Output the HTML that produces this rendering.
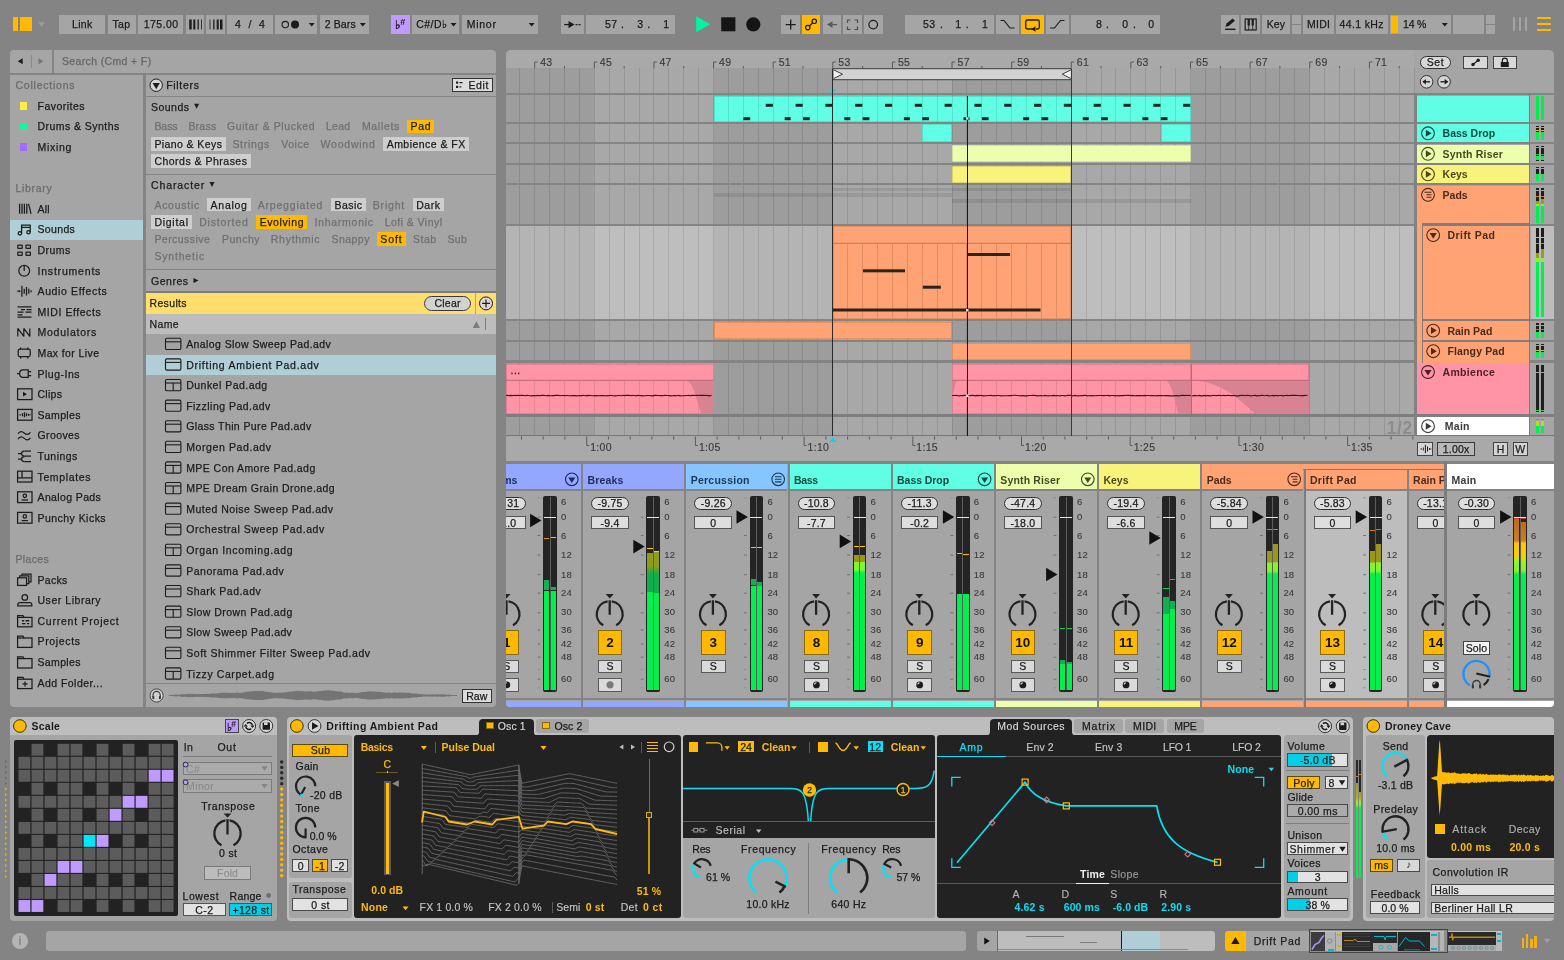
<!DOCTYPE html>
<html><head><meta charset="utf-8"><title>Live Set</title>
<style>
html,body{margin:0;padding:0;background:#848484;}
body{width:1564px;height:960px;position:relative;overflow:hidden;font-family:"Liberation Sans",sans-serif;}
#r{position:absolute;left:0;top:0;width:1564px;height:960px;overflow:hidden;will-change:transform;}
#r div,#r svg{position:absolute;}
#r svg{left:0;top:0;pointer-events:none;}
</style></head><body><div id="r">
<div style="left:13px;top:17.2px;width:5.3px;height:14px;background:#ffb901;"></div>
<div style="left:20.2px;top:17.2px;width:11.5px;height:14px;background:#ffb901;"></div>
<svg width="1564" height="960" viewBox="0 0 1564 960">
<polygon points="38,22.25 45,22.25 41.5,26.75" fill="#9c9c9c"/>
</svg>
<div style="left:58.7px;top:15px;width:46.3px;height:19px;background:#a5a5a5;"></div>
<div style="top:16.1px;height:16px;line-height:16px;font-size:10.5px;color:#1c1c1c;letter-spacing:0.31px;white-space:nowrap;-webkit-text-stroke:0.25px #1c1c1c;left:72px;">Link</div>
<div style="left:107.5px;top:15px;width:28.5px;height:19px;background:#a5a5a5;"></div>
<div style="top:16.1px;height:16px;line-height:16px;font-size:10.5px;color:#1c1c1c;letter-spacing:0.29px;white-space:nowrap;-webkit-text-stroke:0.25px #1c1c1c;left:112.5px;">Tap</div>
<div style="left:138px;top:15px;width:45px;height:19px;background:#a5a5a5;"></div>
<div style="top:16.1px;height:16px;line-height:16px;font-size:10.5px;color:#1c1c1c;letter-spacing:0.48px;white-space:nowrap;-webkit-text-stroke:0.25px #1c1c1c;left:143.7px;">175.00</div>
<div style="left:186px;top:15px;width:18px;height:19px;background:#a5a5a5;"></div>
<div style="left:206.3px;top:15px;width:18.7px;height:19px;background:#a5a5a5;"></div>
<svg width="1564" height="960" viewBox="0 0 1564 960">
<rect x="189.2" y="19.5" width="2.5" height="10" fill="#1c1c1c"/>
<rect x="193.3" y="19.5" width="2.0" height="10" fill="#1c1c1c"/>
<rect x="197.5" y="19.5" width="1.3" height="10" fill="#1c1c1c"/>
<rect x="201.2" y="19.5" width="0.8" height="10" fill="#1c1c1c"/>
<rect x="209.6" y="19.5" width="0.8" height="10" fill="#1c1c1c"/>
<rect x="213.2" y="19.5" width="1.3" height="10" fill="#1c1c1c"/>
<rect x="216.7" y="19.5" width="2.0" height="10" fill="#1c1c1c"/>
<rect x="220" y="19.5" width="2.5" height="10" fill="#1c1c1c"/>
</svg>
<div style="left:227px;top:15px;width:45.8px;height:19px;background:#a5a5a5;"></div>
<div style="top:16.1px;height:16px;line-height:16px;font-size:10.5px;color:#1c1c1c;letter-spacing:0px;white-space:nowrap;-webkit-text-stroke:0.25px #1c1c1c;left:88px;width:300px;text-align:center;">4</div>
<div style="top:16.1px;height:16px;line-height:16px;font-size:10.5px;color:#1c1c1c;letter-spacing:0px;white-space:nowrap;-webkit-text-stroke:0.25px #1c1c1c;left:100px;width:300px;text-align:center;">/</div>
<div style="top:16.1px;height:16px;line-height:16px;font-size:10.5px;color:#1c1c1c;letter-spacing:0px;white-space:nowrap;-webkit-text-stroke:0.25px #1c1c1c;left:112px;width:300px;text-align:center;">4</div>
<div style="left:275px;top:15px;width:42px;height:19px;background:#a5a5a5;"></div>
<svg width="1564" height="960" viewBox="0 0 1564 960">
<circle cx="285.3" cy="24.6" r="3.2" fill="none" stroke="#1c1c1c" stroke-width="1.1"/><circle cx="295" cy="24.6" r="4" fill="#1c1c1c"/>
<polygon points="308.7,23.05 314.7,23.05 311.7,26.55" fill="#1c1c1c"/>
</svg>
<div style="left:319.7px;top:15px;width:49px;height:19px;background:#a5a5a5;"></div>
<div style="top:16.1px;height:16px;line-height:16px;font-size:10.5px;color:#1c1c1c;letter-spacing:0.12px;white-space:nowrap;-webkit-text-stroke:0.25px #1c1c1c;left:324.7px;">2 Bars</div>
<svg width="1564" height="960" viewBox="0 0 1564 960">
<polygon points="359.8,23.05 365.8,23.05 362.8,26.55" fill="#1c1c1c"/>
</svg>
<div style="left:391px;top:15px;width:19px;height:19px;background:#bf9aff;"></div>
<div style="top:17px;height:16px;line-height:16px;font-size:11.5px;color:#1c1c1c;letter-spacing:0px;white-space:nowrap;-webkit-text-stroke:0.4px #1c1c1c;left:394.7px;">♭</div>
<div style="top:14.3px;height:16px;line-height:16px;font-size:9px;color:#1c1c1c;letter-spacing:0px;white-space:nowrap;font-weight:bold;left:400.2px;">#</div>
<div style="left:412px;top:15px;width:47.3px;height:19px;background:#a5a5a5;"></div>
<div style="top:16.1px;height:16px;line-height:16px;font-size:10.5px;color:#1c1c1c;letter-spacing:0.47px;white-space:nowrap;-webkit-text-stroke:0.25px #1c1c1c;left:416.2px;">C#/D♭</div>
<svg width="1564" height="960" viewBox="0 0 1564 960">
<polygon points="450.5,23.05 456.5,23.05 453.5,26.55" fill="#1c1c1c"/>
</svg>
<div style="left:462px;top:15px;width:76px;height:19px;background:#a5a5a5;"></div>
<div style="top:16.1px;height:16px;line-height:16px;font-size:10.5px;color:#1c1c1c;letter-spacing:0.75px;white-space:nowrap;-webkit-text-stroke:0.25px #1c1c1c;left:466.7px;">Minor</div>
<svg width="1564" height="960" viewBox="0 0 1564 960">
<polygon points="528.7,23.05 534.7,23.05 531.7,26.55" fill="#1c1c1c"/>
</svg>
<div style="left:560.5px;top:15px;width:23.2px;height:19px;background:#a5a5a5;"></div>
<svg width="1564" height="960" viewBox="0 0 1564 960">
<path d="M564.2 24.6H573" stroke="#1c1c1c" stroke-width="1.3" fill="none"/><polygon points="568.5,21 574.5,24.6 568.5,28.2" fill="#1c1c1c"/><path d="M575.5 24.6h2M578.6 24.6h2" stroke="#1c1c1c" stroke-width="1.1"/>
</svg>
<div style="left:585.8px;top:15px;width:88.9px;height:19px;background:#a5a5a5;"></div>
<div style="top:16.1px;height:16px;line-height:16px;font-size:10.5px;color:#1c1c1c;letter-spacing:0.4px;white-space:nowrap;-webkit-text-stroke:0.25px #1c1c1c;left:317.4px;width:300px;text-align:right;">57</div>
<div style="top:16.1px;height:16px;line-height:16px;font-size:10.5px;color:#1c1c1c;letter-spacing:0.4px;white-space:nowrap;-webkit-text-stroke:0.25px #1c1c1c;left:343.6px;width:300px;text-align:right;">3</div>
<div style="top:16.1px;height:16px;line-height:16px;font-size:10.5px;color:#1c1c1c;letter-spacing:0.4px;white-space:nowrap;-webkit-text-stroke:0.25px #1c1c1c;left:369.4px;width:300px;text-align:right;">1</div>
<div style="top:16.1px;height:16px;line-height:16px;font-size:10.5px;color:#1c1c1c;letter-spacing:0px;white-space:nowrap;-webkit-text-stroke:0.25px #1c1c1c;left:472.5px;width:300px;text-align:center;">.</div>
<div style="top:16.1px;height:16px;line-height:16px;font-size:10.5px;color:#1c1c1c;letter-spacing:0px;white-space:nowrap;-webkit-text-stroke:0.25px #1c1c1c;left:498.7px;width:300px;text-align:center;">.</div>
<svg width="1564" height="960" viewBox="0 0 1564 960">
<polygon points="696.2,16.3 696.2,32.3 710.3,24.3" fill="#00f5a0"/>
<rect x="721.2" y="17.3" width="14.2" height="14" fill="#151515"/><circle cx="753.3" cy="24.4" r="7.1" fill="#151515"/>
</svg>
<div style="left:781.3px;top:15px;width:18.4px;height:19px;background:#a5a5a5;"></div>
<svg width="1564" height="960" viewBox="0 0 1564 960">
<path d="M785.7 24.6h10M790.7 19.6v10" stroke="#1c1c1c" stroke-width="1.3"/>
</svg>
<div style="left:801.8px;top:15px;width:18.7px;height:19px;background:#ffb901;"></div>
<svg width="1564" height="960" viewBox="0 0 1564 960">
<circle cx="807.8" cy="27.6" r="2.2" fill="none" stroke="#1c1c1c" stroke-width="1.2"/><circle cx="814.3" cy="21.3" r="2.2" fill="none" stroke="#1c1c1c" stroke-width="1.2"/><path d="M809.4 26l3.3-3.2" stroke="#1c1c1c" stroke-width="1.2"/>
</svg>
<div style="left:822.7px;top:15px;width:18.3px;height:19px;background:#a5a5a5;"></div>
<svg width="1564" height="960" viewBox="0 0 1564 960">
<path d="M830 24.6h7" stroke="#5a5a5a" stroke-width="1.3"/><polygon points="827,24.6 832.5,21.2 832.5,28" fill="#5a5a5a"/>
</svg>
<div style="left:843.3px;top:15px;width:18.4px;height:19px;background:#a5a5a5;"></div>
<svg width="1564" height="960" viewBox="0 0 1564 960">
<path d="M847.5 23v-3h3M854.5 20h3v3M857.5 26.5v3h-3M850.5 29.5h-3v-3" stroke="#4a4a4a" stroke-width="1.2" fill="none"/>
</svg>
<div style="left:864px;top:15px;width:18.5px;height:19px;background:#a5a5a5;"></div>
<svg width="1564" height="960" viewBox="0 0 1564 960">
<circle cx="873.2" cy="24.6" r="4.3" fill="none" stroke="#1c1c1c" stroke-width="1.2"/>
</svg>
<div style="left:904.7px;top:15px;width:89.1px;height:19px;background:#a5a5a5;"></div>
<div style="top:16.1px;height:16px;line-height:16px;font-size:10.5px;color:#1c1c1c;letter-spacing:0.4px;white-space:nowrap;-webkit-text-stroke:0.25px #1c1c1c;left:635.4px;width:300px;text-align:right;">53</div>
<div style="top:16.1px;height:16px;line-height:16px;font-size:10.5px;color:#1c1c1c;letter-spacing:0.4px;white-space:nowrap;-webkit-text-stroke:0.25px #1c1c1c;left:661.6px;width:300px;text-align:right;">1</div>
<div style="top:16.1px;height:16px;line-height:16px;font-size:10.5px;color:#1c1c1c;letter-spacing:0.4px;white-space:nowrap;-webkit-text-stroke:0.25px #1c1c1c;left:688.2px;width:300px;text-align:right;">1</div>
<div style="top:16.1px;height:16px;line-height:16px;font-size:10.5px;color:#1c1c1c;letter-spacing:0px;white-space:nowrap;-webkit-text-stroke:0.25px #1c1c1c;left:791.4px;width:300px;text-align:center;">.</div>
<div style="top:16.1px;height:16px;line-height:16px;font-size:10.5px;color:#1c1c1c;letter-spacing:0px;white-space:nowrap;-webkit-text-stroke:0.25px #1c1c1c;left:817.3px;width:300px;text-align:center;">.</div>
<div style="left:996px;top:15px;width:22.9px;height:19px;background:#a5a5a5;"></div>
<svg width="1564" height="960" viewBox="0 0 1564 960">
<path d="M1000.5 20.5h3.5l6 7.5h4.5" stroke="#1c1c1c" stroke-width="1.2" fill="none"/>
</svg>
<div style="left:1021px;top:15px;width:23px;height:19px;background:#ffb901;"></div>
<svg width="1564" height="960" viewBox="0 0 1564 960">
<path d="M1033 29h-5.5a1.8 1.8 0 0 1-1.8-1.8v-5.4a1.8 1.8 0 0 1 1.8-1.8h10a1.8 1.8 0 0 1 1.8 1.8v5.4a1.8 1.8 0 0 1-1.8 1.8h-1.5" stroke="#1c1c1c" stroke-width="1.3" fill="none"/><polygon points="1031.3,29 1035.5,26.3 1035.5,31.7" fill="#1c1c1c"/>
</svg>
<div style="left:1046px;top:15px;width:22.8px;height:19px;background:#a5a5a5;"></div>
<svg width="1564" height="960" viewBox="0 0 1564 960">
<path d="M1050 28h4.5l6-7.5h4" stroke="#1c1c1c" stroke-width="1.2" fill="none"/>
</svg>
<div style="left:1070.8px;top:15px;width:89.2px;height:19px;background:#a5a5a5;"></div>
<div style="top:16.1px;height:16px;line-height:16px;font-size:10.5px;color:#1c1c1c;letter-spacing:0.4px;white-space:nowrap;-webkit-text-stroke:0.25px #1c1c1c;left:802.2px;width:300px;text-align:right;">8</div>
<div style="top:16.1px;height:16px;line-height:16px;font-size:10.5px;color:#1c1c1c;letter-spacing:0.4px;white-space:nowrap;-webkit-text-stroke:0.25px #1c1c1c;left:828.6px;width:300px;text-align:right;">0</div>
<div style="top:16.1px;height:16px;line-height:16px;font-size:10.5px;color:#1c1c1c;letter-spacing:0.4px;white-space:nowrap;-webkit-text-stroke:0.25px #1c1c1c;left:854.6px;width:300px;text-align:right;">0</div>
<div style="top:16.1px;height:16px;line-height:16px;font-size:10.5px;color:#1c1c1c;letter-spacing:0px;white-space:nowrap;-webkit-text-stroke:0.25px #1c1c1c;left:957.5px;width:300px;text-align:center;">.</div>
<div style="top:16.1px;height:16px;line-height:16px;font-size:10.5px;color:#1c1c1c;letter-spacing:0px;white-space:nowrap;-webkit-text-stroke:0.25px #1c1c1c;left:984.5px;width:300px;text-align:center;">.</div>
<div style="left:1221px;top:15px;width:18px;height:19px;background:#a5a5a5;"></div>
<svg width="1564" height="960" viewBox="0 0 1564 960">
<path d="M1225.5 26.8l1-3.2 6.2-5.2 2.2 2.4-6.2 5.2z" fill="#1c1c1c"/><path d="M1225 29.3h10.5" stroke="#1c1c1c" stroke-width="1.4"/>
</svg>
<div style="left:1241.2px;top:15px;width:18.8px;height:19px;background:#a5a5a5;"></div>
<svg width="1564" height="960" viewBox="0 0 1564 960">
<rect x="1245.2" y="19" width="11" height="11" fill="none" stroke="#1c1c1c" stroke-width="1.2"/><rect x="1247.6" y="19" width="2.2" height="6.5" fill="#1c1c1c"/><rect x="1251.6" y="19" width="2.2" height="6.5" fill="#1c1c1c"/><path d="M1248.7 25v5M1252.7 25v5" stroke="#1c1c1c" stroke-width="0.8"/>
</svg>
<div style="left:1262px;top:15px;width:28px;height:19px;background:#a5a5a5;"></div>
<div style="top:16.1px;height:16px;line-height:16px;font-size:10.5px;color:#1c1c1c;letter-spacing:0.04px;white-space:nowrap;-webkit-text-stroke:0.25px #1c1c1c;left:1266.8px;">Key</div>
<div style="left:1292.4px;top:15px;width:8.8px;height:9.2px;background:#a5a5a5;"></div>
<div style="left:1292.4px;top:25.2px;width:8.8px;height:8.8px;background:#a5a5a5;"></div>
<div style="left:1303.3px;top:15px;width:30.5px;height:19px;background:#a5a5a5;"></div>
<div style="top:16.1px;height:16px;line-height:16px;font-size:10.5px;color:#1c1c1c;letter-spacing:0.28px;white-space:nowrap;-webkit-text-stroke:0.25px #1c1c1c;left:1307px;">MIDI</div>
<div style="left:1336px;top:15px;width:51.8px;height:19px;background:#a5a5a5;"></div>
<div style="top:16.1px;height:16px;line-height:16px;font-size:10.5px;color:#1c1c1c;letter-spacing:0.35px;white-space:nowrap;-webkit-text-stroke:0.25px #1c1c1c;left:1339.6px;">44.1 kHz</div>
<div style="left:1390px;top:15px;width:60.9px;height:19px;background:#a5a5a5;"></div>
<div style="left:1391px;top:16px;width:7px;height:17px;background:#ffb901;"></div>
<div style="top:16.1px;height:16px;line-height:16px;font-size:10.5px;color:#1c1c1c;letter-spacing:-0.18px;white-space:nowrap;-webkit-text-stroke:0.25px #1c1c1c;left:1403px;">14 %</div>
<svg width="1564" height="960" viewBox="0 0 1564 960">
<polygon points="1441.8,23.05 1447.8,23.05 1444.8,26.55" fill="#1c1c1c"/>
</svg>
<div style="left:1453px;top:15px;width:30.5px;height:19px;background:#a5a5a5;"></div>
<div style="left:1485.8px;top:15px;width:8.8px;height:9.2px;background:#a5a5a5;"></div>
<div style="left:1485.8px;top:25.2px;width:8.8px;height:8.8px;background:#a5a5a5;"></div>
<div style="left:1513.2px;top:16.8px;width:1.8px;height:14.4px;background:#a3a3a3;"></div>
<div style="left:1519.2px;top:16.8px;width:1.8px;height:14.4px;background:#a3a3a3;"></div>
<div style="left:1525.2px;top:16.8px;width:1.8px;height:14.4px;background:#a3a3a3;"></div>
<div style="left:1537px;top:16.8px;width:14px;height:2.3px;background:#ffb901;"></div>
<div style="left:1537px;top:22.8px;width:14px;height:2.3px;background:#ffb901;"></div>
<div style="left:1537px;top:28.9px;width:14px;height:2.3px;background:#ffb901;"></div>
<div style="left:10px;top:50px;width:486px;height:656.6px;background:#a5a5a5;border-radius:4px;"></div>
<div style="left:10px;top:73px;width:486px;height:2px;background:#848484;"></div>
<div style="left:51.5px;top:50px;width:2px;height:23px;background:#848484;"></div>
<svg width="1564" height="960" viewBox="0 0 1564 960">
<polygon points="22.7,58.3 22.7,64.3 17.7,61.3" fill="#1c1c1c"/>
</svg>
<div style="left:30.5px;top:55px;width:1px;height:13px;background:#8a8a8a;"></div>
<svg width="1564" height="960" viewBox="0 0 1564 960">
<polygon points="38.5,58.3 38.5,64.3 43.5,61.3" fill="#757575"/>
</svg>
<div style="top:53.3px;height:16px;line-height:16px;font-size:10.5px;color:#666;letter-spacing:0.36px;white-space:nowrap;-webkit-text-stroke:0.25px #666;left:62px;">Search (Cmd + F)</div>
<div style="left:143px;top:75px;width:2.5px;height:631.6px;background:#848484;"></div>
<div style="top:77.2px;height:16px;line-height:16px;font-size:10.5px;color:#6b6b6b;letter-spacing:0.77px;white-space:nowrap;-webkit-text-stroke:0.25px #6b6b6b;left:15.5px;">Collections</div>
<div style="left:19.7px;top:102px;width:7.6px;height:7.6px;background:#ffee40;"></div>
<div style="top:97.8px;height:16px;line-height:16px;font-size:10.5px;color:#1c1c1c;letter-spacing:0.48px;white-space:nowrap;-webkit-text-stroke:0.25px #1c1c1c;left:37.5px;">Favorites</div>
<div style="left:19.7px;top:122.6px;width:7.6px;height:7.6px;background:#14f5a0;"></div>
<div style="top:118.4px;height:16px;line-height:16px;font-size:10.5px;color:#1c1c1c;letter-spacing:0.45px;white-space:nowrap;-webkit-text-stroke:0.25px #1c1c1c;left:37.5px;">Drums &amp; Synths</div>
<div style="left:19.7px;top:143.2px;width:7.6px;height:7.6px;background:#a36cff;"></div>
<div style="top:139px;height:16px;line-height:16px;font-size:10.5px;color:#1c1c1c;letter-spacing:0.69px;white-space:nowrap;-webkit-text-stroke:0.25px #1c1c1c;left:37.5px;">Mixing</div>
<div style="top:180.2px;height:16px;line-height:16px;font-size:10.5px;color:#6b6b6b;letter-spacing:0.7px;white-space:nowrap;-webkit-text-stroke:0.25px #6b6b6b;left:15.5px;">Library</div>
<div style="left:10px;top:220px;width:133px;height:20px;background:#b0ced5;"></div>
<div style="top:200.8px;height:16px;line-height:16px;font-size:10.5px;color:#1c1c1c;letter-spacing:0.24px;white-space:nowrap;-webkit-text-stroke:0.25px #1c1c1c;left:37.5px;">All</div>
<div style="top:221.4px;height:16px;line-height:16px;font-size:10.5px;color:#1c1c1c;letter-spacing:0.35px;white-space:nowrap;-webkit-text-stroke:0.25px #1c1c1c;left:37.5px;">Sounds</div>
<div style="top:242px;height:16px;line-height:16px;font-size:10.5px;color:#1c1c1c;letter-spacing:0.44px;white-space:nowrap;-webkit-text-stroke:0.25px #1c1c1c;left:37.5px;">Drums</div>
<div style="top:262.6px;height:16px;line-height:16px;font-size:10.5px;color:#1c1c1c;letter-spacing:0.8px;white-space:nowrap;-webkit-text-stroke:0.25px #1c1c1c;left:37.5px;">Instruments</div>
<div style="top:283.2px;height:16px;line-height:16px;font-size:10.5px;color:#1c1c1c;letter-spacing:0.63px;white-space:nowrap;-webkit-text-stroke:0.25px #1c1c1c;left:37.5px;">Audio Effects</div>
<div style="top:303.8px;height:16px;line-height:16px;font-size:10.5px;color:#1c1c1c;letter-spacing:0.56px;white-space:nowrap;-webkit-text-stroke:0.25px #1c1c1c;left:37.5px;">MIDI Effects</div>
<div style="top:324.4px;height:16px;line-height:16px;font-size:10.5px;color:#1c1c1c;letter-spacing:0.76px;white-space:nowrap;-webkit-text-stroke:0.25px #1c1c1c;left:37.5px;">Modulators</div>
<div style="top:345px;height:16px;line-height:16px;font-size:10.5px;color:#1c1c1c;letter-spacing:0.39px;white-space:nowrap;-webkit-text-stroke:0.25px #1c1c1c;left:37.5px;">Max for Live</div>
<div style="top:365.6px;height:16px;line-height:16px;font-size:10.5px;color:#1c1c1c;letter-spacing:0.5px;white-space:nowrap;-webkit-text-stroke:0.25px #1c1c1c;left:37.5px;">Plug-Ins</div>
<div style="top:386.2px;height:16px;line-height:16px;font-size:10.5px;color:#1c1c1c;letter-spacing:0.27px;white-space:nowrap;-webkit-text-stroke:0.25px #1c1c1c;left:37.5px;">Clips</div>
<div style="top:406.8px;height:16px;line-height:16px;font-size:10.5px;color:#1c1c1c;letter-spacing:0.35px;white-space:nowrap;-webkit-text-stroke:0.25px #1c1c1c;left:37.5px;">Samples</div>
<div style="top:427.4px;height:16px;line-height:16px;font-size:10.5px;color:#1c1c1c;letter-spacing:0.4px;white-space:nowrap;-webkit-text-stroke:0.25px #1c1c1c;left:37.5px;">Grooves</div>
<div style="top:448px;height:16px;line-height:16px;font-size:10.5px;color:#1c1c1c;letter-spacing:0.48px;white-space:nowrap;-webkit-text-stroke:0.25px #1c1c1c;left:37.5px;">Tunings</div>
<div style="top:468.6px;height:16px;line-height:16px;font-size:10.5px;color:#1c1c1c;letter-spacing:0.64px;white-space:nowrap;-webkit-text-stroke:0.25px #1c1c1c;left:37.5px;">Templates</div>
<div style="top:489.2px;height:16px;line-height:16px;font-size:10.5px;color:#1c1c1c;letter-spacing:0.38px;white-space:nowrap;-webkit-text-stroke:0.25px #1c1c1c;left:37.5px;">Analog Pads</div>
<div style="top:509.8px;height:16px;line-height:16px;font-size:10.5px;color:#1c1c1c;letter-spacing:0.46px;white-space:nowrap;-webkit-text-stroke:0.25px #1c1c1c;left:37.5px;">Punchy Kicks</div>
<div style="top:551px;height:16px;line-height:16px;font-size:10.5px;color:#6b6b6b;letter-spacing:0.35px;white-space:nowrap;-webkit-text-stroke:0.25px #6b6b6b;left:15.5px;">Places</div>
<div style="top:571.6px;height:16px;line-height:16px;font-size:10.5px;color:#1c1c1c;letter-spacing:0.3px;white-space:nowrap;-webkit-text-stroke:0.25px #1c1c1c;left:37.5px;">Packs</div>
<div style="top:592.2px;height:16px;line-height:16px;font-size:10.5px;color:#1c1c1c;letter-spacing:0.54px;white-space:nowrap;-webkit-text-stroke:0.25px #1c1c1c;left:37.5px;">User Library</div>
<div style="top:612.8px;height:16px;line-height:16px;font-size:10.5px;color:#1c1c1c;letter-spacing:0.76px;white-space:nowrap;-webkit-text-stroke:0.25px #1c1c1c;left:37.5px;">Current Project</div>
<div style="top:633.4px;height:16px;line-height:16px;font-size:10.5px;color:#1c1c1c;letter-spacing:0.67px;white-space:nowrap;-webkit-text-stroke:0.25px #1c1c1c;left:37.5px;">Projects</div>
<div style="top:654px;height:16px;line-height:16px;font-size:10.5px;color:#1c1c1c;letter-spacing:0.35px;white-space:nowrap;-webkit-text-stroke:0.25px #1c1c1c;left:37.5px;">Samples</div>
<div style="top:674.6px;height:16px;line-height:16px;font-size:10.5px;color:#1c1c1c;letter-spacing:0.46px;white-space:nowrap;-webkit-text-stroke:0.25px #1c1c1c;left:37.5px;">Add Folder...</div>
<svg width="1564" height="960" viewBox="0 0 1564 960">
<g transform="translate(17,202.8)" stroke="#1c1c1c" stroke-width="1.25" fill="none"><path d="M2.6 1v10M5 1v10M7.4 1v10M9.8 1v10M11.6 1l2.4 10"/></g>
<g transform="translate(17,223.4)" stroke="#1c1c1c" stroke-width="1.25" fill="none"><path d="M4.6 9.8V1.6h8.6v7"/><path d="M4.6 4h8.6"/><circle cx="2.9" cy="9.9" r="1.7"/><circle cx="11.5" cy="8.8" r="1.7"/></g>
<g transform="translate(17,244)" stroke="#1c1c1c" stroke-width="1.25" fill="none"><rect x="0.8" y="1" width="4.4" height="3.4" rx="0.6"/><rect x="9" y="1" width="4.4" height="3.4" rx="0.6"/><rect x="0.8" y="8" width="4.4" height="3.4" rx="0.6"/><rect x="9" y="8" width="4.4" height="3.4" rx="0.6"/></g>
<g transform="translate(17,264.6)" stroke="#1c1c1c" stroke-width="1.25" fill="none"><circle cx="7.2" cy="6.2" r="5.4"/><path d="M7.2 1v5.4"/></g>
<g transform="translate(17,285.2)" stroke="#1c1c1c" stroke-width="1.25" fill="none"><path d="M0.3 6h2.2M2.6 5v2M4.9 0.5v11M7.2 3.5v5M9.5 1.8v8.4M11.8 3.5v5M14.1 5v2"/></g>
<g transform="translate(17,305.8)" stroke="#1c1c1c" stroke-width="1.25" fill="none"><path d="M0.5 1.2h14M4 3.8h4M9.5 3.8h5M0.5 6.4h6M8.5 6.4h6M0.5 9h5M0.5 11.4h14"/></g>
<g transform="translate(17,326.4)" stroke="#1c1c1c" stroke-width="1.25" fill="none"><path d="M0.8 10V2l6 8V2l6 8V2" stroke-linejoin="bevel"/></g>
<g transform="translate(17,347)" stroke="#1c1c1c" stroke-width="1.25" fill="none"><rect x="1.2" y="2.2" width="12" height="7.4" rx="1.5"/><path d="M3.6 2.2V0.6M10.8 2.2V0.6M3.6 9.6v1.8M10.8 9.6v1.8"/></g>
<g transform="translate(17,367.6)" stroke="#1c1c1c" stroke-width="1.25" fill="none"><path d="M0 6h2.6"/><path d="M2.6 6c0-2.4 1.3-3.8 3.4-3.8h5.2v7.6H6C3.900 9.8 2.6 8.400 2.6 6z"/><path d="M11.200 4h3M11.200 8h3"/></g>
<g transform="translate(17,388.2)" stroke="#1c1c1c" stroke-width="1.25" fill="none"><rect x="0.6" y="0.6" width="14.4" height="10.800"/><polygon points="6,3.6 10,6 6,8.4" fill="#1c1c1c" stroke="none"/></g>
<g transform="translate(17,408.8)" stroke="#1c1c1c" stroke-width="1.25" fill="none"><rect x="0.6" y="0.6" width="14.4" height="10.800"/><path d="M2.500 6h1.500M5.500 4.500v3M7.500 3.500v5M9.500 4.500v3M11.500 5v2M12.500 6h1"/></g>
<g transform="translate(17,429.4)" stroke="#1c1c1c" stroke-width="1.25" fill="none"><path d="M1 4.200c2-2.600 4-2.600 6.200-0.600s4.200 2 6.200-0.600"/><path d="M1 9.600c2-2.600 4-2.600 6.200-0.600s4.200 2 6.200-0.600"/></g>
<g transform="translate(17,450)" stroke="#1c1c1c" stroke-width="1.25" fill="none"><path d="M1 3.500h3.500M7.500 1h6.500M7.500 6h6.500"/><path d="M7.500 1c-2 0-3 1-3 2.500s1 2.500 3 2.500"/><path d="M1 9h3.500M7.500 11.500h6.500"/><path d="M7.500 6.500c-2 0-3 1-3 2.500s1 2.500 3 2.500"/></g>
<g transform="translate(17,470.6)" stroke="#1c1c1c" stroke-width="1.25" fill="none"><rect x="0.6" y="0.6" width="14.400" height="10.800"/><path d="M0.6 7.200h14.400M5 0.6v6.600"/></g>
<g transform="translate(17,491.2)" stroke="#1c1c1c" stroke-width="1.25" fill="none"><rect x="0.6" y="0.6" width="14.400" height="10.800"/><circle cx="7.800" cy="4.600" r="1.700"/><path d="M4.600 8.800h6.400"/></g>
<g transform="translate(17,511.8)" stroke="#1c1c1c" stroke-width="1.25" fill="none"><rect x="0.6" y="0.6" width="14.400" height="10.800"/><circle cx="7.800" cy="4.600" r="1.700"/><path d="M4.600 8.800h6.400"/></g>
<g transform="translate(17,573.6)" stroke="#1c1c1c" stroke-width="1.25" fill="none"><rect x="0.6" y="4.200" width="9" height="7.600"/><path d="M2.800 4.200V2.400h9v7.600h-2.200"/><path d="M5 2.400V0.600h9v7.600h-2.200"/></g>
<g transform="translate(17,594.2)" stroke="#1c1c1c" stroke-width="1.25" fill="none"><circle cx="7.800" cy="3.200" r="2.800"/><path d="M0.800 11.600v-1.200c0-1.200 0.800-2 2-2h10c1.200 0 2 0.800 2 2v1.200z"/></g>
<g transform="translate(17,614.8)" stroke="#1c1c1c" stroke-width="1.25" fill="none"><path d="M0.600 2.600V0.800h5.400l1 1.800"/><rect x="0.600" y="2.600" width="14.400" height="9.400"/><path d="M5 6h2.200M8.600 6h3.600M5 8.800h3.600M10 8.800h2.200" stroke-width="1.400"/></g>
<g transform="translate(17,635.4)" stroke="#1c1c1c" stroke-width="1.25" fill="none"><path d="M0.600 2.600V0.800h5.400l1 1.800"/><rect x="0.600" y="2.600" width="14.400" height="9.400"/></g>
<g transform="translate(17,656)" stroke="#1c1c1c" stroke-width="1.25" fill="none"><path d="M0.600 2.600V0.800h5.400l1 1.800"/><rect x="0.600" y="2.600" width="14.400" height="9.400"/></g>
<g transform="translate(17,676.6)" stroke="#1c1c1c" stroke-width="1.25" fill="none"><path d="M0.600 2.600V0.800h5.400l1 1.800"/><rect x="0.600" y="2.600" width="14.400" height="9.400"/><path d="M5.500 7.400h5M8 4.900v5"/></g>
<circle cx="156.200" cy="85.200" r="6.200" fill="#d4d4d4" stroke="#1c1c1c" stroke-width="1"/><polygon points="152.600,83 159.800,83 156.200,89.300" fill="#1c1c1c"/>
</svg>
<div style="top:77.2px;height:16px;line-height:16px;font-size:10.5px;color:#1c1c1c;letter-spacing:0.7px;white-space:nowrap;-webkit-text-stroke:0.25px #1c1c1c;left:166.2px;">Filters</div>
<div style="left:452px;top:78px;width:40.8px;height:13.7px;background:#dcdcdc;border:1px solid #333;box-sizing:border-box;"></div>
<svg width="1564" height="960" viewBox="0 0 1564 960">
<rect x="456" y="81.500" width="2.200" height="2.200" fill="#1c1c1c"/><rect x="456" y="85.800" width="2.200" height="2.200" fill="#1c1c1c"/><path d="M459.500 82.600h3M459.500 86.900h1.800" stroke="#1c1c1c" stroke-width="1.200"/>
</svg>
<div style="top:77px;height:16px;line-height:16px;font-size:10.5px;color:#1c1c1c;letter-spacing:0.6px;white-space:nowrap;-webkit-text-stroke:0.25px #1c1c1c;left:468.5px;">Edit</div>
<div style="left:145.5px;top:95.8px;width:350.5px;height:1.7px;background:#848484;"></div>
<div style="top:98.6px;height:16px;line-height:16px;font-size:10.5px;color:#1c1c1c;letter-spacing:0.48px;white-space:nowrap;-webkit-text-stroke:0.25px #1c1c1c;left:151px;">Sounds</div>
<svg width="1564" height="960" viewBox="0 0 1564 960">
<polygon points="194.1,103.7 199.1,103.7 196.6,108.7" fill="#1c1c1c"/>
</svg>
<div style="top:118.3px;height:16px;line-height:16px;font-size:10.5px;color:#707070;letter-spacing:-0.04px;white-space:nowrap;-webkit-text-stroke:0.25px #707070;left:154.4px;">Bass</div>
<div style="top:118.3px;height:16px;line-height:16px;font-size:10.5px;color:#707070;letter-spacing:0.23px;white-space:nowrap;-webkit-text-stroke:0.25px #707070;left:188.4px;">Brass</div>
<div style="top:118.3px;height:16px;line-height:16px;font-size:10.5px;color:#707070;letter-spacing:0.59px;white-space:nowrap;-webkit-text-stroke:0.25px #707070;left:227px;">Guitar &amp; Plucked</div>
<div style="top:118.3px;height:16px;line-height:16px;font-size:10.5px;color:#707070;letter-spacing:0.26px;white-space:nowrap;-webkit-text-stroke:0.25px #707070;left:326px;">Lead</div>
<div style="top:118.3px;height:16px;line-height:16px;font-size:10.5px;color:#707070;letter-spacing:0.69px;white-space:nowrap;-webkit-text-stroke:0.25px #707070;left:361.9px;">Mallets</div>
<div style="left:407.2px;top:119.5px;width:27.3px;height:13.8px;background:#ffb901;"></div>
<div style="top:118.3px;height:16px;line-height:16px;font-size:10.5px;color:#1c1c1c;letter-spacing:0.6px;white-space:nowrap;-webkit-text-stroke:0.25px #1c1c1c;left:410.6px;">Pad</div>
<div style="left:151px;top:136.8px;width:74.8px;height:13.8px;background:#cecece;"></div>
<div style="top:135.6px;height:16px;line-height:16px;font-size:10.5px;color:#1c1c1c;letter-spacing:0.41px;white-space:nowrap;-webkit-text-stroke:0.25px #1c1c1c;left:154.4px;">Piano &amp; Keys</div>
<div style="top:135.6px;height:16px;line-height:16px;font-size:10.5px;color:#707070;letter-spacing:0.7px;white-space:nowrap;-webkit-text-stroke:0.25px #707070;left:232.4px;">Strings</div>
<div style="top:135.6px;height:16px;line-height:16px;font-size:10.5px;color:#707070;letter-spacing:0.5px;white-space:nowrap;-webkit-text-stroke:0.25px #707070;left:281.3px;">Voice</div>
<div style="top:135.6px;height:16px;line-height:16px;font-size:10.5px;color:#707070;letter-spacing:0.77px;white-space:nowrap;-webkit-text-stroke:0.25px #707070;left:320.6px;">Woodwind</div>
<div style="left:383.3px;top:136.8px;width:85.7px;height:13.8px;background:#cecece;"></div>
<div style="top:135.6px;height:16px;line-height:16px;font-size:10.5px;color:#1c1c1c;letter-spacing:0.46px;white-space:nowrap;-webkit-text-stroke:0.25px #1c1c1c;left:386.7px;">Ambience &amp; FX</div>
<div style="left:151px;top:154.2px;width:99.8px;height:13.8px;background:#cecece;"></div>
<div style="top:153px;height:16px;line-height:16px;font-size:10.5px;color:#1c1c1c;letter-spacing:0.49px;white-space:nowrap;-webkit-text-stroke:0.25px #1c1c1c;left:154.4px;">Chords &amp; Phrases</div>
<div style="left:145.5px;top:174.3px;width:350.5px;height:1.1px;background:#848484;"></div>
<div style="top:177px;height:16px;line-height:16px;font-size:10.5px;color:#1c1c1c;letter-spacing:0.88px;white-space:nowrap;-webkit-text-stroke:0.25px #1c1c1c;left:151px;">Character</div>
<svg width="1564" height="960" viewBox="0 0 1564 960">
<polygon points="209.5,182.1 214.5,182.1 212,187.1" fill="#1c1c1c"/>
</svg>
<div style="top:196.5px;height:16px;line-height:16px;font-size:10.5px;color:#707070;letter-spacing:0.74px;white-space:nowrap;-webkit-text-stroke:0.25px #707070;left:154.4px;">Acoustic</div>
<div style="left:207.2px;top:197.7px;width:43.8px;height:13.8px;background:#cecece;"></div>
<div style="top:196.5px;height:16px;line-height:16px;font-size:10.5px;color:#1c1c1c;letter-spacing:0.72px;white-space:nowrap;-webkit-text-stroke:0.25px #1c1c1c;left:210.6px;">Analog</div>
<div style="top:196.5px;height:16px;line-height:16px;font-size:10.5px;color:#707070;letter-spacing:0.81px;white-space:nowrap;-webkit-text-stroke:0.25px #707070;left:257.7px;">Arpeggiated</div>
<div style="left:331.2px;top:197.7px;width:34.6px;height:13.8px;background:#cecece;"></div>
<div style="top:196.5px;height:16px;line-height:16px;font-size:10.5px;color:#1c1c1c;letter-spacing:0.42px;white-space:nowrap;-webkit-text-stroke:0.25px #1c1c1c;left:334.6px;">Basic</div>
<div style="top:196.5px;height:16px;line-height:16px;font-size:10.5px;color:#707070;letter-spacing:0.79px;white-space:nowrap;-webkit-text-stroke:0.25px #707070;left:372.8px;">Bright</div>
<div style="left:412.8px;top:197.7px;width:31.2px;height:13.8px;background:#cecece;"></div>
<div style="top:196.5px;height:16px;line-height:16px;font-size:10.5px;color:#1c1c1c;letter-spacing:0.56px;white-space:nowrap;-webkit-text-stroke:0.25px #1c1c1c;left:416.2px;">Dark</div>
<div style="left:151px;top:215px;width:41.2px;height:13.8px;background:#cecece;"></div>
<div style="top:213.8px;height:16px;line-height:16px;font-size:10.5px;color:#1c1c1c;letter-spacing:0.74px;white-space:nowrap;-webkit-text-stroke:0.25px #1c1c1c;left:154.4px;">Digital</div>
<div style="top:213.8px;height:16px;line-height:16px;font-size:10.5px;color:#707070;letter-spacing:0.83px;white-space:nowrap;-webkit-text-stroke:0.25px #707070;left:199.2px;">Distorted</div>
<div style="left:256.3px;top:215px;width:51.2px;height:13.8px;background:#ffb901;"></div>
<div style="top:213.8px;height:16px;line-height:16px;font-size:10.5px;color:#1c1c1c;letter-spacing:0.59px;white-space:nowrap;-webkit-text-stroke:0.25px #1c1c1c;left:259.7px;">Evolving</div>
<div style="top:213.8px;height:16px;line-height:16px;font-size:10.5px;color:#707070;letter-spacing:0.73px;white-space:nowrap;-webkit-text-stroke:0.25px #707070;left:314.5px;">Inharmonic</div>
<div style="top:213.8px;height:16px;line-height:16px;font-size:10.5px;color:#707070;letter-spacing:0.45px;white-space:nowrap;-webkit-text-stroke:0.25px #707070;left:384.7px;">Lofi &amp; Vinyl</div>
<div style="top:231.1px;height:16px;line-height:16px;font-size:10.5px;color:#707070;letter-spacing:0.46px;white-space:nowrap;-webkit-text-stroke:0.25px #707070;left:154.4px;">Percussive</div>
<div style="top:231.1px;height:16px;line-height:16px;font-size:10.5px;color:#707070;letter-spacing:0.54px;white-space:nowrap;-webkit-text-stroke:0.25px #707070;left:221.9px;">Punchy</div>
<div style="top:231.1px;height:16px;line-height:16px;font-size:10.5px;color:#707070;letter-spacing:0.72px;white-space:nowrap;-webkit-text-stroke:0.25px #707070;left:270.8px;">Rhythmic</div>
<div style="top:231.1px;height:16px;line-height:16px;font-size:10.5px;color:#707070;letter-spacing:0.46px;white-space:nowrap;-webkit-text-stroke:0.25px #707070;left:331.5px;">Snappy</div>
<div style="left:376.9px;top:232.3px;width:29.1px;height:13.8px;background:#ffb901;"></div>
<div style="top:231.1px;height:16px;line-height:16px;font-size:10.5px;color:#1c1c1c;letter-spacing:0.9px;white-space:nowrap;-webkit-text-stroke:0.25px #1c1c1c;left:380.3px;">Soft</div>
<div style="top:231.1px;height:16px;line-height:16px;font-size:10.5px;color:#707070;letter-spacing:0.52px;white-space:nowrap;-webkit-text-stroke:0.25px #707070;left:413px;">Stab</div>
<div style="top:231.1px;height:16px;line-height:16px;font-size:10.5px;color:#707070;letter-spacing:0.24px;white-space:nowrap;-webkit-text-stroke:0.25px #707070;left:447.6px;">Sub</div>
<div style="top:248.4px;height:16px;line-height:16px;font-size:10.5px;color:#707070;letter-spacing:0.82px;white-space:nowrap;-webkit-text-stroke:0.25px #707070;left:154.4px;">Synthetic</div>
<div style="left:145.5px;top:269.1px;width:350.5px;height:1px;background:#848484;"></div>
<div style="top:272.8px;height:16px;line-height:16px;font-size:10.5px;color:#1c1c1c;letter-spacing:0.51px;white-space:nowrap;-webkit-text-stroke:0.25px #1c1c1c;left:151px;">Genres</div>
<svg width="1564" height="960" viewBox="0 0 1564 960">
<polygon points="193.5,277.9 193.5,282.9 198.5,280.4" fill="#1c1c1c"/>
</svg>
<div style="left:145.5px;top:291.2px;width:350.5px;height:2px;background:#7c7c7c;"></div>
<div style="left:145.5px;top:293.2px;width:350.5px;height:20.7px;background:#ffde6e;"></div>
<div style="top:295.4px;height:16px;line-height:16px;font-size:10.5px;color:#1c1c1c;letter-spacing:0.35px;white-space:nowrap;-webkit-text-stroke:0.25px #1c1c1c;left:149.5px;">Results</div>
<div style="left:424px;top:296.4px;width:47px;height:14.2px;background:#d2d2d2;border:1px solid #3a3a3a;box-sizing:border-box;border-radius:7.5px;"></div>
<div style="top:295.3px;height:16px;line-height:16px;font-size:10.5px;color:#1c1c1c;letter-spacing:0.28px;white-space:nowrap;-webkit-text-stroke:0.25px #1c1c1c;left:297.64px;width:300px;text-align:center;">Clear</div>
<div style="left:475px;top:293.2px;width:1px;height:20.7px;background:#b9a86a;"></div>
<svg width="1564" height="960" viewBox="0 0 1564 960">
<circle cx="486" cy="303.400" r="6.500" fill="#d8d8d8" stroke="#1c1c1c" stroke-width="1"/><path d="M482 303.400h8M486 299.400v8" stroke="#1c1c1c" stroke-width="1.200"/>
</svg>
<div style="left:145.5px;top:313.9px;width:350.5px;height:20.3px;background:#bdbdbd;"></div>
<div style="top:316px;height:16px;line-height:16px;font-size:10.5px;color:#1c1c1c;letter-spacing:0.37px;white-space:nowrap;-webkit-text-stroke:0.25px #1c1c1c;left:149.5px;">Name</div>
<svg width="1564" height="960" viewBox="0 0 1564 960">
<polygon points="472.700,328 480,328 476.350,321.200" fill="#7c7c7c"/>
</svg>
<div style="left:484.6px;top:318px;width:1.2px;height:12px;background:#7c7c7c;"></div>
<div style="left:145.5px;top:334.2px;width:350.5px;height:20.5px;background:#a2a2a2;"></div>
<div style="left:145.5px;top:354.7px;width:350.5px;height:20.6px;background:#b0ced5;"></div>
<div style="top:336px;height:16px;line-height:16px;font-size:10.5px;color:#1c1c1c;letter-spacing:0.41px;white-space:nowrap;-webkit-text-stroke:0.25px #1c1c1c;left:186.2px;">Analog Slow Sweep Pad.adv</div>
<svg width="1564" height="960" viewBox="0 0 1564 960">
<rect x="165.500" y="338.3" width="15.400" height="11.200" rx="1.300" fill="none" stroke="#1c1c1c" stroke-width="1.100"/><path d="M165.500 341.8h15.400" stroke="#1c1c1c" stroke-width="1.100"/>
</svg>
<div style="top:356.6px;height:16px;line-height:16px;font-size:10.5px;color:#1c1c1c;letter-spacing:0.74px;white-space:nowrap;-webkit-text-stroke:0.25px #1c1c1c;left:186.2px;">Drifting Ambient Pad.adv</div>
<svg width="1564" height="960" viewBox="0 0 1564 960">
<rect x="165.500" y="358.9" width="15.400" height="11.200" rx="1.300" fill="none" stroke="#1c1c1c" stroke-width="1.100"/><path d="M165.500 362.4h15.400" stroke="#1c1c1c" stroke-width="1.100"/>
</svg>
<div style="top:377.2px;height:16px;line-height:16px;font-size:10.5px;color:#1c1c1c;letter-spacing:0.48px;white-space:nowrap;-webkit-text-stroke:0.25px #1c1c1c;left:186.2px;">Dunkel Pad.adg</div>
<svg width="1564" height="960" viewBox="0 0 1564 960">
<rect x="165.500" y="379.5" width="15.400" height="11.200" rx="1.300" fill="none" stroke="#1c1c1c" stroke-width="1.100"/><path d="M165.500 383h15.400" stroke="#1c1c1c" stroke-width="1.100"/><path d="M173.200 383v7.700" stroke="#1c1c1c" stroke-width="1.100"/>
</svg>
<div style="top:397.8px;height:16px;line-height:16px;font-size:10.5px;color:#1c1c1c;letter-spacing:0.47px;white-space:nowrap;-webkit-text-stroke:0.25px #1c1c1c;left:186.2px;">Fizzling Pad.adv</div>
<svg width="1564" height="960" viewBox="0 0 1564 960">
<rect x="165.500" y="400.1" width="15.400" height="11.200" rx="1.300" fill="none" stroke="#1c1c1c" stroke-width="1.100"/><path d="M165.500 403.6h15.400" stroke="#1c1c1c" stroke-width="1.100"/>
</svg>
<div style="top:418.4px;height:16px;line-height:16px;font-size:10.5px;color:#1c1c1c;letter-spacing:0.39px;white-space:nowrap;-webkit-text-stroke:0.25px #1c1c1c;left:186.2px;">Glass Thin Pure Pad.adv</div>
<svg width="1564" height="960" viewBox="0 0 1564 960">
<rect x="165.500" y="420.7" width="15.400" height="11.200" rx="1.300" fill="none" stroke="#1c1c1c" stroke-width="1.100"/><path d="M165.500 424.2h15.400" stroke="#1c1c1c" stroke-width="1.100"/>
</svg>
<div style="top:439px;height:16px;line-height:16px;font-size:10.5px;color:#1c1c1c;letter-spacing:0.6px;white-space:nowrap;-webkit-text-stroke:0.25px #1c1c1c;left:186.2px;">Morgen Pad.adv</div>
<svg width="1564" height="960" viewBox="0 0 1564 960">
<rect x="165.500" y="441.3" width="15.400" height="11.200" rx="1.300" fill="none" stroke="#1c1c1c" stroke-width="1.100"/><path d="M165.500 444.8h15.400" stroke="#1c1c1c" stroke-width="1.100"/>
</svg>
<div style="top:459.6px;height:16px;line-height:16px;font-size:10.5px;color:#1c1c1c;letter-spacing:0.44px;white-space:nowrap;-webkit-text-stroke:0.25px #1c1c1c;left:186.2px;">MPE Con Amore Pad.adg</div>
<svg width="1564" height="960" viewBox="0 0 1564 960">
<rect x="165.500" y="461.9" width="15.400" height="11.200" rx="1.300" fill="none" stroke="#1c1c1c" stroke-width="1.100"/><path d="M165.500 465.4h15.400" stroke="#1c1c1c" stroke-width="1.100"/><path d="M173.200 465.4v7.700" stroke="#1c1c1c" stroke-width="1.100"/>
</svg>
<div style="top:480.2px;height:16px;line-height:16px;font-size:10.5px;color:#1c1c1c;letter-spacing:0.45px;white-space:nowrap;-webkit-text-stroke:0.25px #1c1c1c;left:186.2px;">MPE Dream Grain Drone.adg</div>
<svg width="1564" height="960" viewBox="0 0 1564 960">
<rect x="165.500" y="482.5" width="15.400" height="11.200" rx="1.300" fill="none" stroke="#1c1c1c" stroke-width="1.100"/><path d="M165.500 486h15.400" stroke="#1c1c1c" stroke-width="1.100"/><path d="M173.200 486v7.700" stroke="#1c1c1c" stroke-width="1.100"/>
</svg>
<div style="top:500.8px;height:16px;line-height:16px;font-size:10.5px;color:#1c1c1c;letter-spacing:0.48px;white-space:nowrap;-webkit-text-stroke:0.25px #1c1c1c;left:186.2px;">Muted Noise Sweep Pad.adv</div>
<svg width="1564" height="960" viewBox="0 0 1564 960">
<rect x="165.500" y="503.1" width="15.400" height="11.200" rx="1.300" fill="none" stroke="#1c1c1c" stroke-width="1.100"/><path d="M165.500 506.6h15.400" stroke="#1c1c1c" stroke-width="1.100"/>
</svg>
<div style="top:521.4px;height:16px;line-height:16px;font-size:10.5px;color:#1c1c1c;letter-spacing:0.57px;white-space:nowrap;-webkit-text-stroke:0.25px #1c1c1c;left:186.2px;">Orchestral Sweep Pad.adv</div>
<svg width="1564" height="960" viewBox="0 0 1564 960">
<rect x="165.500" y="523.7" width="15.400" height="11.200" rx="1.300" fill="none" stroke="#1c1c1c" stroke-width="1.100"/><path d="M165.500 527.2h15.400" stroke="#1c1c1c" stroke-width="1.100"/>
</svg>
<div style="top:542px;height:16px;line-height:16px;font-size:10.5px;color:#1c1c1c;letter-spacing:0.66px;white-space:nowrap;-webkit-text-stroke:0.25px #1c1c1c;left:186.2px;">Organ Incoming.adg</div>
<svg width="1564" height="960" viewBox="0 0 1564 960">
<rect x="165.500" y="544.3" width="15.400" height="11.200" rx="1.300" fill="none" stroke="#1c1c1c" stroke-width="1.100"/><path d="M165.500 547.8h15.400" stroke="#1c1c1c" stroke-width="1.100"/><path d="M173.200 547.8v7.700" stroke="#1c1c1c" stroke-width="1.100"/>
</svg>
<div style="top:562.6px;height:16px;line-height:16px;font-size:10.5px;color:#1c1c1c;letter-spacing:0.51px;white-space:nowrap;-webkit-text-stroke:0.25px #1c1c1c;left:186.2px;">Panorama Pad.adv</div>
<svg width="1564" height="960" viewBox="0 0 1564 960">
<rect x="165.500" y="564.9" width="15.400" height="11.200" rx="1.300" fill="none" stroke="#1c1c1c" stroke-width="1.100"/><path d="M165.500 568.4h15.400" stroke="#1c1c1c" stroke-width="1.100"/>
</svg>
<div style="top:583.2px;height:16px;line-height:16px;font-size:10.5px;color:#1c1c1c;letter-spacing:0.47px;white-space:nowrap;-webkit-text-stroke:0.25px #1c1c1c;left:186.2px;">Shark Pad.adv</div>
<svg width="1564" height="960" viewBox="0 0 1564 960">
<rect x="165.500" y="585.5" width="15.400" height="11.200" rx="1.300" fill="none" stroke="#1c1c1c" stroke-width="1.100"/><path d="M165.500 589h15.400" stroke="#1c1c1c" stroke-width="1.100"/>
</svg>
<div style="top:603.8px;height:16px;line-height:16px;font-size:10.5px;color:#1c1c1c;letter-spacing:0.47px;white-space:nowrap;-webkit-text-stroke:0.25px #1c1c1c;left:186.2px;">Slow Drown Pad.adg</div>
<svg width="1564" height="960" viewBox="0 0 1564 960">
<rect x="165.500" y="606.1" width="15.400" height="11.200" rx="1.300" fill="none" stroke="#1c1c1c" stroke-width="1.100"/><path d="M165.500 609.6h15.400" stroke="#1c1c1c" stroke-width="1.100"/><path d="M173.200 609.6v7.700" stroke="#1c1c1c" stroke-width="1.100"/>
</svg>
<div style="top:624.4px;height:16px;line-height:16px;font-size:10.5px;color:#1c1c1c;letter-spacing:0.38px;white-space:nowrap;-webkit-text-stroke:0.25px #1c1c1c;left:186.2px;">Slow Sweep Pad.adv</div>
<svg width="1564" height="960" viewBox="0 0 1564 960">
<rect x="165.500" y="626.7" width="15.400" height="11.200" rx="1.300" fill="none" stroke="#1c1c1c" stroke-width="1.100"/><path d="M165.500 630.2h15.400" stroke="#1c1c1c" stroke-width="1.100"/>
</svg>
<div style="top:645px;height:16px;line-height:16px;font-size:10.5px;color:#1c1c1c;letter-spacing:0.55px;white-space:nowrap;-webkit-text-stroke:0.25px #1c1c1c;left:186.2px;">Soft Shimmer Filter Sweep Pad.adv</div>
<svg width="1564" height="960" viewBox="0 0 1564 960">
<rect x="165.500" y="647.3" width="15.400" height="11.200" rx="1.300" fill="none" stroke="#1c1c1c" stroke-width="1.100"/><path d="M165.500 650.8h15.400" stroke="#1c1c1c" stroke-width="1.100"/>
</svg>
<div style="top:665.6px;height:16px;line-height:16px;font-size:10.5px;color:#1c1c1c;letter-spacing:0.59px;white-space:nowrap;-webkit-text-stroke:0.25px #1c1c1c;left:186.2px;">Tizzy Carpet.adg</div>
<svg width="1564" height="960" viewBox="0 0 1564 960">
<rect x="165.500" y="667.9" width="15.400" height="11.200" rx="1.300" fill="none" stroke="#1c1c1c" stroke-width="1.100"/><path d="M165.500 671.4h15.400" stroke="#1c1c1c" stroke-width="1.100"/><path d="M173.200 671.4v7.700" stroke="#1c1c1c" stroke-width="1.100"/>
</svg>
<div style="left:145.5px;top:683px;width:350.5px;height:1.1px;background:#848484;"></div>
<svg width="1564" height="960" viewBox="0 0 1564 960">
<circle cx="156.600" cy="695.500" r="6.600" fill="#d0d0d0" stroke="#4a4a4a" stroke-width="1"/><path d="M153 697v-2a3.600 3.600 0 0 1 7.200 0v2" fill="none" stroke="#3a3a3a" stroke-width="1.100"/><rect x="152.300" y="696" width="2" height="3.200" rx="0.800" fill="#3a3a3a"/><rect x="158.900" y="696" width="2" height="3.200" rx="0.800" fill="#3a3a3a"/>
<path d="M168.4 695.2 L170.32 695.05 L172.25 695.03 L174.17 694.75 L176.1 694.6 L178.02 694.79 L179.94 694.69 L181.87 694.08 L183.79 694.33 L185.72 694.27 L187.64 693.77 L189.56 694.07 L191.49 693.86 L193.41 694.09 L195.34 694.02 L197.26 694.34 L199.18 694.06 L201.11 693.91 L203.03 694.08 L204.96 693.88 L206.88 693.83 L208.8 694.07 L210.73 693.51 L212.65 693.46 L214.58 693.48 L216.5 693.5 L218.42 692.89 L220.35 693.03 L222.27 692.83 L224.2 692.7 L226.12 692.8 L228.04 692.69 L229.97 693.02 L231.89 692.78 L233.82 692.98 L235.74 692.63 L237.66 692.57 L239.59 692.89 L241.51 692.69 L243.44 692.41 L245.36 691.72 L247.28 691.78 L249.21 691.42 L251.13 691.4 L253.06 691.11 L254.98 691.08 L256.9 691.07 L258.83 690.99 L260.75 691.12 L262.68 691.12 L264.6 691.51 L266.52 691.64 L268.45 691.96 L270.37 692.15 L272.3 692.56 L274.22 693.02 L276.14 692.69 L278.07 692.63 L279.99 692.59 L281.92 692.64 L283.84 692.34 L285.76 692.4 L287.69 691.76 L289.61 691.66 L291.54 691.61 L293.46 691.57 L295.38 690.97 L297.31 690.83 L299.23 691.37 L301.16 690.99 L303.08 691.31 L305 691.57 L306.93 691.58 L308.85 691.37 L310.78 691.35 L312.7 691.84 L314.62 691.43 L316.55 691.66 L318.47 691.1 L320.4 691.15 L322.32 690.63 L324.24 690.4 L326.17 690.55 L328.09 690.17 L330.02 690.58 L331.94 690.79 L333.86 690.63 L335.79 691.21 L337.71 691.4 L339.64 691.61 L341.56 691.83 L343.48 692.45 L345.41 692.82 L347.33 692.58 L349.26 693.09 L351.18 692.8 L353.1 692.84 L355.03 693.07 L356.95 692.88 L358.88 692.64 L360.8 692.33 L362.72 692.12 L364.65 691.92 L366.57 691.7 L368.5 691.37 L370.42 691.55 L372.34 691.58 L374.27 691.45 L376.19 691.84 L378.12 691.94 L380.04 691.69 L381.96 692.13 L383.89 692.27 L385.81 692.72 L387.74 692.58 L389.66 692.54 L391.58 692.91 L393.51 692.55 L395.43 692.52 L397.36 692.84 L399.28 692.48 L401.2 692.58 L403.13 692.48 L405.05 692.74 L406.98 692.64 L408.9 692.76 L410.82 693.37 L412.75 693.54 L414.67 693.38 L416.6 693.41 L418.52 694.03 L420.44 694.08 L422.37 694.13 L424.29 694.4 L426.22 694.43 L428.14 694.49 L430.06 694.46 L431.99 694.3 L433.91 694.45 L435.84 694.38 L437.76 694.13 L439.68 694.59 L441.61 694.29 L443.53 694.25 L445.46 694.58 L447.38 694.73 L449.3 694.5 L451.23 694.96 L453.15 695.12 L455.08 695.1 L457 695.08 L457 695.92 L455.08 695.9 L453.15 695.88 L451.23 696.04 L449.3 696.5 L447.38 696.27 L445.46 696.42 L443.53 696.75 L441.61 696.71 L439.68 696.41 L437.76 696.87 L435.84 696.62 L433.91 696.55 L431.99 696.7 L430.06 696.54 L428.14 696.51 L426.22 696.57 L424.29 696.6 L422.37 696.87 L420.44 696.92 L418.52 696.97 L416.6 697.59 L414.67 697.62 L412.75 697.46 L410.82 697.63 L408.9 698.24 L406.98 698.36 L405.05 698.26 L403.13 698.52 L401.2 698.42 L399.28 698.52 L397.36 698.16 L395.43 698.48 L393.51 698.45 L391.58 698.09 L389.66 698.46 L387.74 698.42 L385.81 698.28 L383.89 698.73 L381.96 698.87 L380.04 699.31 L378.12 699.06 L376.19 699.16 L374.27 699.55 L372.34 699.42 L370.42 699.45 L368.5 699.63 L366.57 699.3 L364.65 699.08 L362.72 698.88 L360.8 698.67 L358.88 698.36 L356.95 698.12 L355.03 697.93 L353.1 698.16 L351.18 698.2 L349.26 697.91 L347.33 698.42 L345.41 698.18 L343.48 698.55 L341.56 699.17 L339.64 699.39 L337.71 699.6 L335.79 699.79 L333.86 700.37 L331.94 700.21 L330.02 700.42 L328.09 700.83 L326.17 700.45 L324.24 700.6 L322.32 700.37 L320.4 699.85 L318.47 699.9 L316.55 699.34 L314.62 699.57 L312.7 699.16 L310.78 699.65 L308.85 699.63 L306.93 699.42 L305 699.43 L303.08 699.69 L301.16 700.01 L299.23 699.63 L297.31 700.17 L295.38 700.03 L293.46 699.43 L291.54 699.39 L289.61 699.34 L287.69 699.24 L285.76 698.6 L283.84 698.66 L281.92 698.36 L279.99 698.41 L278.07 698.37 L276.14 698.31 L274.22 697.98 L272.3 698.44 L270.37 698.85 L268.45 699.04 L266.52 699.36 L264.6 699.49 L262.68 699.88 L260.75 699.88 L258.83 700.01 L256.9 699.93 L254.98 699.92 L253.06 699.89 L251.13 699.6 L249.21 699.58 L247.28 699.22 L245.36 699.28 L243.44 698.59 L241.51 698.31 L239.59 698.11 L237.66 698.43 L235.74 698.37 L233.82 698.02 L231.89 698.22 L229.97 697.98 L228.04 698.31 L226.12 698.2 L224.2 698.3 L222.27 698.17 L220.35 697.97 L218.42 698.11 L216.5 697.5 L214.58 697.52 L212.65 697.54 L210.73 697.49 L208.8 696.93 L206.88 697.17 L204.96 697.12 L203.03 696.92 L201.11 697.09 L199.18 696.94 L197.26 696.66 L195.34 696.98 L193.41 696.91 L191.49 697.14 L189.56 696.93 L187.64 697.23 L185.72 696.73 L183.79 696.67 L181.87 696.92 L179.94 696.31 L178.02 696.21 L176.1 696.4 L174.17 696.25 L172.25 695.97 L170.32 695.95 L168.4 695.8Z" fill="#747474"/>
</svg>
<div style="left:461.7px;top:688.9px;width:30.1px;height:13.7px;background:#dcdcdc;border:1px solid #333;box-sizing:border-box;"></div>
<div style="top:687.7px;height:16px;line-height:16px;font-size:10.5px;color:#1c1c1c;letter-spacing:0.09px;white-space:nowrap;-webkit-text-stroke:0.25px #1c1c1c;left:326.8px;width:300px;text-align:center;">Raw</div>
<div style="left:506px;top:50px;width:1048px;height:657px;background:#a5a5a5;border-radius:5px 5px 4px 4px;"></div>
<div style="left:506px;top:50px;width:908.2px;height:18.3px;background:#a9a9a9;border-radius:5px 0 0 0;"></div>
<div style="left:506px;top:68.3px;width:88.32px;height:367.7px;background:#9d9d9d;"></div>
<div style="left:594.32px;top:68.3px;width:119.24px;height:367.7px;background:#a8a8a8;"></div>
<div style="left:713.56px;top:68.3px;width:119.24px;height:367.7px;background:#9d9d9d;"></div>
<div style="left:832.8px;top:68.3px;width:119.24px;height:367.7px;background:#a8a8a8;"></div>
<div style="left:952.04px;top:68.3px;width:119.24px;height:367.7px;background:#9d9d9d;"></div>
<div style="left:1071.28px;top:68.3px;width:119.24px;height:367.7px;background:#a8a8a8;"></div>
<div style="left:1190.52px;top:68.3px;width:119.24px;height:367.7px;background:#9d9d9d;"></div>
<div style="left:1309.76px;top:68.3px;width:104.44px;height:367.7px;background:#a8a8a8;"></div>
<div style="left:506px;top:226px;width:88.32px;height:93.2px;background:#b4b4b4;"></div>
<div style="left:594.32px;top:226px;width:119.24px;height:93.2px;background:#bebebe;"></div>
<div style="left:713.56px;top:226px;width:119.24px;height:93.2px;background:#b4b4b4;"></div>
<div style="left:832.8px;top:226px;width:119.24px;height:93.2px;background:#bebebe;"></div>
<div style="left:952.04px;top:226px;width:119.24px;height:93.2px;background:#b4b4b4;"></div>
<div style="left:1071.28px;top:226px;width:119.24px;height:93.2px;background:#bebebe;"></div>
<div style="left:1190.52px;top:226px;width:119.24px;height:93.2px;background:#b4b4b4;"></div>
<div style="left:1309.76px;top:226px;width:104.44px;height:93.2px;background:#bebebe;"></div>
<svg width="1564" height="960" viewBox="0 0 1564 960">
<path d="M519.8 68.3V436M534.7 68.3V436M549.61 68.3V436M564.51 68.3V436M579.42 68.3V436M594.32 68.3V436M609.23 68.3V436M624.13 68.3V436M639.04 68.3V436M653.94 68.3V436M668.85 68.3V436M683.75 68.3V436M698.65 68.3V436M713.56 68.3V436M728.47 68.3V436M743.37 68.3V436M758.28 68.3V436M773.18 68.3V436M788.09 68.3V436M802.99 68.3V436M817.89 68.3V436M832.8 68.3V436M847.71 68.3V436M862.61 68.3V436M877.52 68.3V436M892.42 68.3V436M907.33 68.3V436M922.23 68.3V436M937.13 68.3V436M952.04 68.3V436M966.95 68.3V436M981.85 68.3V436M996.76 68.3V436M1011.66 68.3V436M1026.57 68.3V436M1041.47 68.3V436M1056.38 68.3V436M1071.28 68.3V436M1086.18 68.3V436M1101.09 68.3V436M1115.99 68.3V436M1130.9 68.3V436M1145.81 68.3V436M1160.71 68.3V436M1175.62 68.3V436M1190.52 68.3V436M1205.43 68.3V436M1220.33 68.3V436M1235.24 68.3V436M1250.14 68.3V436M1265.05 68.3V436M1279.95 68.3V436M1294.86 68.3V436M1309.76 68.3V436M1324.66 68.3V436M1339.57 68.3V436M1354.47 68.3V436M1369.38 68.3V436M1384.28 68.3V436M1399.19 68.3V436M1414.1 68.3V436" stroke="rgba(0,0,0,0.105)" stroke-width="1" fill="none" shape-rendering="crispEdges"/>
</svg>
<div style="top:53.6px;height:16px;line-height:16px;font-size:10.5px;color:#3c3c3c;letter-spacing:0.3px;white-space:nowrap;-webkit-text-stroke:0.15px #3c3c3c;left:540.2px;">43</div>
<div style="top:53.6px;height:16px;line-height:16px;font-size:10.5px;color:#3c3c3c;letter-spacing:0.3px;white-space:nowrap;-webkit-text-stroke:0.15px #3c3c3c;left:599.82px;">45</div>
<div style="top:53.6px;height:16px;line-height:16px;font-size:10.5px;color:#3c3c3c;letter-spacing:0.3px;white-space:nowrap;-webkit-text-stroke:0.15px #3c3c3c;left:659.44px;">47</div>
<div style="top:53.6px;height:16px;line-height:16px;font-size:10.5px;color:#3c3c3c;letter-spacing:0.3px;white-space:nowrap;-webkit-text-stroke:0.15px #3c3c3c;left:719.06px;">49</div>
<div style="top:53.6px;height:16px;line-height:16px;font-size:10.5px;color:#3c3c3c;letter-spacing:0.3px;white-space:nowrap;-webkit-text-stroke:0.15px #3c3c3c;left:778.68px;">51</div>
<div style="top:53.6px;height:16px;line-height:16px;font-size:10.5px;color:#3c3c3c;letter-spacing:0.3px;white-space:nowrap;-webkit-text-stroke:0.15px #3c3c3c;left:838.3px;">53</div>
<div style="top:53.6px;height:16px;line-height:16px;font-size:10.5px;color:#3c3c3c;letter-spacing:0.3px;white-space:nowrap;-webkit-text-stroke:0.15px #3c3c3c;left:897.92px;">55</div>
<div style="top:53.6px;height:16px;line-height:16px;font-size:10.5px;color:#3c3c3c;letter-spacing:0.3px;white-space:nowrap;-webkit-text-stroke:0.15px #3c3c3c;left:957.54px;">57</div>
<div style="top:53.6px;height:16px;line-height:16px;font-size:10.5px;color:#3c3c3c;letter-spacing:0.3px;white-space:nowrap;-webkit-text-stroke:0.15px #3c3c3c;left:1017.16px;">59</div>
<div style="top:53.6px;height:16px;line-height:16px;font-size:10.5px;color:#3c3c3c;letter-spacing:0.3px;white-space:nowrap;-webkit-text-stroke:0.15px #3c3c3c;left:1076.78px;">61</div>
<div style="top:53.6px;height:16px;line-height:16px;font-size:10.5px;color:#3c3c3c;letter-spacing:0.3px;white-space:nowrap;-webkit-text-stroke:0.15px #3c3c3c;left:1136.4px;">63</div>
<div style="top:53.6px;height:16px;line-height:16px;font-size:10.5px;color:#3c3c3c;letter-spacing:0.3px;white-space:nowrap;-webkit-text-stroke:0.15px #3c3c3c;left:1196.02px;">65</div>
<div style="top:53.6px;height:16px;line-height:16px;font-size:10.5px;color:#3c3c3c;letter-spacing:0.3px;white-space:nowrap;-webkit-text-stroke:0.15px #3c3c3c;left:1255.64px;">67</div>
<div style="top:53.6px;height:16px;line-height:16px;font-size:10.5px;color:#3c3c3c;letter-spacing:0.3px;white-space:nowrap;-webkit-text-stroke:0.15px #3c3c3c;left:1315.26px;">69</div>
<div style="top:53.6px;height:16px;line-height:16px;font-size:10.5px;color:#3c3c3c;letter-spacing:0.3px;white-space:nowrap;-webkit-text-stroke:0.15px #3c3c3c;left:1374.88px;">71</div>
<svg width="1564" height="960" viewBox="0 0 1564 960">
<path d="M534.7 62V68.3M594.32 62V68.3M653.94 62V68.3M713.56 62V68.3M773.18 62V68.3M832.8 62V68.3M892.42 62V68.3M952.04 62V68.3M1011.66 62V68.3M1071.28 62V68.3M1130.9 62V68.3M1190.52 62V68.3M1250.14 62V68.3M1309.76 62V68.3M1369.38 62V68.3M564.51 66V68.3M624.13 66V68.3M683.75 66V68.3M743.37 66V68.3M802.99 66V68.3M862.61 66V68.3M922.23 66V68.3M981.85 66V68.3M1041.47 66V68.3M1101.09 66V68.3M1160.71 66V68.3M1220.33 66V68.3M1279.95 66V68.3M1339.57 66V68.3M1399.19 66V68.3" stroke="#5a5a5a" stroke-width="1" fill="none"/>
<path d="M534.7 62h3M594.32 62h3M653.94 62h3M713.56 62h3M773.18 62h3M832.8 62h3M892.42 62h3M952.04 62h3M1011.66 62h3M1071.28 62h3M1130.9 62h3M1190.52 62h3M1250.14 62h3M1309.76 62h3M1369.38 62h3" stroke="#5a5a5a" stroke-width="1" fill="none"/>
</svg>
<div style="left:713.56px;top:95.5px;width:476.96px;height:26.5px;background:#5ffee5;box-shadow:inset 0 0 0 0.6px rgba(0,0,0,0.22);"></div>
<svg width="1564" height="960" viewBox="0 0 1564 960">
<path d="M728.47 96V121.500M743.37 96V121.500M758.28 96V121.500M773.18 96V121.500M788.09 96V121.500M802.99 96V121.500M817.89 96V121.500M832.8 96V121.500M847.71 96V121.500M862.61 96V121.500M877.52 96V121.500M892.42 96V121.500M907.33 96V121.500M922.23 96V121.500M937.13 96V121.500M952.04 96V121.500M966.95 96V121.500M981.85 96V121.500M996.76 96V121.500M1011.66 96V121.500M1026.57 96V121.500M1041.47 96V121.500M1056.38 96V121.500M1071.28 96V121.500M1086.18 96V121.500M1101.09 96V121.500M1115.99 96V121.500M1130.9 96V121.500M1145.81 96V121.500M1160.71 96V121.500M1175.62 96V121.500" stroke="rgba(0,60,50,0.130)" stroke-width="1" fill="none" shape-rendering="crispEdges"/>
<rect x="765.73" y="103.800" width="7.200" height="3" fill="#1e2a28"/><rect x="795.54" y="103.800" width="7.200" height="3" fill="#1e2a28"/><rect x="825.35" y="103.800" width="7.200" height="3" fill="#1e2a28"/><rect x="855.16" y="103.800" width="7.200" height="3" fill="#1e2a28"/><rect x="884.97" y="103.800" width="7.200" height="3" fill="#1e2a28"/><rect x="914.78" y="103.800" width="7.200" height="3" fill="#1e2a28"/><rect x="944.59" y="103.800" width="7.200" height="3" fill="#1e2a28"/><rect x="974.4" y="103.800" width="7.200" height="3" fill="#1e2a28"/><rect x="1004.21" y="103.800" width="7.200" height="3" fill="#1e2a28"/><rect x="1034.02" y="103.800" width="7.200" height="3" fill="#1e2a28"/><rect x="1063.83" y="103.800" width="7.200" height="3" fill="#1e2a28"/><rect x="1093.64" y="103.800" width="7.200" height="3" fill="#1e2a28"/><rect x="1123.45" y="103.800" width="7.200" height="3" fill="#1e2a28"/><rect x="1153.26" y="103.800" width="7.200" height="3" fill="#1e2a28"/><rect x="1183.07" y="103.800" width="7.200" height="3" fill="#1e2a28"/><rect x="743.37" y="117.200" width="6.8" height="3" fill="#1e2a28"/><rect x="784.66" y="117.200" width="6" height="3" fill="#1e2a28"/><rect x="802.99" y="117.200" width="6.8" height="3" fill="#1e2a28"/><rect x="844.28" y="117.200" width="6" height="3" fill="#1e2a28"/><rect x="862.61" y="117.200" width="6.8" height="3" fill="#1e2a28"/><rect x="903.9" y="117.200" width="6" height="3" fill="#1e2a28"/><rect x="922.23" y="117.200" width="6.8" height="3" fill="#1e2a28"/><rect x="963.52" y="117.200" width="6" height="3" fill="#1e2a28"/><rect x="981.85" y="117.200" width="6.8" height="3" fill="#1e2a28"/><rect x="1023.14" y="117.200" width="6" height="3" fill="#1e2a28"/><rect x="1041.47" y="117.200" width="6.8" height="3" fill="#1e2a28"/><rect x="1082.76" y="117.200" width="6" height="3" fill="#1e2a28"/><rect x="1101.09" y="117.200" width="6.8" height="3" fill="#1e2a28"/><rect x="1142.38" y="117.200" width="6" height="3" fill="#1e2a28"/><rect x="1160.71" y="117.200" width="6.8" height="3" fill="#1e2a28"/>
</svg>
<div style="left:922.23px;top:124.2px;width:29.81px;height:17.6px;background:#5ffee5;box-shadow:inset 0 0 0 0.6px rgba(0,0,0,0.22);"></div>
<div style="left:1160.71px;top:124.2px;width:29.81px;height:17.6px;background:#5ffee5;box-shadow:inset 0 0 0 0.6px rgba(0,0,0,0.22);"></div>
<div style="left:952.04px;top:145px;width:238.48px;height:17.2px;background:#edffad;box-shadow:inset 0 0 0 0.6px rgba(0,0,0,0.22);"></div>
<div style="left:952.04px;top:165.5px;width:119.24px;height:17.5px;background:#f9f27b;box-shadow:inset 0 0 0 0.6px rgba(0,0,0,0.22);"></div>
<div style="left:832.8px;top:187.7px;width:238.48px;height:3.8px;background:rgba(0,0,0,0.085);"></div>
<div style="left:713.56px;top:193px;width:238.48px;height:4.3px;background:rgba(0,0,0,0.085);"></div>
<div style="left:952.04px;top:198.8px;width:238.48px;height:3.8px;background:rgba(0,0,0,0.085);"></div>
<div style="left:832.8px;top:226.3px;width:238.48px;height:92.9px;background:#ffa374;box-shadow:inset 0 0 0 0.6px rgba(0,0,0,0.22);"></div>
<svg width="1564" height="960" viewBox="0 0 1564 960">
<path d="M847.71 243.800V319M862.61 243.800V319M877.52 243.800V319M892.42 243.800V319M907.33 243.800V319M922.23 243.800V319M937.13 243.800V319M952.04 243.800V319M966.95 243.800V319M981.85 243.800V319M996.76 243.800V319M1011.66 243.800V319M1026.57 243.800V319M1041.47 243.800V319M1056.38 243.800V319" stroke="#e08c60" stroke-width="1" fill="none" shape-rendering="crispEdges"/><path d="M832.8 243.300H1071.28" stroke="#c07a55" stroke-width="1"/>
<rect x="863" y="269.300" width="42" height="3" fill="#2a2320"/><rect x="922.800" y="285.700" width="18" height="3" fill="#2a2320"/><rect x="967.500" y="253" width="42.500" height="3" fill="#2a2320"/><rect x="833" y="308.500" width="207.500" height="3" fill="#2a2320"/>
</svg>
<div style="left:713.56px;top:322.2px;width:238.48px;height:17.1px;background:#ffa374;box-shadow:inset 0 0 0 0.6px rgba(0,0,0,0.22);"></div>
<div style="left:952.04px;top:343px;width:238.48px;height:16.8px;background:#ffa374;box-shadow:inset 0 0 0 0.6px rgba(0,0,0,0.22);"></div>
<div style="left:506px;top:363.8px;width:207.56px;height:50.2px;background:#ff94a6;box-shadow:inset 0 0 0 0.6px rgba(0,0,0,0.22);"></div>
<div style="left:952.04px;top:363.8px;width:238.48px;height:50.2px;background:#ff94a6;box-shadow:inset 0 0 0 0.6px rgba(0,0,0,0.22);"></div>
<div style="left:1190.52px;top:363.8px;width:118.78px;height:50.2px;background:#ff94a6;box-shadow:inset 0 0 0 0.6px rgba(0,0,0,0.22);"></div>
<svg width="1564" height="960" viewBox="0 0 1564 960">
<path d="M684.700 380.500C694 381 696 400 701.600 414H713.300V380.500Z" fill="#d88292"/><path d="M1164.900 380.500C1172 381 1175 402 1178.500 414H1190.500V380.500Z" fill="#d88292"/><path d="M1191 380.500C1222 381 1240 400 1255.300 414H1309.300V380.500Z" fill="#d88292"/><path d="M952.100 414C953 395 954 384 957 380.500H952.100Z" fill="#d88292"/>
<path d="M519.8 380.800V414M534.7 380.800V414M549.61 380.800V414M564.51 380.800V414M579.42 380.800V414M594.32 380.800V414M609.23 380.800V414M624.13 380.800V414M639.04 380.800V414M653.94 380.800V414M668.85 380.800V414M683.75 380.800V414M698.65 380.800V414M966.95 380.800V414M981.85 380.800V414M996.76 380.800V414M1011.66 380.800V414M1026.57 380.800V414M1041.47 380.800V414M1056.38 380.800V414M1071.28 380.800V414M1086.18 380.800V414M1101.09 380.800V414M1115.99 380.800V414M1130.9 380.800V414M1145.81 380.800V414M1160.71 380.800V414M1175.62 380.800V414M1190.52 380.800V414M1205.43 380.800V414M1220.33 380.800V414M1235.24 380.800V414M1250.14 380.800V414M1265.05 380.800V414M1279.95 380.800V414M1294.86 380.800V414" stroke="#e0808f" stroke-width="1" fill="none" shape-rendering="crispEdges" opacity="0.7"/>
<path d="M506 380.300H713.300M952.100 380.300H1309.300" stroke="#b56a78" stroke-width="1"/>
<path d="M506 395.49 L507.5 395.39 L509 395.69 L510.5 395.34 L512 395.62 L513.5 395.52 L515 395.33 L516.5 395.6 L518 395.32 L519.5 395.56 L521 395.34 L522.5 395.35 L524 395.55 L525.5 395.8 L527 395.37 L528.5 395.43 L530 395.68 L531.5 395.87 L533 395.65 L534.5 395.54 L536 395.89 L537.5 395.33 L539 395.82 L540.5 395.47 L542 395.39 L543.5 395.37 L545 395.49 L546.5 395.79 L548 395.41 L549.5 395.65 L551 395.68 L552.5 395.52 L554 395.63 L555.5 395.34 L557 395.34 L558.5 395.42 L560 395.71 L561.5 395.56 L563 395.49 L564.5 395.65 L566 395.57 L567.5 395.48 L569 395.78 L570.5 395.72 L572 395.45 L573.5 395.64 L575 395.62 L576.5 395.83 L578 395.74 L579.5 395.47 L581 395.89 L582.5 395.37 L584 395.55 L585.5 395.75 L587 395.39 L588.5 395.59 L590 395.32 L591.5 395.7 L593 395.76 L594.5 395.64 L596 395.83 L597.5 395.49 L599 395.72 L600.5 395.66 L602 395.65 L603.5 395.57 L605 395.8 L606.5 395.87 L608 395.58 L609.5 395.7 L611 395.34 L612.5 395.72 L614 395.69 L615.5 395.9 L617 395.79 L618.5 395.47 L620 395.53 L621.5 395.7 L623 395.31 L624.5 395.58 L626 395.4 L627.5 395.37 L629 395.34 L630.5 395.76 L632 395.38 L633.5 395.45 L635 395.53 L636.5 395.82 L638 395.35 L639.5 395.57 L641 395.63 L642.5 395.83 L644 395.79 L645.5 395.82 L647 395.47 L648.5 395.55 L650 395.52 L651.5 395.83 L653 395.87 L654.5 395.39 L656 395.41 L657.5 395.44 L659 395.44 L660.5 395.59 L662 395.65 L663.5 395.46 L665 395.3 L666.5 395.55 L668 395.52 L669.5 395.64 L671 395.87 L672.5 395.71 L674 395.61 L675.5 395.67 L677 395.71 L678.5 395.33 L680 395.84 L681.5 395.77 L683 395.82 L684.5 395.78 L686 395.54 L687.5 395.54 L689 395.36 L690.5 395.68 L692 395.34 L693.5 395.34 L695 395.43 L696.5 395.4 L698 395.5 L699.5 395.33 L701 395.3 L702.5 395.39 L704 395.36 L705.5 395.52 L707 395.32 L708.5 395.82 L710 395.67 L711.5 395.39" stroke="#2a1c20" stroke-width="1.100" fill="none"/><path d="M952.1 395.45 L953.6 395.51 L955.1 395.52 L956.6 395.37 L958.1 395.81 L959.6 395.9 L961.1 395.58 L962.6 395.59 L964.1 395.35 L965.6 395.36 L967.1 395.51 L968.6 395.46 L970.1 395.8 L971.6 395.4 L973.1 395.31 L974.6 395.87 L976.1 395.62 L977.6 395.39 L979.1 395.63 L980.6 395.32 L982.1 395.62 L983.6 395.89 L985.1 395.82 L986.6 395.72 L988.1 395.46 L989.6 395.52 L991.1 395.4 L992.6 395.76 L994.1 395.62 L995.6 395.77 L997.1 395.5 L998.6 395.43 L1000.1 395.79 L1001.6 395.89 L1003.1 395.81 L1004.6 395.78 L1006.1 395.79 L1007.6 395.74 L1009.1 395.44 L1010.6 395.61 L1012.1 395.51 L1013.6 395.32 L1015.1 395.32 L1016.6 395.47 L1018.1 395.46 L1019.6 395.72 L1021.1 395.87 L1022.6 395.57 L1024.1 395.86 L1025.6 395.89 L1027.1 395.87 L1028.6 395.52 L1030.1 395.43 L1031.6 395.44 L1033.1 395.42 L1034.6 395.42 L1036.1 395.67 L1037.6 395.84 L1039.1 395.8 L1040.6 395.59 L1042.1 395.69 L1043.6 395.78 L1045.1 395.35 L1046.6 395.7 L1048.1 395.85 L1049.6 395.77 L1051.1 395.75 L1052.6 395.59 L1054.1 395.41 L1055.6 395.77 L1057.1 395.5 L1058.6 395.78 L1060.1 395.88 L1061.6 395.54 L1063.1 395.54 L1064.6 395.87 L1066.1 395.73 L1067.6 395.4 L1069.1 395.38 L1070.6 395.39 L1072.1 395.84 L1073.6 395.78 L1075.1 395.39 L1076.6 395.8 L1078.1 395.89 L1079.6 395.69 L1081.1 395.51 L1082.6 395.63 L1084.1 395.38 L1085.6 395.31 L1087.1 395.88 L1088.6 395.69 L1090.1 395.62 L1091.6 395.86 L1093.1 395.56 L1094.6 395.82 L1096.1 395.8 L1097.6 395.43 L1099.1 395.45 L1100.6 395.48 L1102.1 395.44 L1103.6 395.65 L1105.1 395.46 L1106.6 395.55 L1108.1 395.38 L1109.6 395.85 L1111.1 395.51 L1112.6 395.57 L1114.1 395.65 L1115.6 395.84 L1117.1 395.55 L1118.6 395.85 L1120.1 395.6 L1121.6 395.62 L1123.1 395.61 L1124.6 395.31 L1126.1 395.56 L1127.6 395.41 L1129.1 395.3 L1130.6 395.78 L1132.1 395.4 L1133.6 395.58 L1135.1 395.74 L1136.6 395.63 L1138.1 395.5 L1139.6 395.61 L1141.1 395.63 L1142.6 395.77 L1144.1 395.36 L1145.6 395.64 L1147.1 395.45 L1148.6 395.47 L1150.1 395.76 L1151.6 395.6 L1153.1 395.64 L1154.6 395.76 L1156.1 395.85 L1157.6 395.57 L1159.1 395.67 L1160.6 395.6 L1162.1 395.61 L1163.6 395.72 L1165.1 395.57 L1166.6 395.62 L1168.1 395.59 L1169.6 395.86 L1171.1 395.72 L1172.6 395.83 L1174.1 395.87 L1175.6 395.46 L1177.1 395.64 L1178.6 395.87 L1180.1 395.8 L1181.6 395.38 L1183.1 395.37 L1184.6 395.57 L1186.1 395.34 L1187.6 395.44 L1189.1 395.34 L1190.6 395.7 L1192.1 395.77 L1193.6 395.84 L1195.1 395.39 L1196.6 395.73 L1198.1 395.7 L1199.6 395.39 L1201.1 395.83 L1202.6 395.88 L1204.1 395.43 L1205.6 395.87 L1207.1 395.54 L1208.6 395.59 L1210.1 395.89 L1211.6 395.8 L1213.1 395.4 L1214.6 395.56 L1216.1 395.61 L1217.6 395.5 L1219.1 395.42 L1220.6 395.49 L1222.1 395.73 L1223.6 395.31 L1225.1 395.63 L1226.6 395.56 L1228.1 395.31 L1229.6 395.5 L1231.1 395.67 L1232.6 395.61 L1234.1 395.34 L1235.6 395.89 L1237.1 395.77 L1238.6 395.88 L1240.1 395.36 L1241.6 395.46 L1243.1 395.32 L1244.6 395.77 L1246.1 395.46 L1247.6 395.38 L1249.1 395.55 L1250.6 395.85 L1252.1 395.79 L1253.6 395.46 L1255.1 395.39 L1256.6 395.85 L1258.1 395.64 L1259.6 395.72 L1261.1 395.35 L1262.6 395.33 L1264.1 395.71 L1265.6 395.56 L1267.1 395.34 L1268.6 395.86 L1270.1 395.68 L1271.6 395.78 L1273.1 395.35 L1274.6 395.81 L1276.1 395.34 L1277.6 395.82 L1279.1 395.57 L1280.6 395.5 L1282.1 395.63 L1283.6 395.86 L1285.1 395.46 L1286.6 395.38 L1288.1 395.62 L1289.6 395.44 L1291.1 395.37 L1292.6 395.4 L1294.1 395.33 L1295.6 395.42 L1297.1 395.49 L1298.6 395.48 L1300.1 395.76 L1301.6 395.47 L1303.1 395.6 L1304.6 395.41 L1306.1 395.51 L1307.6 395.31" stroke="#2a1c20" stroke-width="1.100" fill="none"/>
</svg>
<div style="top:361.5px;height:16px;line-height:16px;font-size:10.5px;color:#3a1c22;letter-spacing:0.5px;white-space:nowrap;-webkit-text-stroke:0.25px #3a1c22;left:510.5px;">...</div>
<div style="left:1190.5px;top:364px;width:0.5px;height:50px;background:#b56a78;"></div>
<div style="left:506px;top:93.3px;width:1048px;height:2.2px;background:#848484;"></div>
<div style="left:506px;top:121.8px;width:1048px;height:1.9px;background:#848484;"></div>
<div style="left:506px;top:142.3px;width:1048px;height:2px;background:#848484;"></div>
<div style="left:506px;top:162.7px;width:1048px;height:2.1px;background:#848484;"></div>
<div style="left:506px;top:183.3px;width:1048px;height:2px;background:#848484;"></div>
<div style="left:506px;top:223.5px;width:1048px;height:2.3px;background:#848484;"></div>
<div style="left:506px;top:319.3px;width:1048px;height:2.1px;background:#848484;"></div>
<div style="left:506px;top:339.5px;width:1048px;height:2.3px;background:#848484;"></div>
<div style="left:506px;top:360.3px;width:1048px;height:2.4px;background:#848484;"></div>
<div style="left:506px;top:413.9px;width:1048px;height:2.8px;background:#7e7e7e;"></div>
<div style="left:506px;top:435.3px;width:1048px;height:1.2px;background:#777;"></div>
<div style="left:506px;top:436.5px;width:1048px;height:24.3px;background:#a9a9a9;"></div>
<svg width="1564" height="960" viewBox="0 0 1564 960">
<rect x="832.900" y="68.700" width="238.300" height="11" fill="#d2d2d2" stroke="#3c3c3c" stroke-width="1"/><path d="M834 70l8.500 4.200l-8.500 4.200" fill="#f2f2f2" stroke="#3c3c3c" stroke-width="1"/><path d="M1070.700 70l-8.500 4.200l8.500 4.200" fill="#f2f2f2" stroke="#3c3c3c" stroke-width="1"/>
<polygon points="829,89.200 837,89.200 833,93.200" fill="#00d8f0"/><polygon points="829.300,442 837.100,442 832.900,437.600" fill="#00d8f0"/>
</svg>
<div style="left:832.2px;top:68.7px;width:1.1px;height:367.3px;background:#2a2a2a;"></div>
<div style="left:1071px;top:68.7px;width:1.1px;height:367.3px;background:#3a3a3a;"></div>
<div style="left:966.6px;top:95.5px;width:1.4px;height:340.5px;background:#161616;"></div>
<svg width="1564" height="960" viewBox="0 0 1564 960">
<rect x="966" y="117.200" width="2.500" height="2.500" fill="#ddd"/><rect x="966" y="309" width="2.500" height="2.500" fill="#ddd"/><rect x="966" y="394.500" width="2.500" height="2.500" fill="#ddd"/>
</svg>
<div style="top:438.5px;height:16px;line-height:16px;font-size:10.5px;color:#3c3c3c;letter-spacing:0.3px;white-space:nowrap;-webkit-text-stroke:0.15px #3c3c3c;left:590.2px;">1:00</div>
<div style="top:438.5px;height:16px;line-height:16px;font-size:10.5px;color:#3c3c3c;letter-spacing:0.3px;white-space:nowrap;-webkit-text-stroke:0.15px #3c3c3c;left:698.9px;">1:05</div>
<div style="top:438.5px;height:16px;line-height:16px;font-size:10.5px;color:#3c3c3c;letter-spacing:0.3px;white-space:nowrap;-webkit-text-stroke:0.15px #3c3c3c;left:807.6px;">1:10</div>
<div style="top:438.5px;height:16px;line-height:16px;font-size:10.5px;color:#3c3c3c;letter-spacing:0.3px;white-space:nowrap;-webkit-text-stroke:0.15px #3c3c3c;left:916.3px;">1:15</div>
<div style="top:438.5px;height:16px;line-height:16px;font-size:10.5px;color:#3c3c3c;letter-spacing:0.3px;white-space:nowrap;-webkit-text-stroke:0.15px #3c3c3c;left:1025px;">1:20</div>
<div style="top:438.5px;height:16px;line-height:16px;font-size:10.5px;color:#3c3c3c;letter-spacing:0.3px;white-space:nowrap;-webkit-text-stroke:0.15px #3c3c3c;left:1133.7px;">1:25</div>
<div style="top:438.5px;height:16px;line-height:16px;font-size:10.5px;color:#3c3c3c;letter-spacing:0.3px;white-space:nowrap;-webkit-text-stroke:0.15px #3c3c3c;left:1242.4px;">1:30</div>
<div style="top:438.5px;height:16px;line-height:16px;font-size:10.5px;color:#3c3c3c;letter-spacing:0.3px;white-space:nowrap;-webkit-text-stroke:0.15px #3c3c3c;left:1351.1px;">1:35</div>
<svg width="1564" height="960" viewBox="0 0 1564 960">
<path d="M521.48 436.500V439.5M543.22 436.500V439.5M564.96 436.500V439.5M586.7 436.500V445.500h2.500M608.44 436.500V439.5M630.18 436.500V439.5M651.92 436.500V439.5M673.66 436.500V439.5M695.4 436.500V445.500h2.500M717.14 436.500V439.5M738.88 436.500V439.5M760.62 436.500V439.5M782.36 436.500V439.5M804.1 436.500V445.500h2.500M825.84 436.500V439.5M847.58 436.500V439.5M869.32 436.500V439.5M891.06 436.500V439.5M912.8 436.500V445.500h2.500M934.54 436.500V439.5M956.28 436.500V439.5M978.02 436.500V439.5M999.76 436.500V439.5M1021.5 436.500V445.500h2.500M1043.24 436.500V439.5M1064.98 436.500V439.5M1086.72 436.500V439.5M1108.46 436.500V439.5M1130.2 436.500V445.500h2.500M1151.94 436.500V439.5M1173.68 436.500V439.5M1195.42 436.500V439.5M1217.16 436.500V439.5M1238.9 436.500V445.500h2.500M1260.64 436.500V439.5M1282.38 436.500V439.5M1304.12 436.500V439.5M1325.86 436.500V439.5M1347.6 436.500V445.500h2.500M1369.34 436.500V439.5M1391.08 436.500V439.5M1412.82 436.500V439.5" stroke="#5a5a5a" stroke-width="1" fill="none"/>
</svg>
<div style="top:419.6px;height:16px;line-height:16px;font-size:17.5px;color:#8c8c8c;letter-spacing:0.6px;white-space:nowrap;font-weight:bold;left:1112.9px;width:300px;text-align:right;">1/2</div>
<div style="left:1413.7px;top:93.3px;width:1.2px;height:342.7px;background:#808080;"></div>
<div style="left:1420px;top:55.6px;width:30.5px;height:13.4px;background:#d8d8d8;border:1px solid #333;box-sizing:border-box;border-radius:7px;"></div>
<div style="top:54.4px;height:16px;line-height:16px;font-size:10.5px;color:#1c1c1c;letter-spacing:0.58px;white-space:nowrap;-webkit-text-stroke:0.25px #1c1c1c;left:1285.54px;width:300px;text-align:center;">Set</div>
<div style="left:1463.3px;top:55.6px;width:24.4px;height:13.4px;background:#d8d8d8;border:1px solid #444;box-sizing:border-box;"></div>
<svg width="1564" height="960" viewBox="0 0 1564 960">
<circle cx="1473" cy="64.500" r="1.700" fill="#1c1c1c"/><circle cx="1478.200" cy="60.200" r="1.700" fill="#1c1c1c"/><path d="M1473 64.500l5.200-4.300" stroke="#1c1c1c" stroke-width="1.200"/>
</svg>
<div style="left:1492.5px;top:55.6px;width:24.5px;height:13.4px;background:#d8d8d8;border:1px solid #444;box-sizing:border-box;"></div>
<svg width="1564" height="960" viewBox="0 0 1564 960">
<rect x="1500.800" y="62" width="8" height="5" fill="#1c1c1c"/><path d="M1502.300 62v-1.300a2.500 2.500 0 0 1 5 0v1.300" fill="none" stroke="#1c1c1c" stroke-width="1.200"/>
<circle cx="1426.6" cy="81.800" r="6.300" fill="#d4d4d4" stroke="#333" stroke-width="1"/><path d="M1423.1 81.800h7" stroke="#1c1c1c" stroke-width="1.300"/><polygon points="1422.3999999999999,81.800 1425.8999999999999,79 1425.8999999999999,84.600" fill="#1c1c1c"/>
<circle cx="1444" cy="81.800" r="6.300" fill="#d4d4d4" stroke="#333" stroke-width="1"/><path d="M1440.5 81.800h7" stroke="#1c1c1c" stroke-width="1.300"/><polygon points="1448.2,81.800 1444.7,79 1444.7,84.600" fill="#1c1c1c"/>
</svg>
<div style="left:1417px;top:95.5px;width:112.3px;height:26.5px;background:#5ffee5;"></div>
<div style="left:1417px;top:124px;width:112.3px;height:18.2px;background:#5ffee5;"></div>
<svg width="1564" height="960" viewBox="0 0 1564 960">
<circle cx="1428" cy="133.3" r="6.400" fill="none" stroke="#0f4a42" stroke-width="1.100"/>
<polygon points="1425.8,129.8 1425.8,136.8 1431.6,133.3" fill="#0f4a42"/>
</svg>
<div style="top:125.4px;height:16px;line-height:16px;font-size:10.5px;color:#0f4a42;letter-spacing:-0px;white-space:nowrap;font-weight:bold;left:1442.6px;">Bass Drop</div>
<div style="left:1417px;top:144.5px;width:112.3px;height:18px;background:#edffad;"></div>
<svg width="1564" height="960" viewBox="0 0 1564 960">
<circle cx="1428" cy="153.8" r="6.400" fill="none" stroke="#3f4a24" stroke-width="1.100"/>
<polygon points="1425.8,150.3 1425.8,157.3 1431.6,153.8" fill="#3f4a24"/>
</svg>
<div style="top:145.9px;height:16px;line-height:16px;font-size:10.5px;color:#3f4a24;letter-spacing:0.19px;white-space:nowrap;font-weight:bold;left:1442.6px;">Synth Riser</div>
<div style="left:1417px;top:165px;width:112.3px;height:18.2px;background:#f9f27b;"></div>
<svg width="1564" height="960" viewBox="0 0 1564 960">
<circle cx="1428" cy="174.3" r="6.400" fill="none" stroke="#4a4620" stroke-width="1.100"/>
<polygon points="1425.8,170.8 1425.8,177.8 1431.6,174.3" fill="#4a4620"/>
</svg>
<div style="top:166.4px;height:16px;line-height:16px;font-size:10.5px;color:#4a4620;letter-spacing:-0.03px;white-space:nowrap;font-weight:bold;left:1442.6px;">Keys</div>
<div style="left:1417px;top:185.5px;width:112.3px;height:177.1px;background:#ffa374;"></div>
<div style="left:1417px;top:185.5px;width:112.3px;height:37.9px;background:#ffa374;"></div>
<svg width="1564" height="960" viewBox="0 0 1564 960">
<circle cx="1428" cy="194.8" r="6.400" fill="none" stroke="#4a2a1c" stroke-width="1.100"/>
<path d="M1424.5 192.3h7M1426.5 194.8h5M1426.5 197.3h5" stroke="#4a2a1c" stroke-width="1.100"/>
</svg>
<div style="top:186.9px;height:16px;line-height:16px;font-size:10.5px;color:#4a2a1c;letter-spacing:-0.03px;white-space:nowrap;font-weight:bold;left:1442.6px;">Pads</div>
<div style="left:1422px;top:225.8px;width:1.1px;height:136.8px;background:#7e7e7e;"></div>
<div style="left:1422.2px;top:225.8px;width:107.1px;height:93.4px;background:#ffa374;"></div>
<svg width="1564" height="960" viewBox="0 0 1564 960">
<circle cx="1433.2" cy="235.1" r="6.400" fill="none" stroke="#4a2a1c" stroke-width="1.100"/>
<polygon points="1429.6,233.1 1436.8,233.1 1433.2,238.7" fill="#4a2a1c"/>
</svg>
<div style="top:227.2px;height:16px;line-height:16px;font-size:10.5px;color:#4a2a1c;letter-spacing:0.47px;white-space:nowrap;font-weight:bold;left:1447.4px;">Drift Pad</div>
<div style="left:1422.2px;top:321.3px;width:107.1px;height:18.5px;background:#ffa374;"></div>
<svg width="1564" height="960" viewBox="0 0 1564 960">
<circle cx="1433.2" cy="330.6" r="6.400" fill="none" stroke="#4a2a1c" stroke-width="1.100"/>
<polygon points="1431,327.1 1431,334.1 1436.8,330.6" fill="#4a2a1c"/>
</svg>
<div style="top:322.7px;height:16px;line-height:16px;font-size:10.5px;color:#4a2a1c;letter-spacing:0.01px;white-space:nowrap;font-weight:bold;left:1447.4px;">Rain Pad</div>
<div style="left:1422.2px;top:341.9px;width:107.1px;height:18.4px;background:#ffa374;"></div>
<svg width="1564" height="960" viewBox="0 0 1564 960">
<circle cx="1433.2" cy="351.2" r="6.400" fill="none" stroke="#4a2a1c" stroke-width="1.100"/>
<polygon points="1431,347.7 1431,354.7 1436.8,351.2" fill="#4a2a1c"/>
</svg>
<div style="top:343.3px;height:16px;line-height:16px;font-size:10.5px;color:#4a2a1c;letter-spacing:0.15px;white-space:nowrap;font-weight:bold;left:1447.4px;">Flangy Pad</div>
<div style="left:1422px;top:223.4px;width:107.3px;height:2.4px;background:#7e7e7e;"></div>
<div style="left:1422px;top:319.2px;width:107.3px;height:2.1px;background:#7e7e7e;"></div>
<div style="left:1422px;top:339.8px;width:107.3px;height:2.1px;background:#7e7e7e;"></div>
<div style="left:1421.8px;top:225.8px;width:1.2px;height:136.8px;background:#7e7e7e;"></div>
<div style="left:1417px;top:362.7px;width:112.3px;height:51.1px;background:#ff94a6;"></div>
<svg width="1564" height="960" viewBox="0 0 1564 960">
<circle cx="1428" cy="372" r="6.400" fill="none" stroke="#4a1f2a" stroke-width="1.100"/>
<polygon points="1424.4,370 1431.6,370 1428,375.6" fill="#4a1f2a"/>
</svg>
<div style="top:364.1px;height:16px;line-height:16px;font-size:10.5px;color:#4a1f2a;letter-spacing:0.29px;white-space:nowrap;font-weight:bold;left:1442.6px;">Ambience</div>
<div style="left:1417px;top:416.9px;width:112.3px;height:18.5px;background:#ffffff;"></div>
<svg width="1564" height="960" viewBox="0 0 1564 960">
<circle cx="1428" cy="426.2" r="6.400" fill="none" stroke="#3a3a3a" stroke-width="1.100"/>
<polygon points="1425.8,422.7 1425.8,429.7 1431.6,426.2" fill="#3a3a3a"/>
</svg>
<div style="top:418.3px;height:16px;line-height:16px;font-size:10.5px;color:#3a3a3a;letter-spacing:0.27px;white-space:nowrap;font-weight:bold;left:1444.8px;">Main</div>
<div style="left:1529.3px;top:93.3px;width:1.2px;height:342.7px;background:#7e7e7e;"></div>
<div style="left:1415px;top:93.3px;width:2px;height:342.7px;background:#828282;"></div>
<div style="left:1530.5px;top:225.8px;width:23.5px;height:93.4px;background:#bdbdbd;"></div>
<div style="left:1536px;top:95.5px;width:3.4px;height:24px;background:#1e1e1e;"></div>
<div style="left:1536px;top:95.5px;width:3.4px;height:24px;background:#00f050;"></div>
<div style="left:1540.6px;top:95.5px;width:3.4px;height:24px;background:#1e1e1e;"></div>
<div style="left:1540.6px;top:95.5px;width:3.4px;height:24px;background:#00f050;"></div>
<div style="left:1536px;top:125.5px;width:3.4px;height:14.3px;background:#1e1e1e;"></div>
<div style="left:1536px;top:132.3px;width:3.4px;height:7.5px;background:#00f050;"></div>
<div style="left:1536px;top:126.8px;width:3.4px;height:1px;background:#a5a5a5;"></div>
<div style="left:1536px;top:129.8px;width:3.4px;height:1.2px;background:#ffb000;"></div>
<div style="left:1540.6px;top:125.5px;width:3.4px;height:14.3px;background:#1e1e1e;"></div>
<div style="left:1540.6px;top:132.3px;width:3.4px;height:7.5px;background:#00f050;"></div>
<div style="left:1540.6px;top:126.8px;width:3.4px;height:1px;background:#a5a5a5;"></div>
<div style="left:1540.6px;top:129.8px;width:3.4px;height:1.2px;background:#ffb000;"></div>
<div style="left:1536px;top:146px;width:3.4px;height:14.5px;background:#1e1e1e;"></div>
<div style="left:1536px;top:156.3px;width:3.4px;height:4.2px;background:#00f050;"></div>
<div style="left:1536px;top:147.3px;width:3.4px;height:1px;background:#a5a5a5;"></div>
<div style="left:1536px;top:153.8px;width:3.4px;height:1.2px;background:#00c040;"></div>
<div style="left:1540.6px;top:146px;width:3.4px;height:14.5px;background:#1e1e1e;"></div>
<div style="left:1540.6px;top:156.3px;width:3.4px;height:4.2px;background:#00f050;"></div>
<div style="left:1540.6px;top:147.3px;width:3.4px;height:1px;background:#a5a5a5;"></div>
<div style="left:1540.6px;top:153.8px;width:3.4px;height:1.2px;background:#00c040;"></div>
<div style="left:1536px;top:166.5px;width:3.4px;height:14.5px;background:#1e1e1e;"></div>
<div style="left:1536px;top:173.5px;width:3.4px;height:7.5px;background:#00f050;"></div>
<div style="left:1536px;top:167.8px;width:3.4px;height:1px;background:#a5a5a5;"></div>
<div style="left:1540.6px;top:166.5px;width:3.4px;height:14.5px;background:#1e1e1e;"></div>
<div style="left:1540.6px;top:173.5px;width:3.4px;height:7.5px;background:#00f050;"></div>
<div style="left:1540.6px;top:167.8px;width:3.4px;height:1px;background:#a5a5a5;"></div>
<div style="left:1536px;top:187.5px;width:3.4px;height:35.9px;background:#1e1e1e;"></div>
<div style="left:1536px;top:201px;width:3.4px;height:2.5px;background:#9a9a1c;"></div>
<div style="left:1536px;top:203.5px;width:3.4px;height:2.5px;background:#86f52a;"></div>
<div style="left:1536px;top:206px;width:3.4px;height:17.4px;background:#00f050;"></div>
<div style="left:1536px;top:196px;width:3.4px;height:1px;background:#e08000;"></div>
<div style="left:1540.6px;top:187.5px;width:3.4px;height:35.9px;background:#1e1e1e;"></div>
<div style="left:1540.6px;top:199px;width:3.4px;height:4.5px;background:#9a9a1c;"></div>
<div style="left:1540.6px;top:203.5px;width:3.4px;height:2.5px;background:#86f52a;"></div>
<div style="left:1540.6px;top:206px;width:3.4px;height:17.4px;background:#00f050;"></div>
<div style="left:1540.6px;top:196px;width:3.4px;height:1px;background:#e08000;"></div>
<div style="left:1536px;top:189.8px;width:8px;height:1px;background:#a5a5a5;"></div>
<div style="left:1536px;top:227.7px;width:3.4px;height:89.3px;background:#1e1e1e;"></div>
<div style="left:1536px;top:252.5px;width:3.4px;height:5.3px;background:#9a9a1c;"></div>
<div style="left:1536px;top:257.8px;width:3.4px;height:4.2px;background:#86f52a;"></div>
<div style="left:1536px;top:262px;width:3.4px;height:55px;background:#00f050;"></div>
<div style="left:1536px;top:242.7px;width:3.4px;height:1px;background:#e08000;"></div>
<div style="left:1540.6px;top:227.7px;width:3.4px;height:89.3px;background:#1e1e1e;"></div>
<div style="left:1540.6px;top:249px;width:3.4px;height:8.8px;background:#9a9a1c;"></div>
<div style="left:1540.6px;top:257.8px;width:3.4px;height:4.2px;background:#86f52a;"></div>
<div style="left:1540.6px;top:262px;width:3.4px;height:55px;background:#00f050;"></div>
<div style="left:1540.6px;top:242.5px;width:3.4px;height:1px;background:#e08000;"></div>
<div style="left:1536px;top:237px;width:8px;height:1px;background:#bdbdbd;"></div>
<div style="left:1536px;top:323.2px;width:3.4px;height:14.3px;background:#1e1e1e;"></div>
<div style="left:1536px;top:331.5px;width:3.4px;height:6px;background:#00f050;"></div>
<div style="left:1536px;top:324.5px;width:3.4px;height:1px;background:#a5a5a5;"></div>
<div style="left:1536px;top:329px;width:3.4px;height:1.2px;background:#00c040;"></div>
<div style="left:1540.6px;top:323.2px;width:3.4px;height:14.3px;background:#1e1e1e;"></div>
<div style="left:1540.6px;top:331.5px;width:3.4px;height:6px;background:#00f050;"></div>
<div style="left:1540.6px;top:324.5px;width:3.4px;height:1px;background:#a5a5a5;"></div>
<div style="left:1540.6px;top:329px;width:3.4px;height:1.2px;background:#00c040;"></div>
<div style="left:1536px;top:343.8px;width:3.4px;height:14.4px;background:#1e1e1e;"></div>
<div style="left:1536px;top:352px;width:3.4px;height:6.2px;background:#00f050;"></div>
<div style="left:1536px;top:345.1px;width:3.4px;height:1px;background:#a5a5a5;"></div>
<div style="left:1536px;top:349.5px;width:3.4px;height:1.2px;background:#c8d020;"></div>
<div style="left:1540.6px;top:343.8px;width:3.4px;height:14.4px;background:#1e1e1e;"></div>
<div style="left:1540.6px;top:352px;width:3.4px;height:6.2px;background:#00f050;"></div>
<div style="left:1540.6px;top:345.1px;width:3.4px;height:1px;background:#a5a5a5;"></div>
<div style="left:1540.6px;top:349.5px;width:3.4px;height:1.2px;background:#c8d020;"></div>
<div style="left:1536px;top:365px;width:3.4px;height:47px;background:#1e1e1e;"></div>
<div style="left:1536px;top:410.3px;width:3.4px;height:1px;background:#00f050;"></div>
<div style="left:1540.6px;top:365px;width:3.4px;height:47px;background:#1e1e1e;"></div>
<div style="left:1540.6px;top:410.3px;width:3.4px;height:1px;background:#00f050;"></div>
<div style="left:1536px;top:372.3px;width:8px;height:1px;background:#a5a5a5;"></div>
<div style="left:1536px;top:419px;width:3.4px;height:14px;background:#00f050;"></div>
<div style="left:1536px;top:419px;width:3.4px;height:2px;background:#e86a30;"></div>
<div style="left:1536px;top:421px;width:3.4px;height:3px;background:#e8c800;"></div>
<div style="left:1536px;top:424px;width:3.4px;height:2px;background:#86f52a;"></div>
<div style="left:1536px;top:420.4px;width:3.4px;height:0.8px;background:#a5a5a5;"></div>
<div style="left:1540.6px;top:419px;width:3.4px;height:14px;background:#00f050;"></div>
<div style="left:1540.6px;top:419px;width:3.4px;height:2px;background:#e86a30;"></div>
<div style="left:1540.6px;top:421px;width:3.4px;height:3px;background:#e8c800;"></div>
<div style="left:1540.6px;top:424px;width:3.4px;height:2px;background:#86f52a;"></div>
<div style="left:1540.6px;top:420.4px;width:3.4px;height:0.8px;background:#a5a5a5;"></div>
<div style="left:1417.4px;top:442.4px;width:16px;height:13.3px;background:#d4d4d4;border:1px solid #444;box-sizing:border-box;"></div>
<svg width="1564" height="960" viewBox="0 0 1564 960">
<path d="M1420.500 449h1.500M1423.300 447.500v3M1425.400 444.800v8.400M1427.500 446.500v5M1429.600 448v2M1430.500 449h1" stroke="#1c1c1c" stroke-width="1"/>
</svg>
<div style="left:1437.3px;top:442.4px;width:37.5px;height:13.3px;background:#b8b8b8;border:1px solid #3a3a3a;box-sizing:border-box;"></div>
<div style="top:441.2px;height:16px;line-height:16px;font-size:10.5px;color:#1c1c1c;letter-spacing:0.26px;white-space:nowrap;-webkit-text-stroke:0.25px #1c1c1c;left:1306.13px;width:300px;text-align:center;">1.00x</div>
<div style="left:1492.5px;top:442.4px;width:15.9px;height:13.3px;background:#d4d4d4;border:1px solid #444;box-sizing:border-box;"></div>
<div style="top:441.2px;height:16px;line-height:16px;font-size:10.5px;color:#1c1c1c;letter-spacing:0.5px;white-space:nowrap;-webkit-text-stroke:0.25px #1c1c1c;left:1350.75px;width:300px;text-align:center;">H</div>
<div style="left:1512.5px;top:442.4px;width:15.4px;height:13.3px;background:#d4d4d4;border:1px solid #444;box-sizing:border-box;"></div>
<div style="top:441.2px;height:16px;line-height:16px;font-size:10.5px;color:#1c1c1c;letter-spacing:0.5px;white-space:nowrap;-webkit-text-stroke:0.25px #1c1c1c;left:1370.45px;width:300px;text-align:center;">W</div>
<div style="left:506px;top:460.8px;width:1048px;height:2.8px;background:#848484;"></div>
<div style="left:506px;top:463.6px;width:938px;height:243.4px;overflow:hidden;border-radius:0 0 0 4px;"><div style="left:-506px;top:-463.6px;width:1564px;height:960px;">
<div style="left:479.8px;top:463.6px;width:101.2px;height:25.1px;background:#93a7ff;"></div>
<div style="left:479.8px;top:488.7px;width:101.2px;height:2.1px;background:#848484;"></div>
<div style="left:479.8px;top:698.3px;width:101.2px;height:2.2px;background:#848484;"></div>
<div style="left:479.8px;top:700.5px;width:101.2px;height:6.5px;background:#93a7ff;"></div>
<div style="top:471.5px;height:16px;line-height:16px;font-size:10.5px;color:#1f2a5a;letter-spacing:-0.05px;white-space:nowrap;font-weight:bold;left:484.3px;">Drums</div>
<svg width="1564" height="960" viewBox="0 0 1564 960">
<circle cx="571.8" cy="479.3" r="6.300" fill="none" stroke="#1f2a5a" stroke-width="1.100"/>
<polygon points="568.3,477.5 575.3,477.5 571.8,482.9" fill="#1f2a5a"/>
</svg>
<div style="left:488px;top:496.7px;width:37.5px;height:13px;background:#dedede;border:1px solid #333;box-sizing:border-box;border-radius:7px;"></div>
<div style="top:495.4px;height:16px;line-height:16px;font-size:10.5px;color:#1c1c1c;letter-spacing:0.2px;white-space:nowrap;-webkit-text-stroke:0.25px #1c1c1c;left:356.85px;width:300px;text-align:center;">-9.31</div>
<div style="left:488px;top:516.2px;width:37.5px;height:13.3px;background:#dedede;border:1px solid #555;box-sizing:border-box;"></div>
<div style="top:515.1px;height:16px;line-height:16px;font-size:10.5px;color:#1c1c1c;letter-spacing:0.2px;white-space:nowrap;-webkit-text-stroke:0.25px #1c1c1c;left:356.85px;width:300px;text-align:center;">-1.0</div>
<svg width="1564" height="960" viewBox="0 0 1564 960">
<path d="M508.53 601.31A12.95 12.95 0 0 1 512.98 625.32" stroke="#222" stroke-width="2.300" fill="none"/><path d="M504.47 601.31A12.95 12.95 0 0 0 500.02 625.32" stroke="#222" stroke-width="2.300" fill="none"/><path d="M506.5 600.2V614.8" stroke="#222" stroke-width="2.300"/><polygon points="502.5,594 510.5,594 506.5,598.4" fill="#222"/>
</svg>
<div style="left:494.6px;top:630.2px;width:24.5px;height:24.5px;background:#ffb901;border:1px solid #8a6a10;box-sizing:border-box;"></div>
<div style="top:634.7px;height:16px;line-height:16px;font-size:13.5px;color:#111;letter-spacing:0px;white-space:nowrap;font-weight:bold;left:356.85px;width:300px;text-align:center;">1</div>
<div style="left:494.6px;top:659.5px;width:24.5px;height:13.3px;background:#dadada;border:1px solid #5a5a5a;box-sizing:border-box;"></div>
<div style="top:658.3px;height:16px;line-height:16px;font-size:10.5px;color:#1c1c1c;letter-spacing:0px;white-space:nowrap;-webkit-text-stroke:0.25px #1c1c1c;left:356.85px;width:300px;text-align:center;">S</div>
<div style="left:494.6px;top:678.1px;width:24.5px;height:13.5px;background:#dadada;border:1px solid #5a5a5a;box-sizing:border-box;"></div>
<svg width="1564" height="960" viewBox="0 0 1564 960">
<circle cx="506.85" cy="684.900" r="3.400" fill="#1c1c1c"/><path d="M504.95 684.600A1.900 1.900 0 0 1 506.85 682.700" stroke="#dadada" stroke-width="1.100" fill="none"/>
</svg>
<div style="left:543.1px;top:496.2px;width:13.7px;height:195.5px;background:#242424;border-radius:2px;"></div>
<div style="left:544.1px;top:579.7px;width:5.25px;height:10.8px;background:#12b050;"></div>
<div style="left:544.1px;top:590.5px;width:5.25px;height:99.6px;background:#00f050;"></div>
<div style="left:544.1px;top:537.7px;width:5.25px;height:1.1px;background:#e09a00;"></div>
<div style="left:550.6px;top:587.2px;width:5.25px;height:3.3px;background:#12b050;"></div>
<div style="left:550.6px;top:590.5px;width:5.25px;height:99.6px;background:#00f050;"></div>
<div style="left:550.6px;top:537px;width:5.25px;height:1.1px;background:#ffc400;"></div>
<div style="left:549.6px;top:497.2px;width:0.8px;height:192.9px;background:#5e5e5e;"></div>
<div style="left:544px;top:516.9px;width:12px;height:1px;background:#e8e8e8;"></div>
<svg width="1564" height="960" viewBox="0 0 1564 960">
<path d="M537.6 517.2h2.800M537.6 535.5h2.800M537.6 555h2.800M537.6 574.7h2.800M537.6 593.2h2.800M537.6 612.8h2.800M537.6 630h2.800M537.6 644h2.800M537.6 657.2h2.800M537.6 679.2h2.800" stroke="#6e6e6e" stroke-width="1"/>
<path d="M537.6 497.800h2.400M537.6 669.500h2.400M537.6 687.800h2.400" stroke="#8e8e8e" stroke-width="1"/>
</svg>
<div style="top:493.7px;height:16px;line-height:16px;font-size:9.5px;color:#3a3a3a;letter-spacing:0.2px;white-space:nowrap;-webkit-text-stroke:0.1px #3a3a3a;left:561px;">6</div>
<div style="top:509.2px;height:16px;line-height:16px;font-size:9.5px;color:#3a3a3a;letter-spacing:0.2px;white-space:nowrap;-webkit-text-stroke:0.1px #3a3a3a;left:561px;">0</div>
<div style="top:527.5px;height:16px;line-height:16px;font-size:9.5px;color:#3a3a3a;letter-spacing:0.2px;white-space:nowrap;-webkit-text-stroke:0.1px #3a3a3a;left:561px;">6</div>
<div style="top:546.8px;height:16px;line-height:16px;font-size:9.5px;color:#3a3a3a;letter-spacing:0.2px;white-space:nowrap;-webkit-text-stroke:0.1px #3a3a3a;left:561px;">12</div>
<div style="top:566.5px;height:16px;line-height:16px;font-size:9.5px;color:#3a3a3a;letter-spacing:0.2px;white-space:nowrap;-webkit-text-stroke:0.1px #3a3a3a;left:561px;">18</div>
<div style="top:585.1px;height:16px;line-height:16px;font-size:9.5px;color:#3a3a3a;letter-spacing:0.2px;white-space:nowrap;-webkit-text-stroke:0.1px #3a3a3a;left:561px;">24</div>
<div style="top:604.4px;height:16px;line-height:16px;font-size:9.5px;color:#3a3a3a;letter-spacing:0.2px;white-space:nowrap;-webkit-text-stroke:0.1px #3a3a3a;left:561px;">30</div>
<div style="top:621.7px;height:16px;line-height:16px;font-size:9.5px;color:#3a3a3a;letter-spacing:0.2px;white-space:nowrap;-webkit-text-stroke:0.1px #3a3a3a;left:561px;">36</div>
<div style="top:635.6px;height:16px;line-height:16px;font-size:9.5px;color:#3a3a3a;letter-spacing:0.2px;white-space:nowrap;-webkit-text-stroke:0.1px #3a3a3a;left:561px;">42</div>
<div style="top:649.2px;height:16px;line-height:16px;font-size:9.5px;color:#3a3a3a;letter-spacing:0.2px;white-space:nowrap;-webkit-text-stroke:0.1px #3a3a3a;left:561px;">48</div>
<div style="top:670.9px;height:16px;line-height:16px;font-size:9.5px;color:#3a3a3a;letter-spacing:0.2px;white-space:nowrap;-webkit-text-stroke:0.1px #3a3a3a;left:561px;">60</div>
<svg width="1564" height="960" viewBox="0 0 1564 960">
<polygon points="530.1,513.7 530.1,527.3 541.5,520.5" fill="#111"/>
</svg>
<div style="left:583px;top:463.6px;width:101.2px;height:25.1px;background:#93a7ff;"></div>
<div style="left:583px;top:488.7px;width:101.2px;height:2.1px;background:#848484;"></div>
<div style="left:583px;top:698.3px;width:101.2px;height:2.2px;background:#848484;"></div>
<div style="left:583px;top:700.5px;width:101.2px;height:6.5px;background:#93a7ff;"></div>
<div style="top:471.5px;height:16px;line-height:16px;font-size:10.5px;color:#1f2a5a;letter-spacing:0.16px;white-space:nowrap;font-weight:bold;left:587.5px;">Breaks</div>
<div style="left:591.2px;top:496.7px;width:37.5px;height:13px;background:#dedede;border:1px solid #333;box-sizing:border-box;border-radius:7px;"></div>
<div style="top:495.4px;height:16px;line-height:16px;font-size:10.5px;color:#1c1c1c;letter-spacing:0.2px;white-space:nowrap;-webkit-text-stroke:0.25px #1c1c1c;left:460.05px;width:300px;text-align:center;">-9.75</div>
<div style="left:591.2px;top:516.2px;width:37.5px;height:13.3px;background:#dedede;border:1px solid #555;box-sizing:border-box;"></div>
<div style="top:515.1px;height:16px;line-height:16px;font-size:10.5px;color:#1c1c1c;letter-spacing:0.2px;white-space:nowrap;-webkit-text-stroke:0.25px #1c1c1c;left:460.05px;width:300px;text-align:center;">-9.4</div>
<svg width="1564" height="960" viewBox="0 0 1564 960">
<path d="M611.73 601.31A12.95 12.95 0 0 1 616.18 625.32" stroke="#222" stroke-width="2.300" fill="none"/><path d="M607.67 601.31A12.95 12.95 0 0 0 603.23 625.32" stroke="#222" stroke-width="2.300" fill="none"/><path d="M609.7 600.2V614.8" stroke="#222" stroke-width="2.300"/><polygon points="605.7,594 613.7,594 609.7,598.4" fill="#222"/>
</svg>
<div style="left:597.8px;top:630.2px;width:24.5px;height:24.5px;background:#ffb901;border:1px solid #8a6a10;box-sizing:border-box;"></div>
<div style="top:634.7px;height:16px;line-height:16px;font-size:13.5px;color:#111;letter-spacing:0px;white-space:nowrap;font-weight:bold;left:460.05px;width:300px;text-align:center;">2</div>
<div style="left:597.8px;top:659.5px;width:24.5px;height:13.3px;background:#dadada;border:1px solid #5a5a5a;box-sizing:border-box;"></div>
<div style="top:658.3px;height:16px;line-height:16px;font-size:10.5px;color:#1c1c1c;letter-spacing:0px;white-space:nowrap;-webkit-text-stroke:0.25px #1c1c1c;left:460.05px;width:300px;text-align:center;">S</div>
<div style="left:597.8px;top:678.1px;width:24.5px;height:13.5px;background:#dadada;border:1px solid #5a5a5a;box-sizing:border-box;"></div>
<svg width="1564" height="960" viewBox="0 0 1564 960">
<circle cx="610.05" cy="684.800" r="3.600" fill="#7a7a7a"/>
</svg>
<div style="left:646.3px;top:496.2px;width:13.7px;height:195.5px;background:#242424;border-radius:2px;"></div>
<div style="left:647.3px;top:553.3px;width:5.25px;height:136.8px;background:linear-gradient(#8f9a1a 0px,#8c9c1c 12.7px,#10ae4c 20.7px,#10ae4c 38.9px,#00f050 38.9px);"></div>
<div style="left:647.3px;top:548.2px;width:5.25px;height:1.1px;background:#ffd000;"></div>
<div style="left:653.8px;top:551.6px;width:5.25px;height:138.5px;background:linear-gradient(#8f9a1a 0px,#8c9c1c 14.4px,#10ae4c 22.4px,#10ae4c 40.6px,#00f050 40.6px);"></div>
<div style="left:653.8px;top:550.6px;width:5.25px;height:1.1px;background:#ffd000;"></div>
<div style="left:652.8px;top:497.2px;width:0.8px;height:192.9px;background:#5e5e5e;"></div>
<div style="left:647.2px;top:516.9px;width:12px;height:1px;background:#e8e8e8;"></div>
<svg width="1564" height="960" viewBox="0 0 1564 960">
<path d="M640.8 517.2h2.800M640.8 535.5h2.800M640.8 555h2.800M640.8 574.7h2.800M640.8 593.2h2.800M640.8 612.8h2.800M640.8 630h2.800M640.8 644h2.800M640.8 657.2h2.800M640.8 679.2h2.800" stroke="#6e6e6e" stroke-width="1"/>
<path d="M640.8 497.800h2.400M640.8 669.500h2.400M640.8 687.800h2.400" stroke="#8e8e8e" stroke-width="1"/>
</svg>
<div style="top:493.7px;height:16px;line-height:16px;font-size:9.5px;color:#3a3a3a;letter-spacing:0.2px;white-space:nowrap;-webkit-text-stroke:0.1px #3a3a3a;left:664.2px;">6</div>
<div style="top:509.2px;height:16px;line-height:16px;font-size:9.5px;color:#3a3a3a;letter-spacing:0.2px;white-space:nowrap;-webkit-text-stroke:0.1px #3a3a3a;left:664.2px;">0</div>
<div style="top:527.5px;height:16px;line-height:16px;font-size:9.5px;color:#3a3a3a;letter-spacing:0.2px;white-space:nowrap;-webkit-text-stroke:0.1px #3a3a3a;left:664.2px;">6</div>
<div style="top:546.8px;height:16px;line-height:16px;font-size:9.5px;color:#3a3a3a;letter-spacing:0.2px;white-space:nowrap;-webkit-text-stroke:0.1px #3a3a3a;left:664.2px;">12</div>
<div style="top:566.5px;height:16px;line-height:16px;font-size:9.5px;color:#3a3a3a;letter-spacing:0.2px;white-space:nowrap;-webkit-text-stroke:0.1px #3a3a3a;left:664.2px;">18</div>
<div style="top:585.1px;height:16px;line-height:16px;font-size:9.5px;color:#3a3a3a;letter-spacing:0.2px;white-space:nowrap;-webkit-text-stroke:0.1px #3a3a3a;left:664.2px;">24</div>
<div style="top:604.4px;height:16px;line-height:16px;font-size:9.5px;color:#3a3a3a;letter-spacing:0.2px;white-space:nowrap;-webkit-text-stroke:0.1px #3a3a3a;left:664.2px;">30</div>
<div style="top:621.7px;height:16px;line-height:16px;font-size:9.5px;color:#3a3a3a;letter-spacing:0.2px;white-space:nowrap;-webkit-text-stroke:0.1px #3a3a3a;left:664.2px;">36</div>
<div style="top:635.6px;height:16px;line-height:16px;font-size:9.5px;color:#3a3a3a;letter-spacing:0.2px;white-space:nowrap;-webkit-text-stroke:0.1px #3a3a3a;left:664.2px;">42</div>
<div style="top:649.2px;height:16px;line-height:16px;font-size:9.5px;color:#3a3a3a;letter-spacing:0.2px;white-space:nowrap;-webkit-text-stroke:0.1px #3a3a3a;left:664.2px;">48</div>
<div style="top:670.9px;height:16px;line-height:16px;font-size:9.5px;color:#3a3a3a;letter-spacing:0.2px;white-space:nowrap;-webkit-text-stroke:0.1px #3a3a3a;left:664.2px;">60</div>
<svg width="1564" height="960" viewBox="0 0 1564 960">
<polygon points="633.3,539.8 633.3,553.4 644.7,546.6" fill="#111"/>
</svg>
<div style="left:686.2px;top:463.6px;width:101.2px;height:25.1px;background:#86c5ff;"></div>
<div style="left:686.2px;top:488.7px;width:101.2px;height:2.1px;background:#848484;"></div>
<div style="left:686.2px;top:698.3px;width:101.2px;height:2.2px;background:#848484;"></div>
<div style="left:686.2px;top:700.5px;width:101.2px;height:6.5px;background:#86c5ff;"></div>
<div style="top:471.5px;height:16px;line-height:16px;font-size:10.5px;color:#1c3a55;letter-spacing:0.24px;white-space:nowrap;font-weight:bold;left:690.7px;">Percussion</div>
<svg width="1564" height="960" viewBox="0 0 1564 960">
<circle cx="778.2" cy="479.3" r="6.300" fill="none" stroke="#1c3a55" stroke-width="1.100"/>
<path d="M774.9 476.7h6.600M774.9 479.3h6.6M774.9 481.9h6.6" stroke="#1c3a55" stroke-width="1.100"/>
</svg>
<div style="left:694.4px;top:496.7px;width:37.5px;height:13px;background:#dedede;border:1px solid #333;box-sizing:border-box;border-radius:7px;"></div>
<div style="top:495.4px;height:16px;line-height:16px;font-size:10.5px;color:#1c1c1c;letter-spacing:0.2px;white-space:nowrap;-webkit-text-stroke:0.25px #1c1c1c;left:563.25px;width:300px;text-align:center;">-9.26</div>
<div style="left:694.4px;top:516.2px;width:37.5px;height:13.3px;background:#dedede;border:1px solid #555;box-sizing:border-box;"></div>
<div style="top:515.1px;height:16px;line-height:16px;font-size:10.5px;color:#1c1c1c;letter-spacing:0.2px;white-space:nowrap;-webkit-text-stroke:0.25px #1c1c1c;left:563.25px;width:300px;text-align:center;">0</div>
<svg width="1564" height="960" viewBox="0 0 1564 960">
<path d="M714.93 601.31A12.95 12.95 0 0 1 719.38 625.32" stroke="#222" stroke-width="2.300" fill="none"/><path d="M710.87 601.31A12.95 12.95 0 0 0 706.43 625.32" stroke="#222" stroke-width="2.300" fill="none"/><path d="M712.9 600.2V614.8" stroke="#222" stroke-width="2.300"/><polygon points="708.9,594 716.9,594 712.9,598.4" fill="#222"/>
</svg>
<div style="left:701px;top:630.2px;width:24.5px;height:24.5px;background:#ffb901;border:1px solid #8a6a10;box-sizing:border-box;"></div>
<div style="top:634.7px;height:16px;line-height:16px;font-size:13.5px;color:#111;letter-spacing:0px;white-space:nowrap;font-weight:bold;left:563.25px;width:300px;text-align:center;">3</div>
<div style="left:701px;top:659.5px;width:24.5px;height:13.3px;background:#dadada;border:1px solid #5a5a5a;box-sizing:border-box;"></div>
<div style="top:658.3px;height:16px;line-height:16px;font-size:10.5px;color:#1c1c1c;letter-spacing:0px;white-space:nowrap;-webkit-text-stroke:0.25px #1c1c1c;left:563.25px;width:300px;text-align:center;">S</div>
<div style="left:749.5px;top:496.2px;width:13.7px;height:195.5px;background:#242424;border-radius:2px;"></div>
<div style="left:750.5px;top:578.7px;width:5.25px;height:6.8px;background:#12b050;"></div>
<div style="left:750.5px;top:585.5px;width:5.25px;height:104.6px;background:#00f050;"></div>
<div style="left:750.5px;top:546.8px;width:5.25px;height:1.1px;background:#ffc400;"></div>
<div style="left:757px;top:582px;width:5.25px;height:3.5px;background:#12b050;"></div>
<div style="left:757px;top:585.5px;width:5.25px;height:104.6px;background:#00f050;"></div>
<div style="left:757px;top:547.2px;width:5.25px;height:1.1px;background:#ffc400;"></div>
<div style="left:756px;top:497.2px;width:0.8px;height:192.9px;background:#5e5e5e;"></div>
<div style="left:750.4px;top:516.9px;width:12px;height:1px;background:#e8e8e8;"></div>
<svg width="1564" height="960" viewBox="0 0 1564 960">
<path d="M744 517.2h2.800M744 535.5h2.800M744 555h2.800M744 574.7h2.800M744 593.2h2.800M744 612.8h2.800M744 630h2.800M744 644h2.800M744 657.2h2.800M744 679.2h2.800" stroke="#6e6e6e" stroke-width="1"/>
<path d="M744 497.800h2.400M744 669.500h2.400M744 687.800h2.400" stroke="#8e8e8e" stroke-width="1"/>
</svg>
<div style="top:493.7px;height:16px;line-height:16px;font-size:9.5px;color:#3a3a3a;letter-spacing:0.2px;white-space:nowrap;-webkit-text-stroke:0.1px #3a3a3a;left:767.4px;">6</div>
<div style="top:509.2px;height:16px;line-height:16px;font-size:9.5px;color:#3a3a3a;letter-spacing:0.2px;white-space:nowrap;-webkit-text-stroke:0.1px #3a3a3a;left:767.4px;">0</div>
<div style="top:527.5px;height:16px;line-height:16px;font-size:9.5px;color:#3a3a3a;letter-spacing:0.2px;white-space:nowrap;-webkit-text-stroke:0.1px #3a3a3a;left:767.4px;">6</div>
<div style="top:546.8px;height:16px;line-height:16px;font-size:9.5px;color:#3a3a3a;letter-spacing:0.2px;white-space:nowrap;-webkit-text-stroke:0.1px #3a3a3a;left:767.4px;">12</div>
<div style="top:566.5px;height:16px;line-height:16px;font-size:9.5px;color:#3a3a3a;letter-spacing:0.2px;white-space:nowrap;-webkit-text-stroke:0.1px #3a3a3a;left:767.4px;">18</div>
<div style="top:585.1px;height:16px;line-height:16px;font-size:9.5px;color:#3a3a3a;letter-spacing:0.2px;white-space:nowrap;-webkit-text-stroke:0.1px #3a3a3a;left:767.4px;">24</div>
<div style="top:604.4px;height:16px;line-height:16px;font-size:9.5px;color:#3a3a3a;letter-spacing:0.2px;white-space:nowrap;-webkit-text-stroke:0.1px #3a3a3a;left:767.4px;">30</div>
<div style="top:621.7px;height:16px;line-height:16px;font-size:9.5px;color:#3a3a3a;letter-spacing:0.2px;white-space:nowrap;-webkit-text-stroke:0.1px #3a3a3a;left:767.4px;">36</div>
<div style="top:635.6px;height:16px;line-height:16px;font-size:9.5px;color:#3a3a3a;letter-spacing:0.2px;white-space:nowrap;-webkit-text-stroke:0.1px #3a3a3a;left:767.4px;">42</div>
<div style="top:649.2px;height:16px;line-height:16px;font-size:9.5px;color:#3a3a3a;letter-spacing:0.2px;white-space:nowrap;-webkit-text-stroke:0.1px #3a3a3a;left:767.4px;">48</div>
<div style="top:670.9px;height:16px;line-height:16px;font-size:9.5px;color:#3a3a3a;letter-spacing:0.2px;white-space:nowrap;-webkit-text-stroke:0.1px #3a3a3a;left:767.4px;">60</div>
<svg width="1564" height="960" viewBox="0 0 1564 960">
<polygon points="736.5,510.2 736.5,523.8 747.9,517" fill="#111"/>
</svg>
<div style="left:789.4px;top:463.6px;width:101.2px;height:25.1px;background:#5ffee5;"></div>
<div style="left:789.4px;top:488.7px;width:101.2px;height:2.1px;background:#848484;"></div>
<div style="left:789.4px;top:698.3px;width:101.2px;height:2.2px;background:#848484;"></div>
<div style="left:789.4px;top:700.5px;width:101.2px;height:6.5px;background:#5ffee5;"></div>
<div style="top:471.5px;height:16px;line-height:16px;font-size:10.5px;color:#0f4a42;letter-spacing:-0.28px;white-space:nowrap;font-weight:bold;left:793.9px;">Bass</div>
<div style="left:797.6px;top:496.7px;width:37.5px;height:13px;background:#dedede;border:1px solid #333;box-sizing:border-box;border-radius:7px;"></div>
<div style="top:495.4px;height:16px;line-height:16px;font-size:10.5px;color:#1c1c1c;letter-spacing:0.2px;white-space:nowrap;-webkit-text-stroke:0.25px #1c1c1c;left:666.45px;width:300px;text-align:center;">-10.8</div>
<div style="left:797.6px;top:516.2px;width:37.5px;height:13.3px;background:#dedede;border:1px solid #555;box-sizing:border-box;"></div>
<div style="top:515.1px;height:16px;line-height:16px;font-size:10.5px;color:#1c1c1c;letter-spacing:0.2px;white-space:nowrap;-webkit-text-stroke:0.25px #1c1c1c;left:666.45px;width:300px;text-align:center;">-7.7</div>
<svg width="1564" height="960" viewBox="0 0 1564 960">
<path d="M818.13 601.31A12.95 12.95 0 0 1 822.58 625.32" stroke="#222" stroke-width="2.300" fill="none"/><path d="M814.07 601.31A12.95 12.95 0 0 0 809.62 625.32" stroke="#222" stroke-width="2.300" fill="none"/><path d="M816.1 600.2V614.8" stroke="#222" stroke-width="2.300"/><polygon points="812.1,594 820.1,594 816.1,598.4" fill="#222"/>
</svg>
<div style="left:804.2px;top:630.2px;width:24.5px;height:24.5px;background:#ffb901;border:1px solid #8a6a10;box-sizing:border-box;"></div>
<div style="top:634.7px;height:16px;line-height:16px;font-size:13.5px;color:#111;letter-spacing:0px;white-space:nowrap;font-weight:bold;left:666.45px;width:300px;text-align:center;">8</div>
<div style="left:804.2px;top:659.5px;width:24.5px;height:13.3px;background:#dadada;border:1px solid #5a5a5a;box-sizing:border-box;"></div>
<div style="top:658.3px;height:16px;line-height:16px;font-size:10.5px;color:#1c1c1c;letter-spacing:0px;white-space:nowrap;-webkit-text-stroke:0.25px #1c1c1c;left:666.45px;width:300px;text-align:center;">S</div>
<div style="left:804.2px;top:678.1px;width:24.5px;height:13.5px;background:#dadada;border:1px solid #5a5a5a;box-sizing:border-box;"></div>
<svg width="1564" height="960" viewBox="0 0 1564 960">
<circle cx="816.45" cy="684.900" r="3.400" fill="#1c1c1c"/><path d="M814.55 684.600A1.900 1.900 0 0 1 816.45 682.700" stroke="#dadada" stroke-width="1.100" fill="none"/>
</svg>
<div style="left:852.7px;top:496.2px;width:13.7px;height:195.5px;background:#242424;border-radius:2px;"></div>
<div style="left:853.7px;top:555px;width:5.25px;height:135.1px;background:linear-gradient(#9a981c 0px,#9a981c 6.8px,#86f52a 7.5px,#7ef52e 15px,#00f050 18px);"></div>
<div style="left:853.7px;top:546.2px;width:5.25px;height:1.1px;background:#ffc400;"></div>
<div style="left:860.2px;top:555px;width:5.25px;height:135.1px;background:linear-gradient(#9a981c 0px,#9a981c 6.8px,#86f52a 7.5px,#7ef52e 15px,#00f050 18px);"></div>
<div style="left:860.2px;top:546.2px;width:5.25px;height:1.1px;background:#ffc400;"></div>
<div style="left:859.2px;top:497.2px;width:0.8px;height:192.9px;background:#5e5e5e;"></div>
<div style="left:853.6px;top:516.9px;width:12px;height:1px;background:#e8e8e8;"></div>
<svg width="1564" height="960" viewBox="0 0 1564 960">
<path d="M847.2 517.2h2.800M847.2 535.5h2.800M847.2 555h2.800M847.2 574.7h2.800M847.2 593.2h2.800M847.2 612.8h2.800M847.2 630h2.800M847.2 644h2.800M847.2 657.2h2.800M847.2 679.2h2.800" stroke="#6e6e6e" stroke-width="1"/>
<path d="M847.2 497.800h2.400M847.2 669.500h2.400M847.2 687.800h2.400" stroke="#8e8e8e" stroke-width="1"/>
</svg>
<div style="top:493.7px;height:16px;line-height:16px;font-size:9.5px;color:#3a3a3a;letter-spacing:0.2px;white-space:nowrap;-webkit-text-stroke:0.1px #3a3a3a;left:870.6px;">6</div>
<div style="top:509.2px;height:16px;line-height:16px;font-size:9.5px;color:#3a3a3a;letter-spacing:0.2px;white-space:nowrap;-webkit-text-stroke:0.1px #3a3a3a;left:870.6px;">0</div>
<div style="top:527.5px;height:16px;line-height:16px;font-size:9.5px;color:#3a3a3a;letter-spacing:0.2px;white-space:nowrap;-webkit-text-stroke:0.1px #3a3a3a;left:870.6px;">6</div>
<div style="top:546.8px;height:16px;line-height:16px;font-size:9.5px;color:#3a3a3a;letter-spacing:0.2px;white-space:nowrap;-webkit-text-stroke:0.1px #3a3a3a;left:870.6px;">12</div>
<div style="top:566.5px;height:16px;line-height:16px;font-size:9.5px;color:#3a3a3a;letter-spacing:0.2px;white-space:nowrap;-webkit-text-stroke:0.1px #3a3a3a;left:870.6px;">18</div>
<div style="top:585.1px;height:16px;line-height:16px;font-size:9.5px;color:#3a3a3a;letter-spacing:0.2px;white-space:nowrap;-webkit-text-stroke:0.1px #3a3a3a;left:870.6px;">24</div>
<div style="top:604.4px;height:16px;line-height:16px;font-size:9.5px;color:#3a3a3a;letter-spacing:0.2px;white-space:nowrap;-webkit-text-stroke:0.1px #3a3a3a;left:870.6px;">30</div>
<div style="top:621.7px;height:16px;line-height:16px;font-size:9.5px;color:#3a3a3a;letter-spacing:0.2px;white-space:nowrap;-webkit-text-stroke:0.1px #3a3a3a;left:870.6px;">36</div>
<div style="top:635.6px;height:16px;line-height:16px;font-size:9.5px;color:#3a3a3a;letter-spacing:0.2px;white-space:nowrap;-webkit-text-stroke:0.1px #3a3a3a;left:870.6px;">42</div>
<div style="top:649.2px;height:16px;line-height:16px;font-size:9.5px;color:#3a3a3a;letter-spacing:0.2px;white-space:nowrap;-webkit-text-stroke:0.1px #3a3a3a;left:870.6px;">48</div>
<div style="top:670.9px;height:16px;line-height:16px;font-size:9.5px;color:#3a3a3a;letter-spacing:0.2px;white-space:nowrap;-webkit-text-stroke:0.1px #3a3a3a;left:870.6px;">60</div>
<svg width="1564" height="960" viewBox="0 0 1564 960">
<polygon points="839.7,534.6 839.7,548.2 851.1,541.4" fill="#111"/>
</svg>
<div style="left:892.6px;top:463.6px;width:101.2px;height:25.1px;background:#5ffee5;"></div>
<div style="left:892.6px;top:488.7px;width:101.2px;height:2.1px;background:#848484;"></div>
<div style="left:892.6px;top:698.3px;width:101.2px;height:2.2px;background:#848484;"></div>
<div style="left:892.6px;top:700.5px;width:101.2px;height:6.5px;background:#5ffee5;"></div>
<div style="top:471.5px;height:16px;line-height:16px;font-size:10.5px;color:#0f4a42;letter-spacing:-0.06px;white-space:nowrap;font-weight:bold;left:897.1px;">Bass Drop</div>
<svg width="1564" height="960" viewBox="0 0 1564 960">
<circle cx="984.6" cy="479.3" r="6.300" fill="none" stroke="#0f4a42" stroke-width="1.100"/>
<polygon points="981.1,477.5 988.1,477.5 984.6,482.9" fill="#0f4a42"/>
</svg>
<div style="left:900.8px;top:496.7px;width:37.5px;height:13px;background:#dedede;border:1px solid #333;box-sizing:border-box;border-radius:7px;"></div>
<div style="top:495.4px;height:16px;line-height:16px;font-size:10.5px;color:#1c1c1c;letter-spacing:0.2px;white-space:nowrap;-webkit-text-stroke:0.25px #1c1c1c;left:769.65px;width:300px;text-align:center;">-11.3</div>
<div style="left:900.8px;top:516.2px;width:37.5px;height:13.3px;background:#dedede;border:1px solid #555;box-sizing:border-box;"></div>
<div style="top:515.1px;height:16px;line-height:16px;font-size:10.5px;color:#1c1c1c;letter-spacing:0.2px;white-space:nowrap;-webkit-text-stroke:0.25px #1c1c1c;left:769.65px;width:300px;text-align:center;">-0.2</div>
<svg width="1564" height="960" viewBox="0 0 1564 960">
<path d="M921.33 601.31A12.95 12.95 0 0 1 925.78 625.32" stroke="#222" stroke-width="2.300" fill="none"/><path d="M917.27 601.31A12.95 12.95 0 0 0 912.83 625.32" stroke="#222" stroke-width="2.300" fill="none"/><path d="M919.3 600.2V614.8" stroke="#222" stroke-width="2.300"/><polygon points="915.3,594 923.3,594 919.3,598.4" fill="#222"/>
</svg>
<div style="left:907.4px;top:630.2px;width:24.5px;height:24.5px;background:#ffb901;border:1px solid #8a6a10;box-sizing:border-box;"></div>
<div style="top:634.7px;height:16px;line-height:16px;font-size:13.5px;color:#111;letter-spacing:0px;white-space:nowrap;font-weight:bold;left:769.65px;width:300px;text-align:center;">9</div>
<div style="left:907.4px;top:659.5px;width:24.5px;height:13.3px;background:#dadada;border:1px solid #5a5a5a;box-sizing:border-box;"></div>
<div style="top:658.3px;height:16px;line-height:16px;font-size:10.5px;color:#1c1c1c;letter-spacing:0px;white-space:nowrap;-webkit-text-stroke:0.25px #1c1c1c;left:769.65px;width:300px;text-align:center;">S</div>
<div style="left:907.4px;top:678.1px;width:24.5px;height:13.5px;background:#dadada;border:1px solid #5a5a5a;box-sizing:border-box;"></div>
<svg width="1564" height="960" viewBox="0 0 1564 960">
<circle cx="919.65" cy="684.900" r="3.400" fill="#1c1c1c"/><path d="M917.75 684.600A1.900 1.900 0 0 1 919.65 682.700" stroke="#dadada" stroke-width="1.100" fill="none"/>
</svg>
<div style="left:955.9px;top:496.2px;width:13.7px;height:195.5px;background:#242424;border-radius:2px;"></div>
<div style="left:956.9px;top:594px;width:5.25px;height:96.1px;background:#00f050;"></div>
<div style="left:956.9px;top:553.3px;width:5.25px;height:1.1px;background:#ffc400;"></div>
<div style="left:963.4px;top:593.5px;width:5.25px;height:96.6px;background:#00f050;"></div>
<div style="left:963.4px;top:553.8px;width:5.25px;height:1.1px;background:#ffc400;"></div>
<div style="left:962.4px;top:497.2px;width:0.8px;height:192.9px;background:#5e5e5e;"></div>
<div style="left:956.8px;top:516.9px;width:12px;height:1px;background:#e8e8e8;"></div>
<svg width="1564" height="960" viewBox="0 0 1564 960">
<path d="M950.4 517.2h2.800M950.4 535.5h2.800M950.4 555h2.800M950.4 574.7h2.800M950.4 593.2h2.800M950.4 612.8h2.800M950.4 630h2.800M950.4 644h2.800M950.4 657.2h2.800M950.4 679.2h2.800" stroke="#6e6e6e" stroke-width="1"/>
<path d="M950.4 497.800h2.400M950.4 669.500h2.400M950.4 687.800h2.400" stroke="#8e8e8e" stroke-width="1"/>
</svg>
<div style="top:493.7px;height:16px;line-height:16px;font-size:9.5px;color:#3a3a3a;letter-spacing:0.2px;white-space:nowrap;-webkit-text-stroke:0.1px #3a3a3a;left:973.8px;">6</div>
<div style="top:509.2px;height:16px;line-height:16px;font-size:9.5px;color:#3a3a3a;letter-spacing:0.2px;white-space:nowrap;-webkit-text-stroke:0.1px #3a3a3a;left:973.8px;">0</div>
<div style="top:527.5px;height:16px;line-height:16px;font-size:9.5px;color:#3a3a3a;letter-spacing:0.2px;white-space:nowrap;-webkit-text-stroke:0.1px #3a3a3a;left:973.8px;">6</div>
<div style="top:546.8px;height:16px;line-height:16px;font-size:9.5px;color:#3a3a3a;letter-spacing:0.2px;white-space:nowrap;-webkit-text-stroke:0.1px #3a3a3a;left:973.8px;">12</div>
<div style="top:566.5px;height:16px;line-height:16px;font-size:9.5px;color:#3a3a3a;letter-spacing:0.2px;white-space:nowrap;-webkit-text-stroke:0.1px #3a3a3a;left:973.8px;">18</div>
<div style="top:585.1px;height:16px;line-height:16px;font-size:9.5px;color:#3a3a3a;letter-spacing:0.2px;white-space:nowrap;-webkit-text-stroke:0.1px #3a3a3a;left:973.8px;">24</div>
<div style="top:604.4px;height:16px;line-height:16px;font-size:9.5px;color:#3a3a3a;letter-spacing:0.2px;white-space:nowrap;-webkit-text-stroke:0.1px #3a3a3a;left:973.8px;">30</div>
<div style="top:621.7px;height:16px;line-height:16px;font-size:9.5px;color:#3a3a3a;letter-spacing:0.2px;white-space:nowrap;-webkit-text-stroke:0.1px #3a3a3a;left:973.8px;">36</div>
<div style="top:635.6px;height:16px;line-height:16px;font-size:9.5px;color:#3a3a3a;letter-spacing:0.2px;white-space:nowrap;-webkit-text-stroke:0.1px #3a3a3a;left:973.8px;">42</div>
<div style="top:649.2px;height:16px;line-height:16px;font-size:9.5px;color:#3a3a3a;letter-spacing:0.2px;white-space:nowrap;-webkit-text-stroke:0.1px #3a3a3a;left:973.8px;">48</div>
<div style="top:670.9px;height:16px;line-height:16px;font-size:9.5px;color:#3a3a3a;letter-spacing:0.2px;white-space:nowrap;-webkit-text-stroke:0.1px #3a3a3a;left:973.8px;">60</div>
<svg width="1564" height="960" viewBox="0 0 1564 960">
<polygon points="942.9,510.2 942.9,523.8 954.3,517" fill="#111"/>
</svg>
<div style="left:995.8px;top:463.6px;width:101.2px;height:25.1px;background:#edffad;"></div>
<div style="left:995.8px;top:488.7px;width:101.2px;height:2.1px;background:#848484;"></div>
<div style="left:995.8px;top:698.3px;width:101.2px;height:2.2px;background:#848484;"></div>
<div style="left:995.8px;top:700.5px;width:101.2px;height:6.5px;background:#edffad;"></div>
<div style="top:471.5px;height:16px;line-height:16px;font-size:10.5px;color:#3f4a24;letter-spacing:0.15px;white-space:nowrap;font-weight:bold;left:1000.3px;">Synth Riser</div>
<svg width="1564" height="960" viewBox="0 0 1564 960">
<circle cx="1087.8" cy="479.3" r="6.300" fill="none" stroke="#3f4a24" stroke-width="1.100"/>
<polygon points="1084.3,477.5 1091.3,477.5 1087.8,482.9" fill="#3f4a24"/>
</svg>
<div style="left:1004px;top:496.7px;width:37.5px;height:13px;background:#dedede;border:1px solid #333;box-sizing:border-box;border-radius:7px;"></div>
<div style="top:495.4px;height:16px;line-height:16px;font-size:10.5px;color:#1c1c1c;letter-spacing:0.2px;white-space:nowrap;-webkit-text-stroke:0.25px #1c1c1c;left:872.85px;width:300px;text-align:center;">-47.4</div>
<div style="left:1004px;top:516.2px;width:37.5px;height:13.3px;background:#dedede;border:1px solid #555;box-sizing:border-box;"></div>
<div style="top:515.1px;height:16px;line-height:16px;font-size:10.5px;color:#1c1c1c;letter-spacing:0.2px;white-space:nowrap;-webkit-text-stroke:0.25px #1c1c1c;left:872.85px;width:300px;text-align:center;">-18.0</div>
<svg width="1564" height="960" viewBox="0 0 1564 960">
<path d="M1024.53 601.31A12.95 12.95 0 0 1 1028.97 625.32" stroke="#222" stroke-width="2.300" fill="none"/><path d="M1020.47 601.31A12.95 12.95 0 0 0 1016.02 625.32" stroke="#222" stroke-width="2.300" fill="none"/><path d="M1022.5 600.2V614.8" stroke="#222" stroke-width="2.300"/><polygon points="1018.5,594 1026.5,594 1022.5,598.4" fill="#222"/>
</svg>
<div style="left:1010.6px;top:630.2px;width:24.5px;height:24.5px;background:#ffb901;border:1px solid #8a6a10;box-sizing:border-box;"></div>
<div style="top:634.7px;height:16px;line-height:16px;font-size:13.5px;color:#111;letter-spacing:0px;white-space:nowrap;font-weight:bold;left:872.85px;width:300px;text-align:center;">10</div>
<div style="left:1010.6px;top:659.5px;width:24.5px;height:13.3px;background:#dadada;border:1px solid #5a5a5a;box-sizing:border-box;"></div>
<div style="top:658.3px;height:16px;line-height:16px;font-size:10.5px;color:#1c1c1c;letter-spacing:0px;white-space:nowrap;-webkit-text-stroke:0.25px #1c1c1c;left:872.85px;width:300px;text-align:center;">S</div>
<div style="left:1010.6px;top:678.1px;width:24.5px;height:13.5px;background:#dadada;border:1px solid #5a5a5a;box-sizing:border-box;"></div>
<svg width="1564" height="960" viewBox="0 0 1564 960">
<circle cx="1022.85" cy="684.900" r="3.400" fill="#1c1c1c"/><path d="M1020.95 684.600A1.900 1.900 0 0 1 1022.85 682.700" stroke="#dadada" stroke-width="1.100" fill="none"/>
</svg>
<div style="left:1059.1px;top:496.2px;width:13.7px;height:195.5px;background:#242424;border-radius:2px;"></div>
<div style="left:1060.1px;top:659.8px;width:5.25px;height:4.5px;background:#12b050;"></div>
<div style="left:1060.1px;top:664.3px;width:5.25px;height:25.8px;background:#00f050;"></div>
<div style="left:1060.1px;top:628.4px;width:5.25px;height:1.1px;background:#00d848;"></div>
<div style="left:1066.6px;top:662px;width:5.25px;height:2.3px;background:#12b050;"></div>
<div style="left:1066.6px;top:664.3px;width:5.25px;height:25.8px;background:#00f050;"></div>
<div style="left:1066.6px;top:628px;width:5.25px;height:1.1px;background:#00d848;"></div>
<div style="left:1065.6px;top:497.2px;width:0.8px;height:192.9px;background:#5e5e5e;"></div>
<div style="left:1060px;top:516.9px;width:12px;height:1px;background:#e8e8e8;"></div>
<svg width="1564" height="960" viewBox="0 0 1564 960">
<path d="M1053.6 517.2h2.800M1053.6 535.5h2.800M1053.6 555h2.800M1053.6 574.7h2.800M1053.6 593.2h2.800M1053.6 612.8h2.800M1053.6 630h2.800M1053.6 644h2.800M1053.6 657.2h2.800M1053.6 679.2h2.800" stroke="#6e6e6e" stroke-width="1"/>
<path d="M1053.6 497.800h2.400M1053.6 669.500h2.400M1053.6 687.800h2.400" stroke="#8e8e8e" stroke-width="1"/>
</svg>
<div style="top:493.7px;height:16px;line-height:16px;font-size:9.5px;color:#3a3a3a;letter-spacing:0.2px;white-space:nowrap;-webkit-text-stroke:0.1px #3a3a3a;left:1077px;">6</div>
<div style="top:509.2px;height:16px;line-height:16px;font-size:9.5px;color:#3a3a3a;letter-spacing:0.2px;white-space:nowrap;-webkit-text-stroke:0.1px #3a3a3a;left:1077px;">0</div>
<div style="top:527.5px;height:16px;line-height:16px;font-size:9.5px;color:#3a3a3a;letter-spacing:0.2px;white-space:nowrap;-webkit-text-stroke:0.1px #3a3a3a;left:1077px;">6</div>
<div style="top:546.8px;height:16px;line-height:16px;font-size:9.5px;color:#3a3a3a;letter-spacing:0.2px;white-space:nowrap;-webkit-text-stroke:0.1px #3a3a3a;left:1077px;">12</div>
<div style="top:566.5px;height:16px;line-height:16px;font-size:9.5px;color:#3a3a3a;letter-spacing:0.2px;white-space:nowrap;-webkit-text-stroke:0.1px #3a3a3a;left:1077px;">18</div>
<div style="top:585.1px;height:16px;line-height:16px;font-size:9.5px;color:#3a3a3a;letter-spacing:0.2px;white-space:nowrap;-webkit-text-stroke:0.1px #3a3a3a;left:1077px;">24</div>
<div style="top:604.4px;height:16px;line-height:16px;font-size:9.5px;color:#3a3a3a;letter-spacing:0.2px;white-space:nowrap;-webkit-text-stroke:0.1px #3a3a3a;left:1077px;">30</div>
<div style="top:621.7px;height:16px;line-height:16px;font-size:9.5px;color:#3a3a3a;letter-spacing:0.2px;white-space:nowrap;-webkit-text-stroke:0.1px #3a3a3a;left:1077px;">36</div>
<div style="top:635.6px;height:16px;line-height:16px;font-size:9.5px;color:#3a3a3a;letter-spacing:0.2px;white-space:nowrap;-webkit-text-stroke:0.1px #3a3a3a;left:1077px;">42</div>
<div style="top:649.2px;height:16px;line-height:16px;font-size:9.5px;color:#3a3a3a;letter-spacing:0.2px;white-space:nowrap;-webkit-text-stroke:0.1px #3a3a3a;left:1077px;">48</div>
<div style="top:670.9px;height:16px;line-height:16px;font-size:9.5px;color:#3a3a3a;letter-spacing:0.2px;white-space:nowrap;-webkit-text-stroke:0.1px #3a3a3a;left:1077px;">60</div>
<svg width="1564" height="960" viewBox="0 0 1564 960">
<polygon points="1046.1,567.7 1046.1,581.3 1057.5,574.5" fill="#111"/>
</svg>
<div style="left:1099px;top:463.6px;width:101.2px;height:25.1px;background:#f9f27b;"></div>
<div style="left:1099px;top:488.7px;width:101.2px;height:2.1px;background:#848484;"></div>
<div style="left:1099px;top:698.3px;width:101.2px;height:2.2px;background:#848484;"></div>
<div style="left:1099px;top:700.5px;width:101.2px;height:6.5px;background:#f9f27b;"></div>
<div style="top:471.5px;height:16px;line-height:16px;font-size:10.5px;color:#4a4620;letter-spacing:-0.03px;white-space:nowrap;font-weight:bold;left:1103.5px;">Keys</div>
<div style="left:1107.2px;top:496.7px;width:37.5px;height:13px;background:#dedede;border:1px solid #333;box-sizing:border-box;border-radius:7px;"></div>
<div style="top:495.4px;height:16px;line-height:16px;font-size:10.5px;color:#1c1c1c;letter-spacing:0.2px;white-space:nowrap;-webkit-text-stroke:0.25px #1c1c1c;left:976.05px;width:300px;text-align:center;">-19.4</div>
<div style="left:1107.2px;top:516.2px;width:37.5px;height:13.3px;background:#dedede;border:1px solid #555;box-sizing:border-box;"></div>
<div style="top:515.1px;height:16px;line-height:16px;font-size:10.5px;color:#1c1c1c;letter-spacing:0.2px;white-space:nowrap;-webkit-text-stroke:0.25px #1c1c1c;left:976.05px;width:300px;text-align:center;">-6.6</div>
<svg width="1564" height="960" viewBox="0 0 1564 960">
<path d="M1127.73 601.31A12.95 12.95 0 0 1 1132.17 625.32" stroke="#222" stroke-width="2.300" fill="none"/><path d="M1123.67 601.31A12.95 12.95 0 0 0 1119.23 625.32" stroke="#222" stroke-width="2.300" fill="none"/><path d="M1125.7 600.2V614.8" stroke="#222" stroke-width="2.300"/><polygon points="1121.7,594 1129.7,594 1125.7,598.4" fill="#222"/>
</svg>
<div style="left:1113.8px;top:630.2px;width:24.5px;height:24.5px;background:#ffb901;border:1px solid #8a6a10;box-sizing:border-box;"></div>
<div style="top:634.7px;height:16px;line-height:16px;font-size:13.5px;color:#111;letter-spacing:0px;white-space:nowrap;font-weight:bold;left:976.05px;width:300px;text-align:center;">11</div>
<div style="left:1113.8px;top:659.5px;width:24.5px;height:13.3px;background:#dadada;border:1px solid #5a5a5a;box-sizing:border-box;"></div>
<div style="top:658.3px;height:16px;line-height:16px;font-size:10.5px;color:#1c1c1c;letter-spacing:0px;white-space:nowrap;-webkit-text-stroke:0.25px #1c1c1c;left:976.05px;width:300px;text-align:center;">S</div>
<div style="left:1113.8px;top:678.1px;width:24.5px;height:13.5px;background:#dadada;border:1px solid #5a5a5a;box-sizing:border-box;"></div>
<svg width="1564" height="960" viewBox="0 0 1564 960">
<circle cx="1126.05" cy="684.900" r="3.400" fill="#1c1c1c"/><path d="M1124.15 684.600A1.900 1.900 0 0 1 1126.05 682.700" stroke="#dadada" stroke-width="1.100" fill="none"/>
</svg>
<div style="left:1162.3px;top:496.2px;width:13.7px;height:195.5px;background:#242424;border-radius:2px;"></div>
<div style="left:1163.3px;top:596.7px;width:5.25px;height:17.1px;background:#12b050;"></div>
<div style="left:1163.3px;top:613.8px;width:5.25px;height:76.3px;background:#00f050;"></div>
<div style="left:1163.3px;top:588px;width:5.25px;height:1.1px;background:#00d848;"></div>
<div style="left:1169.8px;top:601px;width:5.25px;height:8.3px;background:#12b050;"></div>
<div style="left:1169.8px;top:609.3px;width:5.25px;height:80.8px;background:#00f050;"></div>
<div style="left:1169.8px;top:579.3px;width:5.25px;height:1.1px;background:#00d848;"></div>
<div style="left:1168.8px;top:497.2px;width:0.8px;height:192.9px;background:#5e5e5e;"></div>
<div style="left:1163.2px;top:516.9px;width:12px;height:1px;background:#e8e8e8;"></div>
<svg width="1564" height="960" viewBox="0 0 1564 960">
<path d="M1156.8 517.2h2.800M1156.8 535.5h2.800M1156.8 555h2.800M1156.8 574.7h2.800M1156.8 593.2h2.800M1156.8 612.8h2.800M1156.8 630h2.800M1156.8 644h2.800M1156.8 657.2h2.800M1156.8 679.2h2.800" stroke="#6e6e6e" stroke-width="1"/>
<path d="M1156.8 497.800h2.400M1156.8 669.500h2.400M1156.8 687.800h2.400" stroke="#8e8e8e" stroke-width="1"/>
</svg>
<div style="top:493.7px;height:16px;line-height:16px;font-size:9.5px;color:#3a3a3a;letter-spacing:0.2px;white-space:nowrap;-webkit-text-stroke:0.1px #3a3a3a;left:1180.2px;">6</div>
<div style="top:509.2px;height:16px;line-height:16px;font-size:9.5px;color:#3a3a3a;letter-spacing:0.2px;white-space:nowrap;-webkit-text-stroke:0.1px #3a3a3a;left:1180.2px;">0</div>
<div style="top:527.5px;height:16px;line-height:16px;font-size:9.5px;color:#3a3a3a;letter-spacing:0.2px;white-space:nowrap;-webkit-text-stroke:0.1px #3a3a3a;left:1180.2px;">6</div>
<div style="top:546.8px;height:16px;line-height:16px;font-size:9.5px;color:#3a3a3a;letter-spacing:0.2px;white-space:nowrap;-webkit-text-stroke:0.1px #3a3a3a;left:1180.2px;">12</div>
<div style="top:566.5px;height:16px;line-height:16px;font-size:9.5px;color:#3a3a3a;letter-spacing:0.2px;white-space:nowrap;-webkit-text-stroke:0.1px #3a3a3a;left:1180.2px;">18</div>
<div style="top:585.1px;height:16px;line-height:16px;font-size:9.5px;color:#3a3a3a;letter-spacing:0.2px;white-space:nowrap;-webkit-text-stroke:0.1px #3a3a3a;left:1180.2px;">24</div>
<div style="top:604.4px;height:16px;line-height:16px;font-size:9.5px;color:#3a3a3a;letter-spacing:0.2px;white-space:nowrap;-webkit-text-stroke:0.1px #3a3a3a;left:1180.2px;">30</div>
<div style="top:621.7px;height:16px;line-height:16px;font-size:9.5px;color:#3a3a3a;letter-spacing:0.2px;white-space:nowrap;-webkit-text-stroke:0.1px #3a3a3a;left:1180.2px;">36</div>
<div style="top:635.6px;height:16px;line-height:16px;font-size:9.5px;color:#3a3a3a;letter-spacing:0.2px;white-space:nowrap;-webkit-text-stroke:0.1px #3a3a3a;left:1180.2px;">42</div>
<div style="top:649.2px;height:16px;line-height:16px;font-size:9.5px;color:#3a3a3a;letter-spacing:0.2px;white-space:nowrap;-webkit-text-stroke:0.1px #3a3a3a;left:1180.2px;">48</div>
<div style="top:670.9px;height:16px;line-height:16px;font-size:9.5px;color:#3a3a3a;letter-spacing:0.2px;white-space:nowrap;-webkit-text-stroke:0.1px #3a3a3a;left:1180.2px;">60</div>
<svg width="1564" height="960" viewBox="0 0 1564 960">
<polygon points="1149.3,531.2 1149.3,544.8 1160.7,538" fill="#111"/>
</svg>
<div style="left:1202.2px;top:463.6px;width:101.2px;height:25.1px;background:#ffa374;"></div>
<div style="left:1202.2px;top:488.7px;width:101.2px;height:2.1px;background:#848484;"></div>
<div style="left:1202.2px;top:698.3px;width:101.2px;height:2.2px;background:#848484;"></div>
<div style="left:1202.2px;top:700.5px;width:101.2px;height:6.5px;background:#ffa374;"></div>
<div style="top:471.5px;height:16px;line-height:16px;font-size:10.5px;color:#4a2a1c;letter-spacing:-0.03px;white-space:nowrap;font-weight:bold;left:1206.7px;">Pads</div>
<svg width="1564" height="960" viewBox="0 0 1564 960">
<circle cx="1294.2" cy="479.3" r="6.300" fill="none" stroke="#4a2a1c" stroke-width="1.100"/>
<path d="M1290.9 476.7h6.600M1292.7 479.3h4.8M1292.7 481.9h4.8" stroke="#4a2a1c" stroke-width="1.100"/>
</svg>
<div style="left:1210.4px;top:496.7px;width:37.5px;height:13px;background:#dedede;border:1px solid #333;box-sizing:border-box;border-radius:7px;"></div>
<div style="top:495.4px;height:16px;line-height:16px;font-size:10.5px;color:#1c1c1c;letter-spacing:0.2px;white-space:nowrap;-webkit-text-stroke:0.25px #1c1c1c;left:1079.25px;width:300px;text-align:center;">-5.84</div>
<div style="left:1210.4px;top:516.2px;width:37.5px;height:13.3px;background:#dedede;border:1px solid #555;box-sizing:border-box;"></div>
<div style="top:515.1px;height:16px;line-height:16px;font-size:10.5px;color:#1c1c1c;letter-spacing:0.2px;white-space:nowrap;-webkit-text-stroke:0.25px #1c1c1c;left:1079.25px;width:300px;text-align:center;">0</div>
<svg width="1564" height="960" viewBox="0 0 1564 960">
<path d="M1230.93 601.31A12.95 12.95 0 0 1 1235.38 625.32" stroke="#222" stroke-width="2.300" fill="none"/><path d="M1226.87 601.31A12.95 12.95 0 0 0 1222.43 625.32" stroke="#222" stroke-width="2.300" fill="none"/><path d="M1228.9 600.2V614.8" stroke="#222" stroke-width="2.300"/><polygon points="1224.9,594 1232.9,594 1228.9,598.4" fill="#222"/>
</svg>
<div style="left:1217px;top:630.2px;width:24.5px;height:24.5px;background:#ffb901;border:1px solid #8a6a10;box-sizing:border-box;"></div>
<div style="top:634.7px;height:16px;line-height:16px;font-size:13.5px;color:#111;letter-spacing:0px;white-space:nowrap;font-weight:bold;left:1079.25px;width:300px;text-align:center;">12</div>
<div style="left:1217px;top:659.5px;width:24.5px;height:13.3px;background:#dadada;border:1px solid #5a5a5a;box-sizing:border-box;"></div>
<div style="top:658.3px;height:16px;line-height:16px;font-size:10.5px;color:#1c1c1c;letter-spacing:0px;white-space:nowrap;-webkit-text-stroke:0.25px #1c1c1c;left:1079.25px;width:300px;text-align:center;">S</div>
<div style="left:1265.5px;top:496.2px;width:13.7px;height:195.5px;background:#242424;border-radius:2px;"></div>
<div style="left:1266.5px;top:550.6px;width:5.25px;height:139.5px;background:linear-gradient(#9a981c 0px,#9a981c 11.2px,#86f52a 11.9px,#7ef52e 20.2px,#00f050 23.2px);"></div>
<div style="left:1266.5px;top:529.4px;width:5.25px;height:1.1px;background:#e07800;"></div>
<div style="left:1273px;top:543.8px;width:5.25px;height:146.3px;background:linear-gradient(#9a981c 0px,#9a981c 18px,#86f52a 18.7px,#7ef52e 27px,#00f050 30px);"></div>
<div style="left:1273px;top:529.4px;width:5.25px;height:1.1px;background:#e07800;"></div>
<div style="left:1272px;top:497.2px;width:0.8px;height:192.9px;background:#5e5e5e;"></div>
<div style="left:1266.4px;top:516.9px;width:12px;height:1px;background:#e8e8e8;"></div>
<svg width="1564" height="960" viewBox="0 0 1564 960">
<path d="M1260 517.2h2.800M1260 535.5h2.800M1260 555h2.800M1260 574.7h2.800M1260 593.2h2.800M1260 612.8h2.800M1260 630h2.800M1260 644h2.800M1260 657.2h2.800M1260 679.2h2.800" stroke="#6e6e6e" stroke-width="1"/>
<path d="M1260 497.800h2.400M1260 669.500h2.400M1260 687.800h2.400" stroke="#8e8e8e" stroke-width="1"/>
</svg>
<div style="top:493.7px;height:16px;line-height:16px;font-size:9.5px;color:#3a3a3a;letter-spacing:0.2px;white-space:nowrap;-webkit-text-stroke:0.1px #3a3a3a;left:1283.4px;">6</div>
<div style="top:509.2px;height:16px;line-height:16px;font-size:9.5px;color:#3a3a3a;letter-spacing:0.2px;white-space:nowrap;-webkit-text-stroke:0.1px #3a3a3a;left:1283.4px;">0</div>
<div style="top:527.5px;height:16px;line-height:16px;font-size:9.5px;color:#3a3a3a;letter-spacing:0.2px;white-space:nowrap;-webkit-text-stroke:0.1px #3a3a3a;left:1283.4px;">6</div>
<div style="top:546.8px;height:16px;line-height:16px;font-size:9.5px;color:#3a3a3a;letter-spacing:0.2px;white-space:nowrap;-webkit-text-stroke:0.1px #3a3a3a;left:1283.4px;">12</div>
<div style="top:566.5px;height:16px;line-height:16px;font-size:9.5px;color:#3a3a3a;letter-spacing:0.2px;white-space:nowrap;-webkit-text-stroke:0.1px #3a3a3a;left:1283.4px;">18</div>
<div style="top:585.1px;height:16px;line-height:16px;font-size:9.5px;color:#3a3a3a;letter-spacing:0.2px;white-space:nowrap;-webkit-text-stroke:0.1px #3a3a3a;left:1283.4px;">24</div>
<div style="top:604.4px;height:16px;line-height:16px;font-size:9.5px;color:#3a3a3a;letter-spacing:0.2px;white-space:nowrap;-webkit-text-stroke:0.1px #3a3a3a;left:1283.4px;">30</div>
<div style="top:621.7px;height:16px;line-height:16px;font-size:9.5px;color:#3a3a3a;letter-spacing:0.2px;white-space:nowrap;-webkit-text-stroke:0.1px #3a3a3a;left:1283.4px;">36</div>
<div style="top:635.6px;height:16px;line-height:16px;font-size:9.5px;color:#3a3a3a;letter-spacing:0.2px;white-space:nowrap;-webkit-text-stroke:0.1px #3a3a3a;left:1283.4px;">42</div>
<div style="top:649.2px;height:16px;line-height:16px;font-size:9.5px;color:#3a3a3a;letter-spacing:0.2px;white-space:nowrap;-webkit-text-stroke:0.1px #3a3a3a;left:1283.4px;">48</div>
<div style="top:670.9px;height:16px;line-height:16px;font-size:9.5px;color:#3a3a3a;letter-spacing:0.2px;white-space:nowrap;-webkit-text-stroke:0.1px #3a3a3a;left:1283.4px;">60</div>
<svg width="1564" height="960" viewBox="0 0 1564 960">
<polygon points="1252.5,510.2 1252.5,523.8 1263.9,517" fill="#111"/>
</svg>
<div style="left:1305.4px;top:490.8px;width:101.2px;height:207.5px;background:#bdbdbd;"></div>
<div style="left:1303.4px;top:463.6px;width:105.2px;height:5px;background:#ffa374;"></div>
<div style="left:1303.4px;top:468.6px;width:105.2px;height:1.6px;background:#7c7c7c;"></div>
<div style="left:1305.4px;top:470.2px;width:101.2px;height:18.5px;background:#ffa374;"></div>
<div style="left:1305.4px;top:488.7px;width:101.2px;height:2.1px;background:#848484;"></div>
<div style="left:1305.4px;top:698.3px;width:101.2px;height:2.2px;background:#848484;"></div>
<div style="left:1305.4px;top:700.5px;width:101.2px;height:6.5px;background:#ffa374;"></div>
<div style="top:471.5px;height:16px;line-height:16px;font-size:10.5px;color:#4a2a1c;letter-spacing:0.36px;white-space:nowrap;font-weight:bold;left:1309.9px;">Drift Pad</div>
<div style="left:1313.6px;top:496.7px;width:37.5px;height:13px;background:#dedede;border:1px solid #333;box-sizing:border-box;border-radius:7px;"></div>
<div style="top:495.4px;height:16px;line-height:16px;font-size:10.5px;color:#1c1c1c;letter-spacing:0.2px;white-space:nowrap;-webkit-text-stroke:0.25px #1c1c1c;left:1182.45px;width:300px;text-align:center;">-5.83</div>
<div style="left:1313.6px;top:516.2px;width:37.5px;height:13.3px;background:#dedede;border:1px solid #555;box-sizing:border-box;"></div>
<div style="top:515.1px;height:16px;line-height:16px;font-size:10.5px;color:#1c1c1c;letter-spacing:0.2px;white-space:nowrap;-webkit-text-stroke:0.25px #1c1c1c;left:1182.45px;width:300px;text-align:center;">0</div>
<svg width="1564" height="960" viewBox="0 0 1564 960">
<path d="M1334.13 601.31A12.95 12.95 0 0 1 1338.58 625.32" stroke="#222" stroke-width="2.300" fill="none"/><path d="M1330.07 601.31A12.95 12.95 0 0 0 1325.63 625.32" stroke="#222" stroke-width="2.300" fill="none"/><path d="M1332.1 600.2V614.8" stroke="#222" stroke-width="2.300"/><polygon points="1328.1,594 1336.1,594 1332.1,598.4" fill="#222"/>
</svg>
<div style="left:1320.2px;top:630.2px;width:24.5px;height:24.5px;background:#ffb901;border:1px solid #8a6a10;box-sizing:border-box;"></div>
<div style="top:634.7px;height:16px;line-height:16px;font-size:13.5px;color:#111;letter-spacing:0px;white-space:nowrap;font-weight:bold;left:1182.45px;width:300px;text-align:center;">13</div>
<div style="left:1320.2px;top:659.5px;width:24.5px;height:13.3px;background:#dadada;border:1px solid #5a5a5a;box-sizing:border-box;"></div>
<div style="top:658.3px;height:16px;line-height:16px;font-size:10.5px;color:#1c1c1c;letter-spacing:0px;white-space:nowrap;-webkit-text-stroke:0.25px #1c1c1c;left:1182.45px;width:300px;text-align:center;">S</div>
<div style="left:1320.2px;top:678.1px;width:24.5px;height:13.5px;background:#dadada;border:1px solid #5a5a5a;box-sizing:border-box;"></div>
<svg width="1564" height="960" viewBox="0 0 1564 960">
<circle cx="1332.45" cy="684.900" r="3.400" fill="#1c1c1c"/><path d="M1330.55 684.600A1.900 1.900 0 0 1 1332.45 682.700" stroke="#dadada" stroke-width="1.100" fill="none"/>
</svg>
<div style="left:1368.7px;top:496.2px;width:13.7px;height:195.5px;background:#242424;border-radius:2px;"></div>
<div style="left:1369.7px;top:550.6px;width:5.25px;height:139.5px;background:linear-gradient(#9a981c 0px,#9a981c 11.2px,#86f52a 11.9px,#7ef52e 20.2px,#00f050 23.2px);"></div>
<div style="left:1369.7px;top:530px;width:5.25px;height:1.1px;background:#e07800;"></div>
<div style="left:1376.2px;top:543.8px;width:5.25px;height:146.3px;background:linear-gradient(#9a981c 0px,#9a981c 18px,#86f52a 18.7px,#7ef52e 27px,#00f050 30px);"></div>
<div style="left:1376.2px;top:528.7px;width:5.25px;height:1.1px;background:#e07800;"></div>
<div style="left:1375.2px;top:497.2px;width:0.8px;height:192.9px;background:#5e5e5e;"></div>
<div style="left:1369.6px;top:516.9px;width:12px;height:1px;background:#e8e8e8;"></div>
<svg width="1564" height="960" viewBox="0 0 1564 960">
<path d="M1363.2 517.2h2.800M1363.2 535.5h2.800M1363.2 555h2.800M1363.2 574.7h2.800M1363.2 593.2h2.800M1363.2 612.8h2.800M1363.2 630h2.800M1363.2 644h2.800M1363.2 657.2h2.800M1363.2 679.2h2.800" stroke="#6e6e6e" stroke-width="1"/>
<path d="M1363.2 497.800h2.400M1363.2 669.500h2.400M1363.2 687.800h2.400" stroke="#8e8e8e" stroke-width="1"/>
</svg>
<div style="top:493.7px;height:16px;line-height:16px;font-size:9.5px;color:#3a3a3a;letter-spacing:0.2px;white-space:nowrap;-webkit-text-stroke:0.1px #3a3a3a;left:1386.6px;">6</div>
<div style="top:509.2px;height:16px;line-height:16px;font-size:9.5px;color:#3a3a3a;letter-spacing:0.2px;white-space:nowrap;-webkit-text-stroke:0.1px #3a3a3a;left:1386.6px;">0</div>
<div style="top:527.5px;height:16px;line-height:16px;font-size:9.5px;color:#3a3a3a;letter-spacing:0.2px;white-space:nowrap;-webkit-text-stroke:0.1px #3a3a3a;left:1386.6px;">6</div>
<div style="top:546.8px;height:16px;line-height:16px;font-size:9.5px;color:#3a3a3a;letter-spacing:0.2px;white-space:nowrap;-webkit-text-stroke:0.1px #3a3a3a;left:1386.6px;">12</div>
<div style="top:566.5px;height:16px;line-height:16px;font-size:9.5px;color:#3a3a3a;letter-spacing:0.2px;white-space:nowrap;-webkit-text-stroke:0.1px #3a3a3a;left:1386.6px;">18</div>
<div style="top:585.1px;height:16px;line-height:16px;font-size:9.5px;color:#3a3a3a;letter-spacing:0.2px;white-space:nowrap;-webkit-text-stroke:0.1px #3a3a3a;left:1386.6px;">24</div>
<div style="top:604.4px;height:16px;line-height:16px;font-size:9.5px;color:#3a3a3a;letter-spacing:0.2px;white-space:nowrap;-webkit-text-stroke:0.1px #3a3a3a;left:1386.6px;">30</div>
<div style="top:621.7px;height:16px;line-height:16px;font-size:9.5px;color:#3a3a3a;letter-spacing:0.2px;white-space:nowrap;-webkit-text-stroke:0.1px #3a3a3a;left:1386.6px;">36</div>
<div style="top:635.6px;height:16px;line-height:16px;font-size:9.5px;color:#3a3a3a;letter-spacing:0.2px;white-space:nowrap;-webkit-text-stroke:0.1px #3a3a3a;left:1386.6px;">42</div>
<div style="top:649.2px;height:16px;line-height:16px;font-size:9.5px;color:#3a3a3a;letter-spacing:0.2px;white-space:nowrap;-webkit-text-stroke:0.1px #3a3a3a;left:1386.6px;">48</div>
<div style="top:670.9px;height:16px;line-height:16px;font-size:9.5px;color:#3a3a3a;letter-spacing:0.2px;white-space:nowrap;-webkit-text-stroke:0.1px #3a3a3a;left:1386.6px;">60</div>
<svg width="1564" height="960" viewBox="0 0 1564 960">
<polygon points="1355.7,510.2 1355.7,523.8 1367.1,517" fill="#111"/>
</svg>
<div style="left:1406.6px;top:463.6px;width:105.2px;height:5px;background:#ffa374;"></div>
<div style="left:1406.6px;top:468.6px;width:105.2px;height:1.6px;background:#7c7c7c;"></div>
<div style="left:1408.6px;top:470.2px;width:101.2px;height:18.5px;background:#ffa374;"></div>
<div style="left:1408.6px;top:488.7px;width:101.2px;height:2.1px;background:#848484;"></div>
<div style="left:1408.6px;top:698.3px;width:101.2px;height:2.2px;background:#848484;"></div>
<div style="left:1408.6px;top:700.5px;width:101.2px;height:6.5px;background:#ffa374;"></div>
<div style="top:471.5px;height:16px;line-height:16px;font-size:10.5px;color:#4a2a1c;letter-spacing:0.01px;white-space:nowrap;font-weight:bold;left:1413.1px;">Rain Pad</div>
<div style="left:1416.8px;top:496.7px;width:37.5px;height:13px;background:#dedede;border:1px solid #333;box-sizing:border-box;border-radius:7px;"></div>
<div style="top:495.4px;height:16px;line-height:16px;font-size:10.5px;color:#1c1c1c;letter-spacing:0.2px;white-space:nowrap;-webkit-text-stroke:0.25px #1c1c1c;left:1285.65px;width:300px;text-align:center;">-13.1</div>
<div style="left:1416.8px;top:516.2px;width:37.5px;height:13.3px;background:#dedede;border:1px solid #555;box-sizing:border-box;"></div>
<div style="top:515.1px;height:16px;line-height:16px;font-size:10.5px;color:#1c1c1c;letter-spacing:0.2px;white-space:nowrap;-webkit-text-stroke:0.25px #1c1c1c;left:1285.65px;width:300px;text-align:center;">0</div>
<svg width="1564" height="960" viewBox="0 0 1564 960">
<path d="M1437.33 601.31A12.95 12.95 0 0 1 1441.77 625.32" stroke="#222" stroke-width="2.300" fill="none"/><path d="M1433.27 601.31A12.95 12.95 0 0 0 1428.83 625.32" stroke="#222" stroke-width="2.300" fill="none"/><path d="M1435.3 600.2V614.8" stroke="#222" stroke-width="2.300"/><polygon points="1431.3,594 1439.3,594 1435.3,598.4" fill="#222"/>
</svg>
<div style="left:1423.4px;top:630.2px;width:24.5px;height:24.5px;background:#ffb901;border:1px solid #8a6a10;box-sizing:border-box;"></div>
<div style="top:634.7px;height:16px;line-height:16px;font-size:13.5px;color:#111;letter-spacing:0px;white-space:nowrap;font-weight:bold;left:1285.65px;width:300px;text-align:center;">14</div>
<div style="left:1423.4px;top:659.5px;width:24.5px;height:13.3px;background:#dadada;border:1px solid #5a5a5a;box-sizing:border-box;"></div>
<div style="top:658.3px;height:16px;line-height:16px;font-size:10.5px;color:#1c1c1c;letter-spacing:0px;white-space:nowrap;-webkit-text-stroke:0.25px #1c1c1c;left:1285.65px;width:300px;text-align:center;">S</div>
<div style="left:1423.4px;top:678.1px;width:24.5px;height:13.5px;background:#dadada;border:1px solid #5a5a5a;box-sizing:border-box;"></div>
<svg width="1564" height="960" viewBox="0 0 1564 960">
<circle cx="1435.65" cy="684.900" r="3.400" fill="#1c1c1c"/><path d="M1433.75 684.600A1.900 1.900 0 0 1 1435.65 682.700" stroke="#dadada" stroke-width="1.100" fill="none"/>
</svg>
<div style="left:581.2px;top:463.6px;width:2px;height:243.4px;background:#848484;"></div>
<div style="left:684.4px;top:463.6px;width:2px;height:243.4px;background:#848484;"></div>
<div style="left:787.6px;top:463.6px;width:2px;height:243.4px;background:#848484;"></div>
<div style="left:890.8px;top:463.6px;width:2px;height:243.4px;background:#848484;"></div>
<div style="left:994px;top:463.6px;width:2px;height:243.4px;background:#848484;"></div>
<div style="left:1097.2px;top:463.6px;width:2px;height:243.4px;background:#848484;"></div>
<div style="left:1200.4px;top:463.6px;width:2px;height:243.4px;background:#848484;"></div>
<div style="left:1303.6px;top:468.6px;width:2px;height:238.4px;background:#7c7c7c;"></div>
<div style="left:1406.8px;top:470.2px;width:2px;height:236.8px;background:#848484;"></div>
<div style="left:1510px;top:463.6px;width:2px;height:243.4px;background:#848484;"></div>
</div></div>
<div style="left:1444px;top:460.8px;width:3px;height:246.2px;background:#7c7c7c;"></div>
<div style="left:1447px;top:463.6px;width:107px;height:25.1px;background:#ffffff;"></div>
<div style="left:1447px;top:488.7px;width:107px;height:2.1px;background:#848484;"></div>
<div style="left:1447px;top:698.3px;width:107px;height:2.2px;background:#848484;"></div>
<div style="left:1447px;top:700.5px;width:107px;height:6.5px;background:#ffffff;border-radius:0 0 4px 0;"></div>
<div style="top:471.5px;height:16px;line-height:16px;font-size:10.5px;color:#3a3a3a;letter-spacing:0.27px;white-space:nowrap;font-weight:bold;left:1451.5px;">Main</div>
<div style="left:1457.8px;top:496.7px;width:37.5px;height:13px;background:#dedede;border:1px solid #333;box-sizing:border-box;border-radius:7px;"></div>
<div style="top:495.4px;height:16px;line-height:16px;font-size:10.5px;color:#1c1c1c;letter-spacing:0.2px;white-space:nowrap;-webkit-text-stroke:0.25px #1c1c1c;left:1326.65px;width:300px;text-align:center;">-0.30</div>
<div style="left:1457.8px;top:516.2px;width:37.5px;height:13.3px;background:#dedede;border:1px solid #555;box-sizing:border-box;"></div>
<div style="top:515.1px;height:16px;line-height:16px;font-size:10.5px;color:#1c1c1c;letter-spacing:0.2px;white-space:nowrap;-webkit-text-stroke:0.25px #1c1c1c;left:1326.65px;width:300px;text-align:center;">0</div>
<svg width="1564" height="960" viewBox="0 0 1564 960">
<path d="M1478.33 601.31A12.95 12.95 0 0 1 1482.77 625.32" stroke="#222" stroke-width="2.300" fill="none"/><path d="M1474.27 601.31A12.95 12.95 0 0 0 1469.83 625.32" stroke="#222" stroke-width="2.300" fill="none"/><path d="M1476.3 600.2V614.8" stroke="#222" stroke-width="2.300"/><polygon points="1472.3,594 1480.3,594 1476.3,598.4" fill="#222"/>
</svg>
<div style="left:1513.1px;top:496.2px;width:13.7px;height:195.5px;background:#242424;border-radius:2px;"></div>
<div style="left:1514.1px;top:517.5px;width:5.25px;height:172.6px;background:linear-gradient(#c06a1a 0px,#cc7e1c 22.5px,#ffc800 25.5px,#f5d000 38.5px,#9af520 42.5px,#7ef52e 52.5px,#00f050 56.5px);"></div>
<div style="left:1514.1px;top:517.5px;width:5.25px;height:1.1px;background:#e03020;"></div>
<div style="left:1520.6px;top:521.6px;width:5.25px;height:168.5px;background:linear-gradient(#c06a1a 0px,#cc7e1c 18.4px,#ffc800 21.4px,#f5d000 34.4px,#9af520 38.4px,#7ef52e 48.4px,#00f050 52.4px);"></div>
<div style="left:1520.6px;top:517.5px;width:5.25px;height:1.1px;background:#e03020;"></div>
<div style="left:1519.6px;top:497.2px;width:0.8px;height:192.9px;background:#5e5e5e;"></div>
<div style="left:1514px;top:516.9px;width:12px;height:1px;background:#e8e8e8;"></div>
<svg width="1564" height="960" viewBox="0 0 1564 960">
<path d="M1507.6 517.2h2.800M1507.6 535.5h2.800M1507.6 555h2.800M1507.6 574.7h2.800M1507.6 593.2h2.800M1507.6 612.8h2.800M1507.6 630h2.800M1507.6 644h2.800M1507.6 657.2h2.800M1507.6 679.2h2.800" stroke="#6e6e6e" stroke-width="1"/>
<path d="M1507.6 497.800h2.400M1507.6 669.500h2.400M1507.6 687.800h2.400" stroke="#8e8e8e" stroke-width="1"/>
</svg>
<div style="top:493.7px;height:16px;line-height:16px;font-size:9.5px;color:#3a3a3a;letter-spacing:0.2px;white-space:nowrap;-webkit-text-stroke:0.1px #3a3a3a;left:1531px;">6</div>
<div style="top:509.2px;height:16px;line-height:16px;font-size:9.5px;color:#3a3a3a;letter-spacing:0.2px;white-space:nowrap;-webkit-text-stroke:0.1px #3a3a3a;left:1531px;">0</div>
<div style="top:527.5px;height:16px;line-height:16px;font-size:9.5px;color:#3a3a3a;letter-spacing:0.2px;white-space:nowrap;-webkit-text-stroke:0.1px #3a3a3a;left:1531px;">6</div>
<div style="top:546.8px;height:16px;line-height:16px;font-size:9.5px;color:#3a3a3a;letter-spacing:0.2px;white-space:nowrap;-webkit-text-stroke:0.1px #3a3a3a;left:1531px;">12</div>
<div style="top:566.5px;height:16px;line-height:16px;font-size:9.5px;color:#3a3a3a;letter-spacing:0.2px;white-space:nowrap;-webkit-text-stroke:0.1px #3a3a3a;left:1531px;">18</div>
<div style="top:585.1px;height:16px;line-height:16px;font-size:9.5px;color:#3a3a3a;letter-spacing:0.2px;white-space:nowrap;-webkit-text-stroke:0.1px #3a3a3a;left:1531px;">24</div>
<div style="top:604.4px;height:16px;line-height:16px;font-size:9.5px;color:#3a3a3a;letter-spacing:0.2px;white-space:nowrap;-webkit-text-stroke:0.1px #3a3a3a;left:1531px;">30</div>
<div style="top:621.7px;height:16px;line-height:16px;font-size:9.5px;color:#3a3a3a;letter-spacing:0.2px;white-space:nowrap;-webkit-text-stroke:0.1px #3a3a3a;left:1531px;">36</div>
<div style="top:635.6px;height:16px;line-height:16px;font-size:9.5px;color:#3a3a3a;letter-spacing:0.2px;white-space:nowrap;-webkit-text-stroke:0.1px #3a3a3a;left:1531px;">42</div>
<div style="top:649.2px;height:16px;line-height:16px;font-size:9.5px;color:#3a3a3a;letter-spacing:0.2px;white-space:nowrap;-webkit-text-stroke:0.1px #3a3a3a;left:1531px;">48</div>
<div style="top:670.9px;height:16px;line-height:16px;font-size:9.5px;color:#3a3a3a;letter-spacing:0.2px;white-space:nowrap;-webkit-text-stroke:0.1px #3a3a3a;left:1531px;">60</div>
<svg width="1564" height="960" viewBox="0 0 1564 960">
<polygon points="1500.1,510.2 1500.1,523.8 1511.5,517" fill="#111"/>
</svg>
<div style="left:1463px;top:640.6px;width:26.9px;height:14px;background:#f2f2f2;border:1px solid #444;box-sizing:border-box;"></div>
<div style="top:639.9px;height:16px;line-height:16px;font-size:10.5px;color:#1c1c1c;letter-spacing:0.12px;white-space:nowrap;-webkit-text-stroke:0.25px #1c1c1c;left:1326.51px;width:300px;text-align:center;">Solo</div>
<svg width="1564" height="960" viewBox="0 0 1564 960">
<path d="M1469.95 685.34A13.1 13.1 0 1 1 1489.4 676.27" stroke="#1e90ff" stroke-width="2.200" fill="none"/><path d="M1488.56 679.12A13.1 13.1 0 0 1 1483.63 684.99" stroke="#222" stroke-width="2.200" fill="none"/><path d="M1476.300 673.500L1490.200 676.800" stroke="#222" stroke-width="2.200"/><path d="M1472.800 686.500v-2.300a3.700 3.700 0 0 1 7.400 0v2.300" fill="none" stroke="#3a3a3a" stroke-width="1.300"/><rect x="1471.800" y="684.600" width="2.200" height="3.800" rx="0.900" fill="#3a3a3a"/><rect x="1479" y="684.600" width="2.200" height="3.800" rx="0.900" fill="#3a3a3a"/>
</svg>
<div style="left:9.8px;top:717px;width:266.8px;height:203.5px;background:#a5a5a5;border-radius:4px;"></div>
<div style="left:9.8px;top:717px;width:266.8px;height:18.4px;background:#bdbdbd;border-radius:4px 4px 0 0;"></div>
<svg width="1564" height="960" viewBox="0 0 1564 960">
<circle cx="19.9" cy="726" r="6.300" fill="#ffb901" stroke="#3a3000" stroke-width="1"/>
</svg>
<div style="top:718px;height:16px;line-height:16px;font-size:10.5px;color:#1c1c1c;letter-spacing:0.21px;white-space:nowrap;font-weight:bold;left:31.6px;">Scale</div>
<div style="left:225px;top:719.1px;width:13.8px;height:13.7px;background:#bf9aff;border:1px solid #444;box-sizing:border-box;"></div>
<div style="top:718.6px;height:16px;line-height:16px;font-size:11px;color:#1c1c1c;letter-spacing:0px;white-space:nowrap;-webkit-text-stroke:0.4px #1c1c1c;left:226.7px;">♭</div>
<div style="top:715.7px;height:16px;line-height:16px;font-size:8.5px;color:#1c1c1c;letter-spacing:0px;white-space:nowrap;font-weight:bold;left:231.3px;">#</div>
<svg width="1564" height="960" viewBox="0 0 1564 960">
<circle cx="249.1" cy="726" r="6.500" fill="#d6d6d6" stroke="#333" stroke-width="1"/><path d="M246.91 723.4A3.4 3.4 0 0 1 252.45 725.41" stroke="#1c1c1c" stroke-width="1.500" fill="none"/><path d="M251.29 728.6A3.4 3.4 0 0 1 245.75 726.59" stroke="#1c1c1c" stroke-width="1.500" fill="none"/><polygon points="254.60,725.40 250.40,725.40 252.50,728.00" fill="#1c1c1c"/><polygon points="247.80,726.60 243.60,726.60 245.70,724.00" fill="#1c1c1c"/>
<circle cx="266.300" cy="726" r="6.500" fill="#d6d6d6" stroke="#333" stroke-width="1"/><rect x="262.600" y="722.400" width="7.400" height="7.400" rx="0.800" fill="#1c1c1c"/><rect x="264" y="722.400" width="3.600" height="2.600" fill="#d6d6d6"/>
</svg>
<div style="left:14px;top:739.5px;width:164px;height:176.6px;background:#222222;border-radius:2px;"></div>
<svg width="1564" height="960" viewBox="0 0 1564 960">
<rect x="31.52" y="743.8" width="11.800" height="11.900" fill="#5c5c5c"/><rect x="57.56" y="743.8" width="11.800" height="11.900" fill="#5c5c5c"/><rect x="70.58" y="743.8" width="11.800" height="11.900" fill="#5c5c5c"/><rect x="96.62" y="743.8" width="11.800" height="11.900" fill="#5c5c5c"/><rect x="122.66" y="743.8" width="11.800" height="11.900" fill="#5c5c5c"/><rect x="148.7" y="743.8" width="11.800" height="11.900" fill="#5c5c5c"/><rect x="161.72" y="743.8" width="11.800" height="11.900" fill="#5c5c5c"/><rect x="18.5" y="756.82" width="11.800" height="11.900" fill="#5c5c5c"/><rect x="31.52" y="756.82" width="11.800" height="11.900" fill="#5c5c5c"/><rect x="44.54" y="756.82" width="11.800" height="11.900" fill="#5c5c5c"/><rect x="57.56" y="756.82" width="11.800" height="11.900" fill="#5c5c5c"/><rect x="70.58" y="756.82" width="11.800" height="11.900" fill="#5c5c5c"/><rect x="83.6" y="756.82" width="11.800" height="11.900" fill="#5c5c5c"/><rect x="96.62" y="756.82" width="11.800" height="11.900" fill="#5c5c5c"/><rect x="109.64" y="756.82" width="11.800" height="11.900" fill="#5c5c5c"/><rect x="122.66" y="756.82" width="11.800" height="11.900" fill="#5c5c5c"/><rect x="135.68" y="756.82" width="11.800" height="11.900" fill="#5c5c5c"/><rect x="148.7" y="756.82" width="11.800" height="11.900" fill="#5c5c5c"/><rect x="161.72" y="756.82" width="11.800" height="11.900" fill="#5c5c5c"/><rect x="18.5" y="769.84" width="11.800" height="11.900" fill="#5c5c5c"/><rect x="31.52" y="769.84" width="11.800" height="11.900" fill="#5c5c5c"/><rect x="44.54" y="769.84" width="11.800" height="11.900" fill="#5c5c5c"/><rect x="57.56" y="769.84" width="11.800" height="11.900" fill="#5c5c5c"/><rect x="70.58" y="769.84" width="11.800" height="11.900" fill="#5c5c5c"/><rect x="83.6" y="769.84" width="11.800" height="11.900" fill="#5c5c5c"/><rect x="96.62" y="769.84" width="11.800" height="11.900" fill="#5c5c5c"/><rect x="109.64" y="769.84" width="11.800" height="11.900" fill="#5c5c5c"/><rect x="122.66" y="769.84" width="11.800" height="11.900" fill="#5c5c5c"/><rect x="135.68" y="769.84" width="11.800" height="11.900" fill="#5c5c5c"/><rect x="148.7" y="769.84" width="11.800" height="11.900" fill="#bf9aff"/><rect x="161.72" y="769.84" width="11.800" height="11.900" fill="#bf9aff"/><rect x="31.52" y="782.86" width="11.800" height="11.900" fill="#5c5c5c"/><rect x="57.56" y="782.86" width="11.800" height="11.900" fill="#5c5c5c"/><rect x="70.58" y="782.86" width="11.800" height="11.900" fill="#5c5c5c"/><rect x="96.62" y="782.86" width="11.800" height="11.900" fill="#5c5c5c"/><rect x="122.66" y="782.86" width="11.800" height="11.900" fill="#5c5c5c"/><rect x="148.7" y="782.86" width="11.800" height="11.900" fill="#5c5c5c"/><rect x="161.72" y="782.86" width="11.800" height="11.900" fill="#5c5c5c"/><rect x="18.5" y="795.88" width="11.800" height="11.900" fill="#5c5c5c"/><rect x="31.52" y="795.88" width="11.800" height="11.900" fill="#5c5c5c"/><rect x="44.54" y="795.88" width="11.800" height="11.900" fill="#5c5c5c"/><rect x="57.56" y="795.88" width="11.800" height="11.900" fill="#5c5c5c"/><rect x="70.58" y="795.88" width="11.800" height="11.900" fill="#5c5c5c"/><rect x="83.6" y="795.88" width="11.800" height="11.900" fill="#5c5c5c"/><rect x="96.62" y="795.88" width="11.800" height="11.900" fill="#5c5c5c"/><rect x="109.64" y="795.88" width="11.800" height="11.900" fill="#5c5c5c"/><rect x="122.66" y="795.88" width="11.800" height="11.900" fill="#bf9aff"/><rect x="135.68" y="795.88" width="11.800" height="11.900" fill="#bf9aff"/><rect x="148.7" y="795.88" width="11.800" height="11.900" fill="#5c5c5c"/><rect x="161.72" y="795.88" width="11.800" height="11.900" fill="#5c5c5c"/><rect x="31.52" y="808.9" width="11.800" height="11.900" fill="#5c5c5c"/><rect x="57.56" y="808.9" width="11.800" height="11.900" fill="#5c5c5c"/><rect x="70.58" y="808.9" width="11.800" height="11.900" fill="#5c5c5c"/><rect x="96.62" y="808.9" width="11.800" height="11.900" fill="#5c5c5c"/><rect x="109.64" y="808.9" width="11.800" height="11.900" fill="#bf9aff"/><rect x="122.66" y="808.9" width="11.800" height="11.900" fill="#5c5c5c"/><rect x="148.7" y="808.9" width="11.800" height="11.900" fill="#5c5c5c"/><rect x="161.72" y="808.9" width="11.800" height="11.900" fill="#5c5c5c"/><rect x="18.5" y="821.92" width="11.800" height="11.900" fill="#5c5c5c"/><rect x="31.52" y="821.92" width="11.800" height="11.900" fill="#5c5c5c"/><rect x="44.54" y="821.92" width="11.800" height="11.900" fill="#5c5c5c"/><rect x="57.56" y="821.92" width="11.800" height="11.900" fill="#5c5c5c"/><rect x="70.58" y="821.92" width="11.800" height="11.900" fill="#5c5c5c"/><rect x="83.6" y="821.92" width="11.800" height="11.900" fill="#5c5c5c"/><rect x="96.62" y="821.92" width="11.800" height="11.900" fill="#5c5c5c"/><rect x="109.64" y="821.92" width="11.800" height="11.900" fill="#5c5c5c"/><rect x="122.66" y="821.92" width="11.800" height="11.900" fill="#5c5c5c"/><rect x="135.68" y="821.92" width="11.800" height="11.900" fill="#5c5c5c"/><rect x="148.7" y="821.92" width="11.800" height="11.900" fill="#5c5c5c"/><rect x="161.72" y="821.92" width="11.800" height="11.900" fill="#5c5c5c"/><rect x="31.52" y="834.94" width="11.800" height="11.900" fill="#5c5c5c"/><rect x="57.56" y="834.94" width="11.800" height="11.900" fill="#5c5c5c"/><rect x="70.58" y="834.94" width="11.800" height="11.900" fill="#5c5c5c"/><rect x="83.6" y="834.94" width="11.800" height="11.900" fill="#00e8f8"/><rect x="96.62" y="834.94" width="11.800" height="11.900" fill="#bf9aff"/><rect x="122.66" y="834.94" width="11.800" height="11.900" fill="#5c5c5c"/><rect x="148.7" y="834.94" width="11.800" height="11.900" fill="#5c5c5c"/><rect x="161.72" y="834.94" width="11.800" height="11.900" fill="#5c5c5c"/><rect x="18.5" y="847.96" width="11.800" height="11.900" fill="#5c5c5c"/><rect x="31.52" y="847.96" width="11.800" height="11.900" fill="#5c5c5c"/><rect x="44.54" y="847.96" width="11.800" height="11.900" fill="#5c5c5c"/><rect x="57.56" y="847.96" width="11.800" height="11.900" fill="#5c5c5c"/><rect x="70.58" y="847.96" width="11.800" height="11.900" fill="#5c5c5c"/><rect x="83.6" y="847.96" width="11.800" height="11.900" fill="#5c5c5c"/><rect x="96.62" y="847.96" width="11.800" height="11.900" fill="#5c5c5c"/><rect x="109.64" y="847.96" width="11.800" height="11.900" fill="#5c5c5c"/><rect x="122.66" y="847.96" width="11.800" height="11.900" fill="#5c5c5c"/><rect x="135.68" y="847.96" width="11.800" height="11.900" fill="#5c5c5c"/><rect x="148.7" y="847.96" width="11.800" height="11.900" fill="#5c5c5c"/><rect x="161.72" y="847.96" width="11.800" height="11.900" fill="#5c5c5c"/><rect x="18.5" y="860.98" width="11.800" height="11.900" fill="#5c5c5c"/><rect x="31.52" y="860.98" width="11.800" height="11.900" fill="#5c5c5c"/><rect x="44.54" y="860.98" width="11.800" height="11.900" fill="#5c5c5c"/><rect x="57.56" y="860.98" width="11.800" height="11.900" fill="#bf9aff"/><rect x="70.58" y="860.98" width="11.800" height="11.900" fill="#bf9aff"/><rect x="83.6" y="860.98" width="11.800" height="11.900" fill="#5c5c5c"/><rect x="96.62" y="860.98" width="11.800" height="11.900" fill="#5c5c5c"/><rect x="109.64" y="860.98" width="11.800" height="11.900" fill="#5c5c5c"/><rect x="122.66" y="860.98" width="11.800" height="11.900" fill="#5c5c5c"/><rect x="135.68" y="860.98" width="11.800" height="11.900" fill="#5c5c5c"/><rect x="148.7" y="860.98" width="11.800" height="11.900" fill="#5c5c5c"/><rect x="161.72" y="860.98" width="11.800" height="11.900" fill="#5c5c5c"/><rect x="31.52" y="874" width="11.800" height="11.900" fill="#5c5c5c"/><rect x="44.54" y="874" width="11.800" height="11.900" fill="#bf9aff"/><rect x="57.56" y="874" width="11.800" height="11.900" fill="#5c5c5c"/><rect x="70.58" y="874" width="11.800" height="11.900" fill="#5c5c5c"/><rect x="96.62" y="874" width="11.800" height="11.900" fill="#5c5c5c"/><rect x="122.66" y="874" width="11.800" height="11.900" fill="#5c5c5c"/><rect x="148.7" y="874" width="11.800" height="11.900" fill="#5c5c5c"/><rect x="161.72" y="874" width="11.800" height="11.900" fill="#5c5c5c"/><rect x="18.5" y="887.02" width="11.800" height="11.900" fill="#5c5c5c"/><rect x="31.52" y="887.02" width="11.800" height="11.900" fill="#5c5c5c"/><rect x="44.54" y="887.02" width="11.800" height="11.900" fill="#5c5c5c"/><rect x="57.56" y="887.02" width="11.800" height="11.900" fill="#5c5c5c"/><rect x="70.58" y="887.02" width="11.800" height="11.900" fill="#5c5c5c"/><rect x="83.6" y="887.02" width="11.800" height="11.900" fill="#5c5c5c"/><rect x="96.62" y="887.02" width="11.800" height="11.900" fill="#5c5c5c"/><rect x="109.64" y="887.02" width="11.800" height="11.900" fill="#5c5c5c"/><rect x="122.66" y="887.02" width="11.800" height="11.900" fill="#5c5c5c"/><rect x="135.68" y="887.02" width="11.800" height="11.900" fill="#5c5c5c"/><rect x="148.7" y="887.02" width="11.800" height="11.900" fill="#5c5c5c"/><rect x="161.72" y="887.02" width="11.800" height="11.900" fill="#5c5c5c"/><rect x="18.5" y="900.04" width="11.800" height="11.900" fill="#bf9aff"/><rect x="31.52" y="900.04" width="11.800" height="11.900" fill="#bf9aff"/><rect x="57.56" y="900.04" width="11.800" height="11.900" fill="#5c5c5c"/><rect x="70.58" y="900.04" width="11.800" height="11.900" fill="#5c5c5c"/><rect x="96.62" y="900.04" width="11.800" height="11.900" fill="#5c5c5c"/><rect x="122.66" y="900.04" width="11.800" height="11.900" fill="#5c5c5c"/><rect x="148.7" y="900.04" width="11.800" height="11.900" fill="#5c5c5c"/><rect x="161.72" y="900.04" width="11.800" height="11.900" fill="#5c5c5c"/>
<polygon points="5,760.1 5,763.1 7.200,761.6" fill="#6a6a6a"/>
<polygon points="5,765.57 5,768.57 7.200,767.07" fill="#6a6a6a"/>
<polygon points="5,771.04 5,774.04 7.200,772.54" fill="#6a6a6a"/>
<polygon points="5,776.51 5,779.51 7.200,778.01" fill="#6a6a6a"/>
<polygon points="5,781.98 5,784.98 7.200,783.48" fill="#6a6a6a"/>
<polygon points="5,787.45 5,790.45 7.200,788.95" fill="#f0b010"/>
<polygon points="5,792.92 5,795.92 7.200,794.42" fill="#f0b010"/>
<polygon points="5,798.39 5,801.39 7.200,799.89" fill="#f0b010"/>
<polygon points="5,803.86 5,806.86 7.200,805.36" fill="#f0b010"/>
<polygon points="5,809.33 5,812.33 7.200,810.83" fill="#f0b010"/>
<polygon points="5,814.8 5,817.8 7.200,816.3" fill="#f0b010"/>
<polygon points="5,820.27 5,823.27 7.200,821.77" fill="#f0b010"/>
<polygon points="5,825.74 5,828.74 7.200,827.24" fill="#f0b010"/>
<polygon points="5,831.21 5,834.21 7.200,832.71" fill="#f0b010"/>
<polygon points="5,836.68 5,839.68 7.200,838.18" fill="#f0b010"/>
<polygon points="5,842.15 5,845.15 7.200,843.65" fill="#f0b010"/>
<polygon points="5,847.62 5,850.62 7.200,849.12" fill="#f0b010"/>
<polygon points="5,853.09 5,856.09 7.200,854.59" fill="#f0b010"/>
<polygon points="5,858.56 5,861.56 7.200,860.06" fill="#f0b010"/>
<polygon points="5,864.03 5,867.03 7.200,865.53" fill="#f0b010"/>
<polygon points="5,869.5 5,872.5 7.200,871" fill="#f0b010"/>
<polygon points="5,874.97 5,877.97 7.200,876.47" fill="#f0b010"/>
</svg>
<div style="top:738.7px;height:16px;line-height:16px;font-size:10.5px;color:#1c1c1c;letter-spacing:0.37px;white-space:nowrap;-webkit-text-stroke:0.25px #1c1c1c;left:183.8px;">In</div>
<div style="top:738.7px;height:16px;line-height:16px;font-size:10.5px;color:#1c1c1c;letter-spacing:0.69px;white-space:nowrap;-webkit-text-stroke:0.25px #1c1c1c;left:217.5px;">Out</div>
<div style="left:182.6px;top:756.2px;width:89.9px;height:1px;background:#7c7c7c;"></div>
<div style="left:182.6px;top:761.6px;width:89.9px;height:13.4px;background:#ababab;border:1px solid #7a7a7a;box-sizing:border-box;"></div>
<div style="top:760.6px;height:16px;line-height:16px;font-size:10.5px;color:#8a8a8a;letter-spacing:0.4px;white-space:nowrap;-webkit-text-stroke:0.1px #8a8a8a;left:186px;">C#</div>
<svg width="1564" height="960" viewBox="0 0 1564 960">
<polygon points="261.25,766.35 267.75,766.35 264.5,770.85" fill="#858585"/>
<circle cx="185.600" cy="764.6" r="2.400" fill="#bf9aff" stroke="#222" stroke-width="0.900"/>
</svg>
<div style="left:182.6px;top:779.3px;width:89.9px;height:13.3px;background:#ababab;border:1px solid #7a7a7a;box-sizing:border-box;"></div>
<div style="top:778.25px;height:16px;line-height:16px;font-size:10.5px;color:#8a8a8a;letter-spacing:0.4px;white-space:nowrap;-webkit-text-stroke:0.1px #8a8a8a;left:186px;">Minor</div>
<svg width="1564" height="960" viewBox="0 0 1564 960">
<polygon points="261.25,784 267.75,784 264.5,788.5" fill="#858585"/>
<circle cx="185.600" cy="782.3" r="2.400" fill="#bf9aff" stroke="#222" stroke-width="0.900"/>
</svg>
<div style="top:798.3px;height:16px;line-height:16px;font-size:10.5px;color:#1c1c1c;letter-spacing:0.53px;white-space:nowrap;-webkit-text-stroke:0.25px #1c1c1c;left:78.27px;width:300px;text-align:center;">Transpose</div>
<svg width="1564" height="960" viewBox="0 0 1564 960">
<path d="M229.56 820.41A13.2 13.2 0 0 1 233.49 845.21" stroke="#222" stroke-width="2.300" fill="none"/><path d="M225.44 820.41A13.2 13.2 0 0 0 221.51 845.21" stroke="#222" stroke-width="2.300" fill="none"/><path d="M227.500 819.100V834.500" stroke="#222" stroke-width="2.300"/><polygon points="223.700,813.400 231.300,813.400 227.500,817.800" fill="#222"/>
</svg>
<div style="top:844.9px;height:16px;line-height:16px;font-size:10.5px;color:#1c1c1c;letter-spacing:0.39px;white-space:nowrap;-webkit-text-stroke:0.25px #1c1c1c;left:78.2px;width:300px;text-align:center;">0 st</div>
<div style="left:204.4px;top:866.4px;width:46.3px;height:13.3px;background:#bcbcbc;border:1px solid #7a7a7a;box-sizing:border-box;"></div>
<div style="top:865.2px;height:16px;line-height:16px;font-size:10.5px;color:#8a8a8a;letter-spacing:0.14px;white-space:nowrap;-webkit-text-stroke:0.1px #8a8a8a;left:77.62px;width:300px;text-align:center;">Fold</div>
<div style="top:887.8px;height:16px;line-height:16px;font-size:10.5px;color:#1c1c1c;letter-spacing:0.54px;white-space:nowrap;-webkit-text-stroke:0.25px #1c1c1c;left:182.6px;">Lowest</div>
<div style="top:887.8px;height:16px;line-height:16px;font-size:10.5px;color:#1c1c1c;letter-spacing:0.21px;white-space:nowrap;-webkit-text-stroke:0.25px #1c1c1c;left:229.6px;">Range</div>
<svg width="1564" height="960" viewBox="0 0 1564 960">
<circle cx="268.600" cy="895.500" r="2.400" fill="#6e6e6e"/>
</svg>
<div style="left:182.6px;top:903.3px;width:43.1px;height:13.1px;background:#e2e2e2;border:1px solid #555;box-sizing:border-box;"></div>
<div style="top:902.2px;height:16px;line-height:16px;font-size:10.5px;color:#1c1c1c;letter-spacing:0.36px;white-space:nowrap;-webkit-text-stroke:0.25px #1c1c1c;left:54.33px;width:300px;text-align:center;">C-2</div>
<div style="left:229.2px;top:903.3px;width:43.3px;height:13.1px;background:#00d0e8;border:1px solid #1a6a78;box-sizing:border-box;"></div>
<div style="top:902.2px;height:16px;line-height:16px;font-size:10.5px;color:#1c1c1c;letter-spacing:0.32px;white-space:nowrap;-webkit-text-stroke:0.25px #1c1c1c;left:101.01px;width:300px;text-align:center;">+128 st</div>
<svg width="1564" height="960" viewBox="0 0 1564 960">
<circle cx="281.700" cy="762" r="1.700" fill="#2a2a2a"/>
<circle cx="281.700" cy="767.41" r="1.700" fill="#2a2a2a"/>
<circle cx="281.700" cy="772.82" r="1.700" fill="#2a2a2a"/>
<circle cx="281.700" cy="778.23" r="1.700" fill="#2a2a2a"/>
<circle cx="281.700" cy="783.64" r="1.700" fill="#2a2a2a"/>
<circle cx="281.700" cy="789.05" r="1.700" fill="#ffb800"/>
<circle cx="281.700" cy="794.46" r="1.700" fill="#ffb800"/>
<circle cx="281.700" cy="799.87" r="1.700" fill="#ffb800"/>
<circle cx="281.700" cy="805.28" r="1.700" fill="#ffb800"/>
<circle cx="281.700" cy="810.69" r="1.700" fill="#ffb800"/>
<circle cx="281.700" cy="816.1" r="1.700" fill="#ffb800"/>
<circle cx="281.700" cy="821.51" r="1.700" fill="#ffb800"/>
<circle cx="281.700" cy="826.92" r="1.700" fill="#ffb800"/>
<circle cx="281.700" cy="832.33" r="1.700" fill="#ffb800"/>
<circle cx="281.700" cy="837.74" r="1.700" fill="#ffb800"/>
<circle cx="281.700" cy="843.15" r="1.700" fill="#ffb800"/>
<circle cx="281.700" cy="848.56" r="1.700" fill="#ffb800"/>
<circle cx="281.700" cy="853.97" r="1.700" fill="#ffb800"/>
<circle cx="281.700" cy="859.38" r="1.700" fill="#ffb800"/>
<circle cx="281.700" cy="864.79" r="1.700" fill="#ffb800"/>
<circle cx="281.700" cy="870.2" r="1.700" fill="#ffb800"/>
<circle cx="281.700" cy="875.61" r="1.700" fill="#ffb800"/>
</svg>
<div style="left:287.2px;top:717px;width:1065.8px;height:203.5px;background:#bdbdbd;border-radius:4px;"></div>
<svg width="1564" height="960" viewBox="0 0 1564 960">
<circle cx="296.9" cy="726" r="6.300" fill="#ffb901" stroke="#3a3000" stroke-width="1"/>
<circle cx="314.500" cy="726" r="6.400" fill="#d6d6d6" stroke="#333" stroke-width="1"/><polygon points="312,722.200 312,729.800 318.600,726" fill="#1c1c1c"/>
</svg>
<div style="top:718px;height:16px;line-height:16px;font-size:10.5px;color:#1c1c1c;letter-spacing:0.4px;white-space:nowrap;font-weight:bold;left:326.2px;">Drifting Ambient Pad</div>
<div style="left:289.1px;top:735.4px;width:62.5px;height:142.4px;background:#a5a5a5;border-radius:3px;"></div>
<div style="left:289.1px;top:881.7px;width:62.5px;height:36.3px;background:#a5a5a5;border-radius:3px;"></div>
<div style="left:292.4px;top:743.6px;width:56px;height:13px;background:#ffb901;border:1px solid #5a4a10;box-sizing:border-box;"></div>
<div style="top:742.3px;height:16px;line-height:16px;font-size:10.5px;color:#1c1c1c;letter-spacing:0.27px;white-space:nowrap;-webkit-text-stroke:0.25px #1c1c1c;left:170.54px;width:300px;text-align:center;">Sub</div>
<div style="top:758.4px;height:16px;line-height:16px;font-size:10.5px;color:#1c1c1c;letter-spacing:0.2px;white-space:nowrap;-webkit-text-stroke:0.25px #1c1c1c;left:295.6px;">Gain</div>
<svg width="1564" height="960" viewBox="0 0 1564 960">
<path d="M301.05 794.76A9.7 9.7 0 1 1 315.3 786.2" stroke="#222" stroke-width="2.2" fill="none"/>
<path d="M305.14 787.06L300.53 795.74" stroke="#222" stroke-width="2.2"/>
<rect x="300.300" y="793.800" width="2.800" height="2.400" fill="#0adff5"/>
</svg>
<div style="top:786.6px;height:16px;line-height:16px;font-size:10.5px;color:#1c1c1c;letter-spacing:0.26px;white-space:nowrap;-webkit-text-stroke:0.25px #1c1c1c;left:310px;">-20 dB</div>
<div style="top:799.7px;height:16px;line-height:16px;font-size:10.5px;color:#1c1c1c;letter-spacing:0.43px;white-space:nowrap;-webkit-text-stroke:0.25px #1c1c1c;left:295.6px;">Tone</div>
<svg width="1564" height="960" viewBox="0 0 1564 960">
<path d="M305.6 837.2A9.7 9.7 0 1 1 315.3 827.5" stroke="#222" stroke-width="2.2" fill="none"/>
<path d="M305.6 828.47L305.6 838.3" stroke="#222" stroke-width="2.2"/>
</svg>
<div style="top:828px;height:16px;line-height:16px;font-size:10.5px;color:#1c1c1c;letter-spacing:0.03px;white-space:nowrap;-webkit-text-stroke:0.25px #1c1c1c;left:309.7px;">0.0 %</div>
<div style="top:841px;height:16px;line-height:16px;font-size:10.5px;color:#1c1c1c;letter-spacing:0.46px;white-space:nowrap;-webkit-text-stroke:0.25px #1c1c1c;left:292.4px;">Octave</div>
<div style="left:292.4px;top:858.7px;width:16.4px;height:13.1px;background:#e0e0e0;border:1px solid #4a4a4a;box-sizing:border-box;"></div>
<div style="top:857.5px;height:16px;line-height:16px;font-size:10.5px;color:#1c1c1c;letter-spacing:0.2px;white-space:nowrap;-webkit-text-stroke:0.25px #1c1c1c;left:150.7px;width:300px;text-align:center;">0</div>
<div style="left:311.8px;top:858.7px;width:16.6px;height:13.1px;background:#ffb901;border:1px solid #4a4a4a;box-sizing:border-box;"></div>
<div style="top:857.5px;height:16px;line-height:16px;font-size:10.5px;color:#1c1c1c;letter-spacing:0.2px;white-space:nowrap;-webkit-text-stroke:0.25px #1c1c1c;left:170.2px;width:300px;text-align:center;">-1</div>
<div style="left:331.4px;top:858.7px;width:16.4px;height:13.1px;background:#e0e0e0;border:1px solid #4a4a4a;box-sizing:border-box;"></div>
<div style="top:857.5px;height:16px;line-height:16px;font-size:10.5px;color:#1c1c1c;letter-spacing:0.2px;white-space:nowrap;-webkit-text-stroke:0.25px #1c1c1c;left:189.7px;width:300px;text-align:center;">-2</div>
<div style="top:881.2px;height:16px;line-height:16px;font-size:10.5px;color:#1c1c1c;letter-spacing:0.53px;white-space:nowrap;-webkit-text-stroke:0.25px #1c1c1c;left:292.4px;">Transpose</div>
<div style="left:292.4px;top:898.3px;width:56px;height:13.2px;background:#e2e2e2;border:1px solid #4a4a4a;box-sizing:border-box;"></div>
<div style="top:897.2px;height:16px;line-height:16px;font-size:10.5px;color:#1c1c1c;letter-spacing:0.39px;white-space:nowrap;-webkit-text-stroke:0.25px #1c1c1c;left:170.6px;width:300px;text-align:center;">0 st</div>
<div style="left:354px;top:735.4px;width:327px;height:182.6px;background:#222222;border-radius:3px;"></div>
<div style="left:479.2px;top:719.2px;width:54.5px;height:16.8px;background:#222222;border-radius:4px 4px 0 0;"></div>
<svg width="1564" height="960" viewBox="0 0 1564 960">
<path d="M479.200 735.400h-4a4 4 0 0 0 4-4zM533.700 735.400h4a4 4 0 0 1-4-4z" fill="#222222"/>
</svg>
<div style="left:485.8px;top:721.5px;width:8px;height:7.7px;background:#ffb901;border:1px solid #8a6a10;box-sizing:border-box;"></div>
<div style="top:718.1px;height:16px;line-height:16px;font-size:10.5px;color:#d8d8d8;letter-spacing:0.11px;white-space:nowrap;-webkit-text-stroke:0.15px #d8d8d8;left:497.8px;">Osc 1</div>
<div style="left:535.6px;top:719.2px;width:53.7px;height:13.8px;background:#a5a5a5;border-radius:3px;"></div>
<div style="left:542.2px;top:721.5px;width:8px;height:7.7px;background:#ffb901;border:1px solid #8a6a10;box-sizing:border-box;"></div>
<div style="top:718.1px;height:16px;line-height:16px;font-size:10.5px;color:#1c1c1c;letter-spacing:0.11px;white-space:nowrap;-webkit-text-stroke:0.25px #1c1c1c;left:554.4px;">Osc 2</div>
<div style="top:739px;height:16px;line-height:16px;font-size:10.5px;color:#ffbb08;letter-spacing:-0.31px;white-space:nowrap;font-weight:bold;left:360.7px;">Basics</div>
<svg width="1564" height="960" viewBox="0 0 1564 960">
<polygon points="420.9,746.1 426.9,746.1 423.9,749.9" fill="#ffbb08"/>
</svg>
<div style="left:434.5px;top:742px;width:1px;height:10.5px;background:#5a5a5a;"></div>
<div style="top:739px;height:16px;line-height:16px;font-size:10.5px;color:#ffbb08;letter-spacing:-0.02px;white-space:nowrap;font-weight:bold;left:441.5px;">Pulse Dual</div>
<svg width="1564" height="960" viewBox="0 0 1564 960">
<polygon points="540.5,746.1 546.5,746.1 543.5,749.9" fill="#ffbb08"/>
<polygon points="623.4,744.5 623.4,749.5 619.4,747" fill="#bdbdbd"/>
<polygon points="631,744.5 631,749.5 635,747" fill="#bdbdbd"/>
</svg>
<div style="left:641.3px;top:742px;width:1px;height:10.5px;background:#5a5a5a;"></div>
<div style="left:647.4px;top:741.5px;width:11px;height:1.5px;background:#ffbb08;"></div>
<div style="left:647.4px;top:744.6px;width:11px;height:1.5px;background:#ffbb08;"></div>
<div style="left:647.4px;top:747.7px;width:11px;height:1.5px;background:#ffbb08;"></div>
<div style="left:647.4px;top:750.8px;width:11px;height:1.5px;background:#ffbb08;"></div>
<svg width="1564" height="960" viewBox="0 0 1564 960">
<circle cx="669.100" cy="746.800" r="4.800" fill="none" stroke="#cfcfcf" stroke-width="1.200"/>
</svg>
<div style="top:756px;height:16px;line-height:16px;font-size:10.5px;color:#ffbb08;letter-spacing:0px;white-space:nowrap;-webkit-text-stroke:0.25px #ffbb08;left:237.2px;width:300px;text-align:center;">C</div>
<div style="left:375.7px;top:771.6px;width:22.8px;height:1px;background:#6a5a20;"></div>
<div style="left:386.5px;top:771.3px;width:1.5px;height:1.6px;background:#ffbb08;"></div>
<div style="left:384.2px;top:781px;width:6.5px;height:94px;background:#5a5a5a;"></div>
<div style="left:386px;top:782.5px;width:3.3px;height:91.5px;background:#ffbb08;"></div>
<svg width="1564" height="960" viewBox="0 0 1564 960">
<polygon points="398.800,780.300 398.800,787 392.200,783.600" fill="#8a8a8a"/>
</svg>
<div style="top:882.3px;height:16px;line-height:16px;font-size:10.5px;color:#ffbb08;letter-spacing:0.08px;white-space:nowrap;font-weight:bold;left:237.24px;width:300px;text-align:center;">0.0 dB</div>
<div style="top:899.4px;height:16px;line-height:16px;font-size:10.5px;color:#ffbb08;letter-spacing:0.19px;white-space:nowrap;font-weight:bold;left:361px;">None</div>
<svg width="1564" height="960" viewBox="0 0 1564 960">
<polygon points="402.5,906.5 408.5,906.5 405.5,910.3" fill="#ffbb08"/>
</svg>
<div style="top:899.4px;height:16px;line-height:16px;font-size:10.5px;color:#c4c4c4;letter-spacing:0.14px;white-space:nowrap;-webkit-text-stroke:0.15px #c4c4c4;left:419.6px;">FX 1 0.0 %</div>
<div style="top:899.4px;height:16px;line-height:16px;font-size:10.5px;color:#c4c4c4;letter-spacing:0.14px;white-space:nowrap;-webkit-text-stroke:0.15px #c4c4c4;left:488.3px;">FX 2 0.0 %</div>
<div style="left:552px;top:902px;width:1px;height:11px;background:#5a5a5a;"></div>
<div style="top:899.4px;height:16px;line-height:16px;font-size:10.5px;color:#c4c4c4;letter-spacing:0.02px;white-space:nowrap;-webkit-text-stroke:0.15px #c4c4c4;left:556.3px;">Semi</div>
<div style="top:899.4px;height:16px;line-height:16px;font-size:10.5px;color:#ffbb08;letter-spacing:0.15px;white-space:nowrap;font-weight:bold;left:585.8px;">0 st</div>
<div style="top:899.4px;height:16px;line-height:16px;font-size:10.5px;color:#c4c4c4;letter-spacing:0.22px;white-space:nowrap;-webkit-text-stroke:0.15px #c4c4c4;left:620.8px;">Det</div>
<div style="top:899.4px;height:16px;line-height:16px;font-size:10.5px;color:#ffbb08;letter-spacing:0.35px;white-space:nowrap;font-weight:bold;left:643.1px;">0 ct</div>
<div style="left:648.5px;top:758.5px;width:1.2px;height:56.5px;background:#6a6a6a;"></div>
<div style="left:648.3px;top:815px;width:1.6px;height:59.3px;background:#c89410;"></div>
<div style="left:646px;top:812px;width:6.2px;height:6.2px;background:#3a3010;border:1.200px solid #e0a818;box-sizing:border-box;"></div>
<div style="top:883.2px;height:16px;line-height:16px;font-size:10.5px;color:#ffbb08;letter-spacing:0.12px;white-space:nowrap;font-weight:bold;left:499.06px;width:300px;text-align:center;">51 %</div>
<svg width="1564" height="960" viewBox="0 0 1564 960">
<path d="M422.2 764.1 L423.41 764.37 L424.61 764.63 L425.82 764.9 L427.02 765.16 L428.23 765.43 L429.44 765.7 L430.64 765.96 L431.85 766.23 L433.06 766.5 L434.26 766.76 L435.47 767.03 L436.68 767.29 L437.88 767.56 L439.09 767.83 L440.29 768.09 L441.5 768.36 L442.71 768.63 L443.91 768.89 L445.12 769.16 L446.32 769.43 L447.53 769.69 L448.74 769.96 L449.94 770.22 L451.15 770.49 L452.36 770.76 L453.56 771.02 L454.77 771.29 L455.98 771.55 L457.18 771.82 L458.39 772.09 L459.59 772.35 L460.8 772.62 L462.01 772.89 L463.21 773.15 L464.42 773.42 L465.62 773.68 L466.83 773.95 L468.04 774.22 L469.24 774.48 L470.45 774.75 L471.66 774.51 L472.86 774.26 L474.07 774.02 L475.28 773.77 L476.48 773.53 L477.69 773.29 L478.89 773.04 L480.1 772.8 L481.31 772.56 L482.51 772.31 L483.72 772.07 L484.93 771.83 L486.13 771.58 L487.34 771.34 L488.54 771.09 L489.75 770.85 L490.96 770.61 L492.16 770.36 L493.37 770.12 L494.58 769.88 L495.78 769.63 L496.99 769.39 L498.19 769.14 L499.4 768.9 L500.61 768.66 L501.81 768.41 L503.02 768.17 L504.23 767.92 L505.43 767.68 L506.64 767.44 L507.84 767.19 L509.05 766.95 L510.26 766.71 L511.46 766.46 L512.67 766.22 L513.88 765.98 L515.08 765.73 L516.29 765.49 L517.49 765.24 L518.7 765 L521.8 783.3 L522.99 783.06 L524.18 782.81 L525.37 782.57 L526.56 782.33 L527.75 782.09 L528.94 781.84 L530.13 781.6 L531.32 781.36 L532.51 781.12 L533.7 780.88 L534.89 780.63 L536.08 780.39 L537.27 780.15 L538.46 779.9 L539.65 779.66 L540.84 779.42 L542.03 779.18 L543.22 778.93 L544.41 778.69 L545.6 778.45 L546.79 778.21 L547.98 777.96 L549.17 777.72 L550.36 777.48 L551.55 777.24 L552.74 777 L553.93 776.75 L555.12 776.51 L556.31 776.27 L557.5 776.02 L558.69 775.78 L559.88 775.54 L561.07 775.3 L562.26 775.05 L563.45 774.81 L564.64 774.57 L565.83 774.33 L567.02 774.08 L568.21 773.84 L569.4 773.6 L570.59 773.84 L571.78 774.08 L572.97 774.33 L574.16 774.57 L575.35 774.81 L576.54 775.05 L577.73 775.3 L578.92 775.54 L580.11 775.78 L581.3 776.02 L582.49 776.27 L583.68 776.51 L584.87 776.75 L586.06 777 L587.25 777.24 L588.44 777.48 L589.63 777.72 L590.82 777.96 L592.01 778.21 L593.2 778.45 L594.39 778.69 L595.58 778.93 L596.77 779.18 L597.96 779.42 L599.15 779.66 L600.34 779.9 L601.53 780.15 L602.72 780.39 L603.91 780.63 L605.1 780.88 L606.29 781.12 L607.48 781.36 L608.67 781.6 L609.86 781.84 L611.05 782.09 L612.24 782.33 L613.43 782.57 L614.62 782.81 L615.81 783.06 L617 783.3" fill="none" stroke="#7e7e7e" stroke-width="0.700"/><path d="M422.2 768.46 L423.41 768.69 L424.61 768.91 L425.82 769.14 L427.02 769.36 L428.23 769.59 L429.44 769.82 L430.64 770.04 L431.85 770.27 L433.06 770.49 L434.26 770.72 L435.47 770.94 L436.68 771.17 L437.88 771.4 L439.09 771.62 L440.29 771.85 L441.5 772.07 L442.71 772.3 L443.91 772.52 L445.12 772.75 L446.32 772.98 L447.53 773.2 L448.74 773.43 L449.94 773.65 L451.15 773.88 L452.36 774.1 L453.56 774.33 L454.77 774.56 L455.98 774.78 L457.18 775.01 L458.39 775.23 L459.59 775.46 L460.8 775.68 L462.01 775.91 L463.21 776.14 L464.42 776.36 L465.62 776.59 L466.83 777.06 L468.04 777.6 L469.24 778.15 L470.45 778.38 L471.66 777.99 L472.86 777.49 L474.07 776.98 L475.28 776.76 L476.48 776.57 L477.69 776.39 L478.89 776.21 L480.1 776.02 L481.31 775.84 L482.51 775.66 L483.72 775.47 L484.93 775.29 L486.13 775.11 L487.34 774.92 L488.54 774.74 L489.75 774.56 L490.96 774.37 L492.16 774.19 L493.37 774 L494.58 773.82 L495.78 773.64 L496.99 773.45 L498.19 773.27 L499.4 773.09 L500.61 772.9 L501.81 772.72 L503.02 772.54 L504.23 772.35 L505.43 772.17 L506.64 771.99 L507.84 771.8 L509.05 771.62 L510.26 771.44 L511.46 771.25 L512.67 771.07 L513.88 770.89 L515.08 770.7 L516.29 770.52 L517.49 770.34 L518.7 770.15 L521.8 786.89 L522.99 786.9 L524.18 786.91 L525.37 786.92 L526.56 786.93 L527.75 786.85 L528.94 786.6 L530.13 786.34 L531.32 786.09 L532.51 785.84 L533.7 785.59 L534.89 785.34 L536.08 785.08 L537.27 784.83 L538.46 784.58 L539.65 784.33 L540.84 784.08 L542.03 783.82 L543.22 783.57 L544.41 783.32 L545.6 783.07 L546.79 782.81 L547.98 782.56 L549.17 782.31 L550.36 782.06 L551.55 781.81 L552.74 781.55 L553.93 781.3 L555.12 781.05 L556.31 780.8 L557.5 780.55 L558.69 780.29 L559.88 780.04 L561.07 779.79 L562.26 779.54 L563.45 779.28 L564.64 779.03 L565.83 778.78 L567.02 778.53 L568.21 778.47 L569.4 778.48 L570.59 778.49 L571.78 778.57 L572.97 778.84 L574.16 779.11 L575.35 779.39 L576.54 779.66 L577.73 779.93 L578.92 780.2 L580.11 780.48 L581.3 780.75 L582.49 781.02 L583.68 781.29 L584.87 781.57 L586.06 781.84 L587.25 782.11 L588.44 782.38 L589.63 782.66 L590.82 782.93 L592.01 783.2 L593.2 783.47 L594.39 783.75 L595.58 784.02 L596.77 784.29 L597.96 784.56 L599.15 784.84 L600.34 785.11 L601.53 785.38 L602.72 785.65 L603.91 785.93 L605.1 786.2 L606.29 786.47 L607.48 786.74 L608.67 787.02 L609.86 787.29 L611.05 787.56 L612.24 787.66 L613.43 787.67 L614.62 787.68 L615.81 787.69 L617 787.7" fill="none" stroke="#7e7e7e" stroke-width="0.700"/><path d="M422.2 772.82 L423.41 773.01 L424.61 773.19 L425.82 773.38 L427.02 773.56 L428.23 773.75 L429.44 773.93 L430.64 774.12 L431.85 774.3 L433.06 774.49 L434.26 774.67 L435.47 774.86 L436.68 775.04 L437.88 775.23 L439.09 775.42 L440.29 775.6 L441.5 775.79 L442.71 775.97 L443.91 776.16 L445.12 776.34 L446.32 776.53 L447.53 776.71 L448.74 776.9 L449.94 777.08 L451.15 777.27 L452.36 777.45 L453.56 777.64 L454.77 777.82 L455.98 778.01 L457.18 778.19 L458.39 778.38 L459.59 778.56 L460.8 778.75 L462.01 778.93 L463.21 779.12 L464.42 779.84 L465.62 780.66 L466.83 781.45 L468.04 781.64 L469.24 781.82 L470.45 782.01 L471.66 781.89 L472.86 781.76 L474.07 781.06 L475.28 780.3 L476.48 779.62 L477.69 779.49 L478.89 779.37 L480.1 779.25 L481.31 779.12 L482.51 779 L483.72 778.88 L484.93 778.75 L486.13 778.63 L487.34 778.51 L488.54 778.38 L489.75 778.26 L490.96 778.14 L492.16 778.01 L493.37 777.89 L494.58 777.77 L495.78 777.64 L496.99 777.52 L498.19 777.4 L499.4 777.28 L500.61 777.15 L501.81 777.03 L503.02 776.91 L504.23 776.78 L505.43 776.66 L506.64 776.54 L507.84 776.41 L509.05 776.29 L510.26 776.17 L511.46 776.04 L512.67 775.92 L513.88 775.8 L515.08 775.67 L516.29 775.55 L517.49 775.43 L518.7 775.3 L521.8 790.47 L522.99 790.49 L524.18 790.51 L525.37 790.53 L526.56 790.56 L527.75 790.58 L528.94 790.6 L530.13 790.62 L531.32 790.64 L532.51 790.66 L533.7 790.48 L534.89 790.21 L536.08 789.94 L537.27 789.67 L538.46 789.4 L539.65 789.12 L540.84 788.85 L542.03 788.58 L543.22 788.31 L544.41 788.04 L545.6 787.77 L546.79 787.5 L547.98 787.23 L549.17 786.96 L550.36 786.68 L551.55 786.41 L552.74 786.14 L553.93 785.87 L555.12 785.6 L556.31 785.33 L557.5 785.06 L558.69 784.79 L559.88 784.52 L561.07 784.24 L562.26 783.97 L563.45 783.7 L564.64 783.43 L565.83 783.3 L567.02 783.32 L568.21 783.34 L569.4 783.36 L570.59 783.38 L571.78 783.4 L572.97 783.42 L574.16 783.59 L575.35 783.91 L576.54 784.22 L577.73 784.53 L578.92 784.84 L580.11 785.15 L581.3 785.46 L582.49 785.78 L583.68 786.09 L584.87 786.4 L586.06 786.71 L587.25 787.02 L588.44 787.33 L589.63 787.65 L590.82 787.96 L592.01 788.27 L593.2 788.58 L594.39 788.89 L595.58 789.21 L596.77 789.52 L597.96 789.83 L599.15 790.14 L600.34 790.45 L601.53 790.76 L602.72 791.08 L603.91 791.39 L605.1 791.7 L606.29 791.92 L607.48 791.94 L608.67 791.96 L609.86 791.98 L611.05 792 L612.24 792.02 L613.43 792.04 L614.62 792.06 L615.81 792.08 L617 792.1" fill="none" stroke="#7e7e7e" stroke-width="0.700"/><path d="M422.2 777.18 L423.41 777.33 L424.61 777.47 L425.82 777.62 L427.02 777.76 L428.23 777.91 L429.44 778.05 L430.64 778.2 L431.85 778.34 L433.06 778.49 L434.26 778.63 L435.47 778.77 L436.68 778.92 L437.88 779.06 L439.09 779.21 L440.29 779.35 L441.5 779.5 L442.71 779.64 L443.91 779.79 L445.12 779.93 L446.32 780.08 L447.53 780.22 L448.74 780.37 L449.94 780.51 L451.15 780.66 L452.36 780.8 L453.56 780.95 L454.77 781.09 L455.98 781.24 L457.18 781.38 L458.39 781.52 L459.59 781.67 L460.8 781.81 L462.01 782.72 L463.21 783.82 L464.42 784.91 L465.62 785.06 L466.83 785.21 L468.04 785.35 L469.24 785.5 L470.45 785.64 L471.66 785.58 L472.86 785.51 L474.07 785.45 L475.28 785.21 L476.48 784.2 L477.69 783.18 L478.89 782.53 L480.1 782.47 L481.31 782.41 L482.51 782.34 L483.72 782.28 L484.93 782.22 L486.13 782.15 L487.34 782.09 L488.54 782.03 L489.75 781.97 L490.96 781.9 L492.16 781.84 L493.37 781.78 L494.58 781.71 L495.78 781.65 L496.99 781.59 L498.19 781.53 L499.4 781.46 L500.61 781.4 L501.81 781.34 L503.02 781.27 L504.23 781.21 L505.43 781.15 L506.64 781.09 L507.84 781.02 L509.05 780.96 L510.26 780.9 L511.46 780.83 L512.67 780.77 L513.88 780.71 L515.08 780.65 L516.29 780.58 L517.49 780.52 L518.7 780.46 L521.8 794.06 L522.99 794.09 L524.18 794.12 L525.37 794.15 L526.56 794.18 L527.75 794.21 L528.94 794.24 L530.13 794.27 L531.32 794.3 L532.51 794.34 L533.7 794.37 L534.89 794.4 L536.08 794.43 L537.27 794.46 L538.46 794.48 L539.65 794.17 L540.84 793.87 L542.03 793.56 L543.22 793.25 L544.41 792.94 L545.6 792.63 L546.79 792.33 L547.98 792.02 L549.17 791.71 L550.36 791.4 L551.55 791.09 L552.74 790.79 L553.93 790.48 L555.12 790.17 L556.31 789.86 L557.5 789.55 L558.69 789.25 L559.88 788.94 L561.07 788.63 L562.26 788.32 L563.45 788.09 L564.64 788.12 L565.83 788.15 L567.02 788.18 L568.21 788.21 L569.4 788.24 L570.59 788.27 L571.78 788.3 L572.97 788.33 L574.16 788.36 L575.35 788.39 L576.54 788.69 L577.73 789.06 L578.92 789.43 L580.11 789.8 L581.3 790.16 L582.49 790.53 L583.68 790.9 L584.87 791.27 L586.06 791.64 L587.25 792.01 L588.44 792.38 L589.63 792.75 L590.82 793.12 L592.01 793.48 L593.2 793.85 L594.39 794.22 L595.58 794.59 L596.77 794.96 L597.96 795.33 L599.15 795.7 L600.34 796.07 L601.53 796.1 L602.72 796.13 L603.91 796.16 L605.1 796.2 L606.29 796.23 L607.48 796.26 L608.67 796.29 L609.86 796.32 L611.05 796.35 L612.24 796.38 L613.43 796.41 L614.62 796.44 L615.81 796.47 L617 796.5" fill="none" stroke="#7e7e7e" stroke-width="0.700"/><path d="M422.2 781.54 L423.41 781.65 L424.61 781.75 L425.82 781.86 L427.02 781.96 L428.23 782.06 L429.44 782.17 L430.64 782.27 L431.85 782.38 L433.06 782.48 L434.26 782.59 L435.47 782.69 L436.68 782.79 L437.88 782.9 L439.09 783 L440.29 783.11 L441.5 783.21 L442.71 783.32 L443.91 783.42 L445.12 783.52 L446.32 783.63 L447.53 783.73 L448.74 783.84 L449.94 783.94 L451.15 784.05 L452.36 784.15 L453.56 784.25 L454.77 784.36 L455.98 784.46 L457.18 784.57 L458.39 784.67 L459.59 785.65 L460.8 787.02 L462.01 788.4 L463.21 788.64 L464.42 788.75 L465.62 788.85 L466.83 788.96 L468.04 789.06 L469.24 789.17 L470.45 789.27 L471.66 789.27 L472.86 789.26 L474.07 789.26 L475.28 789.26 L476.48 789.26 L477.69 788.69 L478.89 787.42 L480.1 786.14 L481.31 785.69 L482.51 785.69 L483.72 785.68 L484.93 785.68 L486.13 785.68 L487.34 785.68 L488.54 785.67 L489.75 785.67 L490.96 785.67 L492.16 785.67 L493.37 785.66 L494.58 785.66 L495.78 785.66 L496.99 785.66 L498.19 785.65 L499.4 785.65 L500.61 785.65 L501.81 785.65 L503.02 785.64 L504.23 785.64 L505.43 785.64 L506.64 785.63 L507.84 785.63 L509.05 785.63 L510.26 785.63 L511.46 785.62 L512.67 785.62 L513.88 785.62 L515.08 785.62 L516.29 785.61 L517.49 785.61 L518.7 785.61 L521.8 797.65 L522.99 797.69 L524.18 797.73 L525.37 797.77 L526.56 797.81 L527.75 797.85 L528.94 797.89 L530.13 797.93 L531.32 797.97 L532.51 798.01 L533.7 798.05 L534.89 798.09 L536.08 798.14 L537.27 798.18 L538.46 798.22 L539.65 798.26 L540.84 798.3 L542.03 798.34 L543.22 798.38 L544.41 798.27 L545.6 797.88 L546.79 797.49 L547.98 797.11 L549.17 796.72 L550.36 796.33 L551.55 795.95 L552.74 795.56 L553.93 795.18 L555.12 794.79 L556.31 794.4 L557.5 794.02 L558.69 793.63 L559.88 793.24 L561.07 792.86 L562.26 792.88 L563.45 792.92 L564.64 792.96 L565.83 793 L567.02 793.04 L568.21 793.08 L569.4 793.12 L570.59 793.16 L571.78 793.2 L572.97 793.24 L574.16 793.28 L575.35 793.32 L576.54 793.37 L577.73 793.42 L578.92 793.89 L580.11 794.36 L581.3 794.83 L582.49 795.3 L583.68 795.76 L584.87 796.23 L586.06 796.7 L587.25 797.17 L588.44 797.64 L589.63 798.1 L590.82 798.57 L592.01 799.04 L593.2 799.51 L594.39 799.98 L595.58 800.17 L596.77 800.21 L597.96 800.25 L599.15 800.29 L600.34 800.33 L601.53 800.37 L602.72 800.41 L603.91 800.45 L605.1 800.49 L606.29 800.53 L607.48 800.57 L608.67 800.62 L609.86 800.66 L611.05 800.7 L612.24 800.74 L613.43 800.78 L614.62 800.82 L615.81 800.86 L617 800.9" fill="none" stroke="#7e7e7e" stroke-width="0.700"/><path d="M422.2 785.9 L423.41 785.97 L424.61 786.03 L425.82 786.1 L427.02 786.16 L428.23 786.22 L429.44 786.29 L430.64 786.35 L431.85 786.41 L433.06 786.48 L434.26 786.54 L435.47 786.61 L436.68 786.67 L437.88 786.73 L439.09 786.8 L440.29 786.86 L441.5 786.92 L442.71 786.99 L443.91 787.05 L445.12 787.12 L446.32 787.18 L447.53 787.24 L448.74 787.31 L449.94 787.37 L451.15 787.43 L452.36 787.5 L453.56 787.56 L454.77 787.63 L455.98 787.69 L457.18 788.59 L458.39 790.24 L459.59 791.9 L460.8 792.39 L462.01 792.45 L463.21 792.52 L464.42 792.58 L465.62 792.65 L466.83 792.71 L468.04 792.77 L469.24 792.84 L470.45 792.9 L471.66 792.96 L472.86 793.02 L474.07 793.07 L475.28 793.13 L476.48 793.19 L477.69 793.25 L478.89 793.3 L480.1 792.24 L481.31 790.71 L482.51 789.18 L483.72 789.09 L484.93 789.15 L486.13 789.2 L487.34 789.26 L488.54 789.32 L489.75 789.38 L490.96 789.43 L492.16 789.49 L493.37 789.55 L494.58 789.61 L495.78 789.66 L496.99 789.72 L498.19 789.78 L499.4 789.84 L500.61 789.9 L501.81 789.95 L503.02 790.01 L504.23 790.07 L505.43 790.13 L506.64 790.18 L507.84 790.24 L509.05 790.3 L510.26 790.36 L511.46 790.41 L512.67 790.47 L513.88 790.53 L515.08 790.59 L516.29 790.65 L517.49 790.7 L518.7 790.76 L521.8 801.23 L522.99 801.29 L524.18 801.34 L525.37 801.39 L526.56 801.44 L527.75 801.49 L528.94 801.54 L530.13 801.59 L531.32 801.64 L532.51 801.69 L533.7 801.74 L534.89 801.79 L536.08 801.84 L537.27 801.9 L538.46 801.95 L539.65 802 L540.84 802.05 L542.03 802.1 L543.22 802.15 L544.41 802.2 L545.6 802.25 L546.79 802.3 L547.98 802.35 L549.17 802.4 L550.36 802 L551.55 801.39 L552.74 800.78 L553.93 800.17 L555.12 799.57 L556.31 798.96 L557.5 798.35 L558.69 797.75 L559.88 797.6 L561.07 797.65 L562.26 797.7 L563.45 797.75 L564.64 797.8 L565.83 797.85 L567.02 797.9 L568.21 797.95 L569.4 798 L570.59 798.05 L571.78 798.1 L572.97 798.15 L574.16 798.21 L575.35 798.26 L576.54 798.31 L577.73 798.36 L578.92 798.41 L580.11 798.66 L581.3 799.37 L582.49 800.08 L583.68 800.79 L584.87 801.5 L586.06 802.2 L587.25 802.91 L588.44 803.62 L589.63 804.13 L590.82 804.18 L592.01 804.23 L593.2 804.28 L594.39 804.33 L595.58 804.39 L596.77 804.44 L597.96 804.49 L599.15 804.54 L600.34 804.59 L601.53 804.64 L602.72 804.69 L603.91 804.74 L605.1 804.79 L606.29 804.84 L607.48 804.89 L608.67 804.94 L609.86 805 L611.05 805.05 L612.24 805.1 L613.43 805.15 L614.62 805.2 L615.81 805.25 L617 805.3" fill="none" stroke="#7e7e7e" stroke-width="0.700"/><path d="M422.2 790.27 L423.41 790.34 L424.61 790.41 L425.82 790.48 L427.02 790.55 L428.23 790.62 L429.44 790.69 L430.64 790.76 L431.85 790.83 L433.06 790.9 L434.26 790.97 L435.47 791.04 L436.68 791.11 L437.88 791.18 L439.09 791.25 L440.29 791.32 L441.5 791.39 L442.71 791.47 L443.91 791.54 L445.12 791.61 L446.32 791.68 L447.53 791.75 L448.74 791.82 L449.94 791.89 L451.15 791.96 L452.36 792.03 L453.56 792.1 L454.77 792.71 L455.98 794.39 L457.18 796.07 L458.39 796.88 L459.59 796.95 L460.8 797.02 L462.01 797.09 L463.21 797.17 L464.42 797.24 L465.62 797.31 L466.83 797.38 L468.04 797.45 L469.24 797.52 L470.45 797.59 L471.66 797.66 L472.86 797.73 L474.07 797.8 L475.28 797.87 L476.48 797.94 L477.69 798.01 L478.89 798.08 L480.1 798.15 L481.31 798.22 L482.51 796.74 L483.72 795.21 L484.93 793.94 L486.13 794.01 L487.34 794.08 L488.54 794.15 L489.75 794.22 L490.96 794.29 L492.16 794.36 L493.37 794.43 L494.58 794.5 L495.78 794.57 L496.99 794.64 L498.19 794.71 L499.4 794.78 L500.61 794.85 L501.81 794.92 L503.02 795 L504.23 795.07 L505.43 795.14 L506.64 795.21 L507.84 795.28 L509.05 795.35 L510.26 795.42 L511.46 795.49 L512.67 795.56 L513.88 795.63 L515.08 795.7 L516.29 795.77 L517.49 795.84 L518.7 795.91 L521.8 804.82 L522.99 804.88 L524.18 804.94 L525.37 805 L526.56 805.07 L527.75 805.13 L528.94 805.19 L530.13 805.25 L531.32 805.31 L532.51 805.37 L533.7 805.43 L534.89 805.49 L536.08 805.55 L537.27 805.61 L538.46 805.68 L539.65 805.74 L540.84 805.8 L542.03 805.86 L543.22 805.92 L544.41 805.98 L545.6 806.04 L546.79 806.1 L547.98 806.16 L549.17 806.22 L550.36 806.29 L551.55 806.35 L552.74 806.41 L553.93 805.56 L555.12 804.18 L556.31 802.8 L557.5 802.05 L558.69 802.11 L559.88 802.17 L561.07 802.23 L562.26 802.29 L563.45 802.36 L564.64 802.42 L565.83 802.48 L567.02 802.54 L568.21 802.6 L569.4 802.66 L570.59 802.72 L571.78 802.78 L572.97 802.84 L574.16 802.9 L575.35 802.97 L576.54 803.03 L577.73 803.09 L578.92 803.15 L580.11 803.21 L581.3 803.27 L582.49 804.14 L583.68 805.64 L584.87 807.14 L586.06 808.11 L587.25 808.18 L588.44 808.24 L589.63 808.3 L590.82 808.36 L592.01 808.42 L593.2 808.48 L594.39 808.54 L595.58 808.6 L596.77 808.66 L597.96 808.72 L599.15 808.79 L600.34 808.85 L601.53 808.91 L602.72 808.97 L603.91 809.03 L605.1 809.09 L606.29 809.15 L607.48 809.21 L608.67 809.27 L609.86 809.33 L611.05 809.4 L612.24 809.46 L613.43 809.52 L614.62 809.58 L615.81 809.64 L617 809.7" fill="none" stroke="#7e7e7e" stroke-width="0.700"/><path d="M422.2 794.63 L423.41 794.71 L424.61 794.79 L425.82 794.87 L427.02 794.95 L428.23 795.04 L429.44 795.12 L430.64 795.2 L431.85 795.28 L433.06 795.36 L434.26 795.44 L435.47 795.53 L436.68 795.61 L437.88 795.69 L439.09 795.77 L440.29 795.85 L441.5 795.94 L442.71 796.02 L443.91 796.1 L445.12 796.18 L446.32 796.26 L447.53 796.35 L448.74 796.43 L449.94 796.51 L451.15 796.59 L452.36 796.85 L453.56 798.54 L454.77 800.23 L455.98 801.42 L457.18 801.5 L458.39 801.58 L459.59 801.66 L460.8 801.75 L462.01 801.83 L463.21 801.91 L464.42 801.99 L465.62 802.07 L466.83 802.16 L468.04 802.24 L469.24 802.32 L470.45 802.4 L471.66 802.48 L472.86 802.56 L474.07 802.65 L475.28 802.73 L476.48 802.81 L477.69 802.89 L478.89 802.97 L480.1 803.06 L481.31 803.14 L482.51 803.22 L483.72 802.94 L484.93 801.41 L486.13 799.89 L487.34 799.05 L488.54 799.1 L489.75 799.15 L490.96 799.2 L492.16 799.26 L493.37 799.35 L494.58 799.43 L495.78 799.51 L496.99 799.59 L498.19 799.67 L499.4 799.76 L500.61 799.84 L501.81 799.92 L503.02 800 L504.23 800.08 L505.43 800.16 L506.64 800.25 L507.84 800.33 L509.05 800.41 L510.26 800.49 L511.46 800.57 L512.67 800.66 L513.88 800.74 L515.08 800.82 L516.29 800.9 L517.49 800.98 L518.7 801.07 L521.8 808.41 L522.99 808.48 L524.18 808.55 L525.37 808.63 L526.56 808.7 L527.75 808.77 L528.94 808.84 L530.13 808.92 L531.32 808.99 L532.51 809.06 L533.7 809.13 L534.89 809.21 L536.08 809.28 L537.27 809.35 L538.46 809.42 L539.65 809.49 L540.84 809.57 L542.03 809.64 L543.22 809.71 L544.41 809.78 L545.6 809.86 L546.79 809.93 L547.98 810 L549.17 810.07 L550.36 810.15 L551.55 809.68 L552.74 808.32 L553.93 806.95 L555.12 805.84 L556.31 805.91 L557.5 805.98 L558.69 806.05 L559.88 806.13 L561.07 806.2 L562.26 806.27 L563.45 806.31 L564.64 806.36 L565.83 806.41 L567.02 806.46 L568.21 806.53 L569.4 806.6 L570.59 806.68 L571.78 806.75 L572.97 806.82 L574.16 806.89 L575.35 806.97 L576.54 807.04 L577.73 807.11 L578.92 807.18 L580.11 807.26 L581.3 807.33 L582.49 807.4 L583.68 807.47 L584.87 808.73 L586.06 810.24 L587.25 811.75 L588.44 812.36 L589.63 812.43 L590.82 812.51 L592.01 812.58 L593.2 812.65 L594.39 812.72 L595.58 812.8 L596.77 812.87 L597.96 812.94 L599.15 813.01 L600.34 813.09 L601.53 813.16 L602.72 813.23 L603.91 813.3 L605.1 813.38 L606.29 813.45 L607.48 813.52 L608.67 813.59 L609.86 813.67 L611.05 813.74 L612.24 813.81 L613.43 813.88 L614.62 813.96 L615.81 814.03 L617 814.1" fill="none" stroke="#7e7e7e" stroke-width="0.700"/><path d="M422.2 798.99 L423.41 799.09 L424.61 799.2 L425.82 799.3 L427.02 799.41 L428.23 799.51 L429.44 799.62 L430.64 799.73 L431.85 799.83 L433.06 799.94 L434.26 800.04 L435.47 800.15 L436.68 800.25 L437.88 800.36 L439.09 800.46 L440.29 800.57 L441.5 800.68 L442.71 800.78 L443.91 800.89 L445.12 800.99 L446.32 801.1 L447.53 801.2 L448.74 801.31 L449.94 801.41 L451.15 802.91 L452.36 804.62 L453.56 806.23 L454.77 806.34 L455.98 806.44 L457.18 806.55 L458.39 806.65 L459.59 806.76 L460.8 806.86 L462.01 806.97 L463.21 807.07 L464.42 807.18 L465.62 807.29 L466.83 807.39 L468.04 807.5 L469.24 807.6 L470.45 807.71 L471.66 807.81 L472.86 807.92 L474.07 808.02 L475.28 808.13 L476.48 808.24 L477.69 808.34 L478.89 808.45 L480.1 808.55 L481.31 808.66 L482.51 808.76 L483.72 808.78 L484.93 808.55 L486.13 807.54 L487.34 805.7 L488.54 804.08 L489.75 803.68 L490.96 803.79 L492.16 803.9 L493.37 804 L494.58 804.11 L495.78 804.21 L496.99 804.32 L498.19 804.42 L499.4 804.53 L500.61 804.63 L501.81 804.74 L503.02 804.85 L504.23 804.95 L505.43 805.06 L506.64 805.16 L507.84 805.27 L509.05 805.37 L510.26 805.48 L511.46 805.58 L512.67 805.69 L513.88 805.8 L515.08 805.9 L516.29 806.01 L517.49 806.11 L518.7 806.22 L521.8 812 L522.99 812.09 L524.18 812.19 L525.37 812.28 L526.56 812.38 L527.75 812.47 L528.94 812.57 L530.13 812.66 L531.32 812.76 L532.51 812.85 L533.7 812.95 L534.89 813.04 L536.08 813.14 L537.27 813.23 L538.46 813.33 L539.65 813.42 L540.84 813.52 L542.03 813.61 L543.22 813.71 L544.41 813.81 L545.6 813.9 L546.79 814 L547.98 814.09 L549.17 814.02 L550.36 812.68 L551.55 811.34 L552.74 810 L553.93 809.97 L555.12 810.06 L556.31 810.16 L557.5 810.25 L558.69 810.35 L559.88 810.44 L561.07 810.54 L562.26 810.63 L563.45 810.68 L564.64 810.5 L565.83 810.31 L567.02 810.13 L568.21 809.99 L569.4 810.09 L570.59 810.19 L571.78 810.28 L572.97 810.38 L574.16 810.47 L575.35 810.57 L576.54 810.66 L577.73 810.76 L578.92 810.85 L580.11 810.95 L581.3 811.04 L582.49 811.14 L583.68 811.23 L584.87 811.33 L586.06 811.55 L587.25 813.08 L588.44 814.61 L589.63 816.15 L590.82 816.4 L592.01 816.5 L593.2 816.59 L594.39 816.69 L595.58 816.79 L596.77 816.88 L597.96 816.98 L599.15 817.07 L600.34 817.17 L601.53 817.26 L602.72 817.36 L603.91 817.45 L605.1 817.55 L606.29 817.64 L607.48 817.74 L608.67 817.83 L609.86 817.93 L611.05 818.02 L612.24 818.12 L613.43 818.21 L614.62 818.31 L615.81 818.4 L617 818.5" fill="none" stroke="#7e7e7e" stroke-width="0.700"/><path d="M422.2 803.35 L423.41 803.48 L424.61 803.61 L425.82 803.74 L427.02 803.86 L428.23 803.99 L429.44 804.12 L430.64 804.25 L431.85 804.38 L433.06 804.51 L434.26 804.64 L435.47 804.77 L436.68 804.9 L437.88 805.03 L439.09 805.16 L440.29 805.29 L441.5 805.41 L442.71 805.54 L443.91 805.67 L445.12 805.8 L446.32 805.93 L447.53 806.06 L448.74 807.14 L449.94 808.88 L451.15 810.61 L452.36 811.08 L453.56 811.21 L454.77 811.34 L455.98 811.46 L457.18 811.59 L458.39 811.72 L459.59 811.85 L460.8 811.98 L462.01 812.11 L463.21 812.24 L464.42 812.37 L465.62 812.5 L466.83 812.63 L468.04 812.76 L469.24 812.89 L470.45 813.02 L471.66 813.14 L472.86 813.27 L474.07 813.4 L475.28 813.53 L476.48 813.66 L477.69 813.79 L478.89 813.92 L480.1 813.67 L481.31 813.16 L482.51 812.64 L483.72 812.13 L484.93 812.25 L486.13 812.38 L487.34 812.51 L488.54 811.44 L489.75 809.96 L490.96 808.48 L492.16 808.53 L493.37 808.66 L494.58 808.79 L495.78 808.92 L496.99 809.04 L498.19 809.17 L499.4 809.3 L500.61 809.43 L501.81 809.56 L503.02 809.69 L504.23 809.82 L505.43 809.95 L506.64 810.08 L507.84 810.21 L509.05 810.34 L510.26 810.47 L511.46 810.59 L512.67 810.72 L513.88 810.85 L515.08 810.98 L516.29 811.11 L517.49 811.24 L518.7 811.37 L521.8 815.58 L522.99 815.7 L524.18 815.82 L525.37 815.94 L526.56 816.05 L527.75 816.17 L528.94 816.29 L530.13 816.41 L531.32 816.53 L532.51 816.65 L533.7 816.76 L534.89 816.88 L536.08 817 L537.27 817.12 L538.46 817.24 L539.65 817.35 L540.84 817.47 L542.03 817.59 L543.22 817.71 L544.41 817.83 L545.6 817.94 L546.79 818.06 L547.98 816.96 L549.17 815.64 L550.36 814.32 L551.55 813.94 L552.74 814.05 L553.93 814.17 L555.12 814.29 L556.31 814.41 L557.5 814.53 L558.69 814.64 L559.88 814.76 L561.07 814.88 L562.26 815 L563.45 815.12 L564.64 815.17 L565.83 814.75 L567.02 814.34 L568.21 813.92 L569.4 813.58 L570.59 813.69 L571.78 813.81 L572.97 813.93 L574.16 814.05 L575.35 814.17 L576.54 814.28 L577.73 814.4 L578.92 814.52 L580.11 814.64 L581.3 814.76 L582.49 814.88 L583.68 814.99 L584.87 815.11 L586.06 815.23 L587.25 815.35 L588.44 815.97 L589.63 817.52 L590.82 819.08 L592.01 820.42 L593.2 820.54 L594.39 820.66 L595.58 820.77 L596.77 820.89 L597.96 821.01 L599.15 821.13 L600.34 821.25 L601.53 821.36 L602.72 821.48 L603.91 821.6 L605.1 821.72 L606.29 821.84 L607.48 821.96 L608.67 822.07 L609.86 822.19 L611.05 822.31 L612.24 822.43 L613.43 822.55 L614.62 822.66 L615.81 822.78 L617 822.9" fill="none" stroke="#7e7e7e" stroke-width="0.700"/><path d="M422.2 807.71 L423.41 807.86 L424.61 808.01 L425.82 808.17 L427.02 808.32 L428.23 808.47 L429.44 808.63 L430.64 808.78 L431.85 808.93 L433.06 809.08 L434.26 809.24 L435.47 809.39 L436.68 809.54 L437.88 809.7 L439.09 809.85 L440.29 810 L441.5 810.15 L442.71 810.31 L443.91 810.46 L445.12 810.61 L446.32 811.25 L447.53 813.01 L448.74 814.77 L449.94 815.72 L451.15 815.88 L452.36 816.03 L453.56 816.18 L454.77 816.34 L455.98 816.49 L457.18 816.64 L458.39 816.79 L459.59 816.95 L460.8 817.1 L462.01 817.25 L463.21 817.41 L464.42 817.56 L465.62 817.71 L466.83 817.86 L468.04 818.02 L469.24 818.17 L470.45 818.32 L471.66 818.48 L472.86 818.63 L474.07 818.78 L475.28 818.93 L476.48 818.21 L477.69 817.41 L478.89 816.62 L480.1 816.13 L481.31 816.28 L482.51 816.44 L483.72 816.59 L484.93 816.74 L486.13 816.89 L487.34 817.05 L488.54 817.2 L489.75 817.34 L490.96 815.89 L492.16 814.43 L493.37 813.31 L494.58 813.46 L495.78 813.62 L496.99 813.77 L498.19 813.92 L499.4 814.08 L500.61 814.23 L501.81 814.38 L503.02 814.53 L504.23 814.69 L505.43 814.84 L506.64 814.99 L507.84 815.15 L509.05 815.3 L510.26 815.45 L511.46 815.6 L512.67 815.76 L513.88 815.91 L515.08 816.06 L516.29 816.22 L517.49 816.37 L518.7 816.52 L521.8 819.17 L522.99 819.31 L524.18 819.45 L525.37 819.59 L526.56 819.73 L527.75 819.87 L528.94 820.02 L530.13 820.16 L531.32 820.3 L532.51 820.44 L533.7 820.58 L534.89 820.72 L536.08 820.86 L537.27 821 L538.46 821.14 L539.65 821.28 L540.84 821.42 L542.03 821.57 L543.22 821.71 L544.41 821.85 L545.6 821.14 L546.79 819.84 L547.98 818.55 L549.17 817.81 L550.36 817.95 L551.55 818.09 L552.74 818.23 L553.93 818.37 L555.12 818.52 L556.31 818.66 L557.5 818.8 L558.69 818.94 L559.88 819.08 L561.07 819.22 L562.26 819.36 L563.45 819.5 L564.64 819.64 L565.83 819.72 L567.02 819.07 L568.21 818.43 L569.4 817.78 L570.59 817.2 L571.78 817.34 L572.97 817.49 L574.16 817.63 L575.35 817.77 L576.54 817.91 L577.73 818.05 L578.92 818.19 L580.11 818.33 L581.3 818.47 L582.49 818.61 L583.68 818.75 L584.87 818.89 L586.06 819.04 L587.25 819.18 L588.44 819.32 L589.63 819.46 L590.82 820.47 L592.01 822.05 L593.2 823.63 L594.39 824.62 L595.58 824.76 L596.77 824.9 L597.96 825.04 L599.15 825.19 L600.34 825.33 L601.53 825.47 L602.72 825.61 L603.91 825.75 L605.1 825.89 L606.29 826.03 L607.48 826.17 L608.67 826.31 L609.86 826.45 L611.05 826.6 L612.24 826.74 L613.43 826.88 L614.62 827.02 L615.81 827.16 L617 827.3" fill="none" stroke="#7e7e7e" stroke-width="0.700"/><path d="M422.2 812.07 L423.41 812.24 L424.61 812.4 L425.82 812.57 L427.02 812.74 L428.23 812.91 L429.44 813.07 L430.64 813.24 L431.85 813.41 L433.06 813.58 L434.26 813.75 L435.47 813.91 L436.68 814.08 L437.88 814.25 L439.09 814.42 L440.29 814.58 L441.5 814.75 L442.71 814.92 L443.91 815.09 L445.12 816.85 L446.32 818.63 L447.53 820.09 L448.74 820.26 L449.94 820.42 L451.15 820.59 L452.36 820.76 L453.56 820.93 L454.77 821.09 L455.98 821.26 L457.18 821.43 L458.39 821.6 L459.59 821.76 L460.8 821.93 L462.01 822.1 L463.21 822.27 L464.42 822.43 L465.62 822.6 L466.83 822.77 L468.04 822.94 L469.24 823.1 L470.45 823.27 L471.66 823.16 L472.86 822.27 L474.07 821.38 L475.28 820.49 L476.48 820.31 L477.69 820.48 L478.89 820.64 L480.1 820.81 L481.31 820.98 L482.51 821.15 L483.72 821.31 L484.93 821.48 L486.13 821.65 L487.34 821.82 L488.54 821.99 L489.75 822.15 L490.96 822.32 L492.16 822.05 L493.37 820.61 L494.58 819.18 L495.78 818.49 L496.99 818.66 L498.19 818.83 L499.4 818.99 L500.61 819.16 L501.81 819.33 L503.02 819.5 L504.23 819.66 L505.43 819.83 L506.64 820 L507.84 820.17 L509.05 820.33 L510.26 820.5 L511.46 820.67 L512.67 820.84 L513.88 821 L515.08 821.17 L516.29 821.34 L517.49 821.51 L518.7 821.67 L521.8 822.76 L522.99 822.91 L524.18 823.07 L525.37 823.22 L526.56 823.38 L527.75 823.53 L528.94 823.69 L530.13 823.85 L531.32 824 L532.51 824.16 L533.7 824.31 L534.89 824.47 L536.08 824.62 L537.27 824.78 L538.46 824.93 L539.65 825.09 L540.84 825.25 L542.03 825.4 L543.22 825.08 L544.41 823.8 L545.6 822.52 L546.79 821.42 L547.98 821.58 L549.17 821.73 L550.36 821.89 L551.55 822.05 L552.74 822.2 L553.93 822.36 L555.12 822.51 L556.31 822.67 L557.5 822.82 L558.69 822.98 L559.88 823.13 L561.07 823.29 L562.26 823.45 L563.45 823.6 L564.64 823.76 L565.83 823.91 L567.02 824.03 L568.21 823.31 L569.4 822.59 L570.59 821.87 L571.78 821.19 L572.97 821.34 L574.16 821.5 L575.35 821.66 L576.54 821.81 L577.73 821.97 L578.92 822.12 L580.11 822.28 L581.3 822.43 L582.49 822.59 L583.68 822.74 L584.87 822.9 L586.06 823.06 L587.25 823.21 L588.44 823.37 L589.63 823.52 L590.82 823.68 L592.01 823.83 L593.2 825.24 L594.39 826.83 L595.58 828.43 L596.77 829.06 L597.96 829.21 L599.15 829.37 L600.34 829.52 L601.53 829.68 L602.72 829.83 L603.91 829.99 L605.1 830.14 L606.29 830.3 L607.48 830.46 L608.67 830.61 L609.86 830.77 L611.05 830.92 L612.24 831.08 L613.43 831.23 L614.62 831.39 L615.81 831.54 L617 831.7" fill="none" stroke="#7e7e7e" stroke-width="0.700"/><path d="M422.2 816.43 L423.41 816.61 L424.61 816.79 L425.82 816.96 L427.02 817.14 L428.23 817.32 L429.44 817.5 L430.64 817.67 L431.85 817.85 L433.06 818.03 L434.26 818.2 L435.47 818.38 L436.68 818.56 L437.88 818.74 L439.09 818.91 L440.29 819.09 L441.5 819.27 L442.71 820.53 L443.91 822.31 L445.12 824.1 L446.32 824.48 L447.53 824.66 L448.74 824.83 L449.94 825.01 L451.15 825.19 L452.36 825.37 L453.56 825.54 L454.77 825.72 L455.98 825.9 L457.18 826.08 L458.39 826.25 L459.59 826.43 L460.8 826.61 L462.01 826.79 L463.21 826.96 L464.42 827.14 L465.62 827.32 L466.83 827.5 L468.04 827.03 L469.24 826.16 L470.45 825.28 L471.66 824.41 L472.86 824.58 L474.07 824.76 L475.28 824.94 L476.48 825.12 L477.69 825.29 L478.89 825.47 L480.1 825.65 L481.31 825.83 L482.51 826 L483.72 826.18 L484.93 826.36 L486.13 826.54 L487.34 826.71 L488.54 826.89 L489.75 827.07 L490.96 827.24 L492.16 827.42 L493.37 827.6 L494.58 826.92 L495.78 825.49 L496.99 824.07 L498.19 823.81 L499.4 823.99 L500.61 824.16 L501.81 824.34 L503.02 824.52 L504.23 824.7 L505.43 824.87 L506.64 825.05 L507.84 825.23 L509.05 825.41 L510.26 825.58 L511.46 825.76 L512.67 825.94 L513.88 826.12 L515.08 826.29 L516.29 826.47 L517.49 826.65 L518.7 826.83 L521.8 826.34 L522.99 826.51 L524.18 826.67 L525.37 826.84 L526.56 827.01 L527.75 827.17 L528.94 827.34 L530.13 827.5 L531.32 827.67 L532.51 827.83 L533.7 828 L534.89 828.17 L536.08 828.33 L537.27 828.5 L538.46 828.66 L539.65 828.83 L540.84 828.89 L542.03 827.62 L543.22 826.35 L544.41 825.08 L545.6 825.06 L546.79 825.22 L547.98 825.39 L549.17 825.55 L550.36 825.72 L551.55 825.89 L552.74 826.05 L553.93 826.22 L555.12 826.38 L556.31 826.55 L557.5 826.71 L558.69 826.88 L559.88 827.05 L561.07 827.21 L562.26 827.38 L563.45 827.54 L564.64 827.71 L565.83 827.87 L567.02 828.04 L568.21 828.21 L569.4 827.5 L570.59 826.79 L571.78 826.08 L572.97 825.37 L574.16 825.53 L575.35 825.7 L576.54 825.87 L577.73 826.03 L578.92 826.2 L580.11 826.36 L581.3 826.53 L582.49 826.69 L583.68 826.86 L584.87 827.03 L586.06 827.19 L587.25 827.36 L588.44 827.52 L589.63 827.69 L590.82 827.85 L592.01 828.02 L593.2 828.19 L594.39 828.54 L595.58 830.14 L596.77 831.75 L597.96 833.35 L599.15 833.61 L600.34 833.78 L601.53 833.95 L602.72 834.11 L603.91 834.28 L605.1 834.44 L606.29 834.61 L607.48 834.77 L608.67 834.94 L609.86 835.11 L611.05 835.27 L612.24 835.44 L613.43 835.6 L614.62 835.77 L615.81 835.93 L617 836.1" fill="none" stroke="#7e7e7e" stroke-width="0.700"/><path d="M422.2 820.79 L423.41 820.98 L424.61 821.17 L425.82 821.35 L427.02 821.54 L428.23 821.73 L429.44 821.92 L430.64 822.1 L431.85 822.29 L433.06 822.48 L434.26 822.66 L435.47 822.85 L436.68 823.04 L437.88 823.23 L439.09 823.41 L440.29 824.14 L441.5 825.94 L442.71 827.73 L443.91 828.66 L445.12 828.85 L446.32 829.04 L447.53 829.23 L448.74 829.41 L449.94 829.6 L451.15 829.79 L452.36 829.97 L453.56 830.16 L454.77 830.35 L455.98 830.54 L457.18 830.72 L458.39 830.91 L459.59 831.1 L460.8 831.29 L462.01 831.47 L463.21 831.66 L464.42 830.85 L465.62 829.98 L466.83 829.11 L468.04 828.61 L469.24 828.8 L470.45 828.98 L471.66 829.17 L472.86 829.36 L474.07 829.55 L475.28 829.73 L476.48 829.92 L477.69 830.11 L478.89 830.3 L480.1 830.48 L481.31 830.67 L482.51 830.86 L483.72 831.05 L484.93 831.23 L486.13 831.42 L487.34 831.61 L488.54 831.79 L489.75 831.98 L490.96 832.17 L492.16 832.36 L493.37 832.54 L494.58 832.73 L495.78 832.92 L496.99 831.83 L498.19 830.41 L499.4 828.99 L500.61 829.17 L501.81 829.36 L503.02 829.54 L504.23 829.73 L505.43 829.92 L506.64 830.1 L507.84 830.29 L509.05 830.48 L510.26 830.67 L511.46 830.85 L512.67 831.04 L513.88 831.23 L515.08 831.42 L516.29 831.6 L517.49 831.79 L518.7 831.98 L521.8 829.93 L522.99 830.11 L524.18 830.28 L525.37 830.46 L526.56 830.63 L527.75 830.81 L528.94 830.99 L530.13 831.16 L531.32 831.34 L532.51 831.51 L533.7 831.69 L534.89 831.87 L536.08 832.04 L537.27 832.22 L538.46 832.39 L539.65 831.41 L540.84 830.14 L542.03 828.88 L543.22 828.5 L544.41 828.67 L545.6 828.85 L546.79 829.02 L547.98 829.2 L549.17 829.38 L550.36 829.55 L551.55 829.73 L552.74 829.9 L553.93 830.08 L555.12 830.25 L556.31 830.43 L557.5 830.61 L558.69 830.78 L559.88 830.96 L561.07 831.13 L562.26 831.31 L563.45 831.49 L564.64 831.66 L565.83 831.84 L567.02 832.01 L568.21 832.19 L569.4 832.37 L570.59 831.71 L571.78 831.01 L572.97 830.31 L574.16 829.61 L575.35 829.74 L576.54 829.92 L577.73 830.1 L578.92 830.27 L580.11 830.45 L581.3 830.62 L582.49 830.8 L583.68 830.98 L584.87 831.15 L586.06 831.33 L587.25 831.5 L588.44 831.68 L589.63 831.85 L590.82 832.03 L592.01 832.21 L593.2 832.38 L594.39 832.56 L595.58 832.73 L596.77 833.47 L597.96 835.09 L599.15 836.7 L600.34 838.04 L601.53 838.21 L602.72 838.39 L603.91 838.57 L605.1 838.74 L606.29 838.92 L607.48 839.09 L608.67 839.27 L609.86 839.44 L611.05 839.62 L612.24 839.8 L613.43 839.97 L614.62 840.15 L615.81 840.32 L617 840.5" fill="none" stroke="#7e7e7e" stroke-width="0.700"/><path d="M422.2 825.15 L423.41 825.35 L424.61 825.55 L425.82 825.74 L427.02 825.94 L428.23 826.14 L429.44 826.34 L430.64 826.53 L431.85 826.73 L433.06 826.93 L434.26 827.12 L435.47 827.32 L436.68 827.52 L437.88 827.72 L439.09 829.5 L440.29 831.3 L441.5 832.81 L442.71 833.01 L443.91 833.2 L445.12 833.4 L446.32 833.6 L447.53 833.79 L448.74 833.99 L449.94 834.19 L451.15 834.39 L452.36 834.58 L453.56 834.78 L454.77 834.98 L455.98 835.17 L457.18 835.37 L458.39 835.57 L459.59 835.47 L460.8 834.61 L462.01 833.75 L463.21 832.89 L464.42 832.76 L465.62 832.95 L466.83 833.15 L468.04 833.35 L469.24 833.54 L470.45 833.74 L471.66 833.94 L472.86 834.14 L474.07 834.33 L475.28 834.53 L476.48 834.73 L477.69 834.92 L478.89 835.12 L480.1 835.32 L481.31 835.52 L482.51 835.71 L483.72 835.91 L484.93 836.11 L486.13 836.31 L487.34 836.5 L488.54 836.7 L489.75 836.9 L490.96 837.09 L492.16 837.29 L493.37 837.49 L494.58 837.69 L495.78 837.88 L496.99 838.08 L498.19 838.19 L499.4 836.78 L500.61 835.37 L501.81 834.37 L503.02 834.57 L504.23 834.76 L505.43 834.96 L506.64 835.16 L507.84 835.36 L509.05 835.55 L510.26 835.75 L511.46 835.95 L512.67 836.14 L513.88 836.34 L515.08 836.54 L516.29 836.74 L517.49 836.93 L518.7 837.13 L521.8 833.52 L522.99 833.7 L524.18 833.89 L525.37 834.08 L526.56 834.26 L527.75 834.45 L528.94 834.63 L530.13 834.82 L531.32 835.01 L532.51 835.19 L533.7 835.38 L534.89 835.56 L536.08 835.75 L537.27 835.15 L538.46 833.9 L539.65 832.65 L540.84 831.89 L542.03 832.08 L543.22 832.27 L544.41 832.45 L545.6 832.64 L546.79 832.82 L547.98 833.01 L549.17 833.2 L550.36 833.38 L551.55 833.57 L552.74 833.75 L553.93 833.94 L555.12 834.13 L556.31 834.31 L557.5 834.5 L558.69 834.68 L559.88 834.87 L561.07 835.06 L562.26 835.24 L563.45 835.43 L564.64 835.61 L565.83 835.8 L567.02 835.99 L568.21 836.17 L569.4 836.36 L570.59 836.54 L571.78 835.93 L572.97 835.24 L574.16 834.56 L575.35 833.87 L576.54 833.97 L577.73 834.16 L578.92 834.35 L580.11 834.53 L581.3 834.72 L582.49 834.91 L583.68 835.09 L584.87 835.28 L586.06 835.46 L587.25 835.65 L588.44 835.84 L589.63 836.02 L590.82 836.21 L592.01 836.39 L593.2 836.58 L594.39 836.77 L595.58 836.95 L596.77 837.14 L597.96 837.32 L599.15 838.45 L600.34 840.07 L601.53 841.69 L602.72 842.67 L603.91 842.85 L605.1 843.04 L606.29 843.23 L607.48 843.41 L608.67 843.6 L609.86 843.78 L611.05 843.97 L612.24 844.16 L613.43 844.34 L614.62 844.53 L615.81 844.71 L617 844.9" fill="none" stroke="#7e7e7e" stroke-width="0.700"/><path d="M422.2 829.51 L423.41 829.72 L424.61 829.93 L425.82 830.13 L427.02 830.34 L428.23 830.55 L429.44 830.76 L430.64 830.96 L431.85 831.17 L433.06 831.38 L434.26 831.58 L435.47 831.79 L436.68 833 L437.88 834.82 L439.09 836.63 L440.29 837.12 L441.5 837.33 L442.71 837.53 L443.91 837.74 L445.12 837.95 L446.32 838.16 L447.53 838.36 L448.74 838.57 L449.94 838.78 L451.15 838.98 L452.36 839.19 L453.56 839.4 L454.77 839.61 L455.98 839.15 L457.18 838.31 L458.39 837.46 L459.59 836.63 L460.8 836.84 L462.01 837.05 L463.21 837.26 L464.42 837.46 L465.62 837.67 L466.83 837.88 L468.04 838.08 L469.24 838.29 L470.45 838.5 L471.66 838.7 L472.86 838.91 L474.07 839.12 L475.28 839.33 L476.48 839.53 L477.69 839.74 L478.89 839.95 L480.1 840.15 L481.31 840.36 L482.51 840.57 L483.72 840.78 L484.93 840.98 L486.13 841.19 L487.34 841.4 L488.54 841.6 L489.75 841.81 L490.96 842.02 L492.16 842.23 L493.37 842.43 L494.58 842.64 L495.78 842.85 L496.99 843.05 L498.19 843.26 L499.4 843.47 L500.61 843.17 L501.81 841.77 L503.02 840.37 L504.23 839.8 L505.43 840 L506.64 840.21 L507.84 840.42 L509.05 840.63 L510.26 840.83 L511.46 841.04 L512.67 841.25 L513.88 841.45 L515.08 841.66 L516.29 841.87 L517.49 842.08 L518.7 842.28 L521.8 837.1 L522.99 837.3 L524.18 837.5 L525.37 837.69 L526.56 837.89 L527.75 838.09 L528.94 838.28 L530.13 838.48 L531.32 838.67 L532.51 838.87 L533.7 839.07 L534.89 838.85 L536.08 837.61 L537.27 836.37 L538.46 835.25 L539.65 835.45 L540.84 835.64 L542.03 835.84 L543.22 836.04 L544.41 836.23 L545.6 836.43 L546.79 836.62 L547.98 836.82 L549.17 837.02 L550.36 837.21 L551.55 837.41 L552.74 837.61 L553.93 837.8 L555.12 838 L556.31 838.19 L557.5 838.39 L558.69 838.59 L559.88 838.78 L561.07 838.98 L562.26 839.18 L563.45 839.37 L564.64 839.57 L565.83 839.76 L567.02 839.96 L568.21 840.16 L569.4 840.35 L570.59 840.55 L571.78 840.74 L572.97 840.18 L574.16 839.5 L575.35 838.82 L576.54 838.14 L577.73 838.23 L578.92 838.42 L580.11 838.62 L581.3 838.81 L582.49 839.01 L583.68 839.21 L584.87 839.4 L586.06 839.6 L587.25 839.8 L588.44 839.99 L589.63 840.19 L590.82 840.38 L592.01 840.58 L593.2 840.78 L594.39 840.97 L595.58 841.17 L596.77 841.36 L597.96 841.56 L599.15 841.76 L600.34 841.95 L601.53 843.46 L602.72 845.1 L603.91 846.73 L605.1 847.34 L606.29 847.53 L607.48 847.73 L608.67 847.93 L609.86 848.12 L611.05 848.32 L612.24 848.52 L613.43 848.71 L614.62 848.91 L615.81 849.1 L617 849.3" fill="none" stroke="#7e7e7e" stroke-width="0.700"/><path d="M422.2 833.87 L423.41 834.09 L424.61 834.31 L425.82 834.52 L427.02 834.74 L428.23 834.96 L429.44 835.18 L430.64 835.39 L431.85 835.61 L433.06 835.83 L434.26 836.45 L435.47 838.28 L436.68 840.1 L437.88 841.2 L439.09 841.41 L440.29 841.63 L441.5 841.85 L442.71 842.06 L443.91 842.28 L445.12 842.5 L446.32 842.71 L447.53 842.93 L448.74 843.15 L449.94 843.37 L451.15 843.58 L452.36 842.78 L453.56 841.95 L454.77 841.11 L455.98 840.65 L457.18 840.87 L458.39 841.08 L459.59 841.3 L460.8 841.52 L462.01 841.74 L463.21 841.95 L464.42 842.17 L465.62 842.39 L466.83 842.6 L468.04 842.82 L469.24 843.04 L470.45 843.25 L471.66 843.47 L472.86 843.69 L474.07 843.91 L475.28 844.12 L476.48 844.34 L477.69 844.56 L478.89 844.77 L480.1 844.99 L481.31 845.21 L482.51 845.42 L483.72 845.64 L484.93 845.86 L486.13 846.08 L487.34 846.29 L488.54 846.51 L489.75 846.73 L490.96 846.94 L492.16 847.16 L493.37 847.38 L494.58 847.59 L495.78 847.81 L496.99 848.03 L498.19 848.25 L499.4 848.46 L500.61 848.68 L501.81 848.9 L503.02 848.19 L504.23 846.8 L505.43 845.41 L506.64 845.26 L507.84 845.48 L509.05 845.7 L510.26 845.92 L511.46 846.13 L512.67 846.35 L513.88 846.57 L515.08 846.78 L516.29 847 L517.49 847.22 L518.7 847.43 L521.8 840.69 L522.99 840.9 L524.18 841.1 L525.37 841.31 L526.56 841.52 L527.75 841.72 L528.94 841.93 L530.13 842.14 L531.32 842.34 L532.51 842.51 L533.7 841.28 L534.89 840.05 L536.08 838.82 L537.27 838.77 L538.46 838.98 L539.65 839.19 L540.84 839.39 L542.03 839.6 L543.22 839.81 L544.41 840.01 L545.6 840.22 L546.79 840.42 L547.98 840.63 L549.17 840.84 L550.36 841.04 L551.55 841.25 L552.74 841.46 L553.93 841.66 L555.12 841.87 L556.31 842.08 L557.5 842.28 L558.69 842.49 L559.88 842.69 L561.07 842.9 L562.26 843.11 L563.45 843.31 L564.64 843.52 L565.83 843.73 L567.02 843.93 L568.21 844.14 L569.4 844.35 L570.59 844.55 L571.78 844.76 L572.97 844.96 L574.16 844.45 L575.35 843.78 L576.54 843.11 L577.73 842.44 L578.92 842.5 L580.11 842.7 L581.3 842.91 L582.49 843.12 L583.68 843.32 L584.87 843.53 L586.06 843.73 L587.25 843.94 L588.44 844.15 L589.63 844.35 L590.82 844.56 L592.01 844.77 L593.2 844.97 L594.39 845.18 L595.58 845.39 L596.77 845.59 L597.96 845.8 L599.15 846 L600.34 846.21 L601.53 846.42 L602.72 846.87 L603.91 848.52 L605.1 850.16 L606.29 851.81 L607.48 852.05 L608.67 852.26 L609.86 852.46 L611.05 852.67 L612.24 852.87 L613.43 853.08 L614.62 853.29 L615.81 853.49 L617 853.7" fill="none" stroke="#7e7e7e" stroke-width="0.700"/><path d="M422.2 838.23 L423.41 838.46 L424.61 838.69 L425.82 838.92 L427.02 839.14 L428.23 839.37 L429.44 839.6 L430.64 839.82 L431.85 840.05 L433.06 841.68 L434.26 843.51 L435.47 845.23 L436.68 845.46 L437.88 845.68 L439.09 845.91 L440.29 846.14 L441.5 846.37 L442.71 846.59 L443.91 846.82 L445.12 847.05 L446.32 847.27 L447.53 847.18 L448.74 846.35 L449.94 845.52 L451.15 844.7 L452.36 844.61 L453.56 844.83 L454.77 845.06 L455.98 845.29 L457.18 845.51 L458.39 845.74 L459.59 845.97 L460.8 846.2 L462.01 846.42 L463.21 846.65 L464.42 846.88 L465.62 847.1 L466.83 847.33 L468.04 847.56 L469.24 847.78 L470.45 848.01 L471.66 848.24 L472.86 848.46 L474.07 848.69 L475.28 848.92 L476.48 849.15 L477.69 849.37 L478.89 849.6 L480.1 849.83 L481.31 850.05 L482.51 850.28 L483.72 850.51 L484.93 850.73 L486.13 850.96 L487.34 851.19 L488.54 851.41 L489.75 851.64 L490.96 851.87 L492.16 852.1 L493.37 852.32 L494.58 852.55 L495.78 852.78 L496.99 853 L498.19 853.23 L499.4 853.46 L500.61 853.68 L501.81 853.91 L503.02 854.14 L504.23 854.36 L505.43 853.25 L506.64 851.87 L507.84 850.54 L509.05 850.77 L510.26 851 L511.46 851.23 L512.67 851.45 L513.88 851.68 L515.08 851.91 L516.29 852.13 L517.49 852.36 L518.7 852.59 L521.8 844.28 L522.99 844.49 L524.18 844.69 L525.37 844.9 L526.56 845.11 L527.75 845.32 L528.94 845.53 L530.13 845.73 L531.32 844.84 L532.51 843.61 L533.7 842.38 L534.89 841.97 L536.08 842.17 L537.27 842.38 L538.46 842.59 L539.65 842.8 L540.84 843.01 L542.03 843.21 L543.22 843.42 L544.41 843.63 L545.6 843.84 L546.79 844.05 L547.98 844.25 L549.17 844.46 L550.36 844.67 L551.55 844.88 L552.74 845.09 L553.93 845.29 L555.12 845.5 L556.31 845.71 L557.5 845.92 L558.69 846.13 L559.88 846.33 L561.07 846.54 L562.26 846.75 L563.45 846.96 L564.64 847.16 L565.83 847.37 L567.02 847.58 L568.21 847.79 L569.4 848 L570.59 848.2 L571.78 848.41 L572.97 848.62 L574.16 848.83 L575.35 848.49 L576.54 847.99 L577.73 847.5 L578.92 847 L580.11 847.05 L581.3 847.26 L582.49 847.47 L583.68 847.68 L584.87 847.89 L586.06 848.09 L587.25 848.3 L588.44 848.51 L589.63 848.72 L590.82 848.92 L592.01 849.13 L593.2 849.34 L594.39 849.55 L595.58 849.76 L596.77 849.96 L597.96 850.17 L599.15 850.38 L600.34 850.59 L601.53 850.8 L602.72 851 L603.91 851.21 L605.1 852.05 L606.29 853.69 L607.48 855.34 L608.67 856.64 L609.86 856.85 L611.05 857.06 L612.24 857.27 L613.43 857.48 L614.62 857.68 L615.81 857.89 L617 858.1" fill="none" stroke="#7e7e7e" stroke-width="0.700"/><path d="M422.2 842.6 L423.41 842.83 L424.61 843.07 L425.82 843.31 L427.02 843.54 L428.23 843.78 L429.44 844.02 L430.64 845.03 L431.85 846.87 L433.06 848.71 L434.26 849.46 L435.47 849.7 L436.68 849.94 L437.88 850.17 L439.09 850.41 L440.29 850.65 L441.5 850.88 L442.71 851.12 L443.91 850.68 L445.12 849.86 L446.32 849.04 L447.53 848.27 L448.74 848.51 L449.94 848.74 L451.15 848.98 L452.36 849.22 L453.56 849.45 L454.77 849.69 L455.98 849.93 L457.18 850.16 L458.39 850.4 L459.59 850.64 L460.8 850.87 L462.01 851.11 L463.21 851.35 L464.42 851.58 L465.62 851.82 L466.83 852.06 L468.04 852.29 L469.24 852.53 L470.45 852.77 L471.66 853 L472.86 853.24 L474.07 853.48 L475.28 853.71 L476.48 853.95 L477.69 854.19 L478.89 854.42 L480.1 854.66 L481.31 854.9 L482.51 855.14 L483.72 855.37 L484.93 855.61 L486.13 855.85 L487.34 856.08 L488.54 856.32 L489.75 856.56 L490.96 856.79 L492.16 857.03 L493.37 857.27 L494.58 857.5 L495.78 857.74 L496.99 857.98 L498.19 858.21 L499.4 858.45 L500.61 858.69 L501.81 858.92 L503.02 859.16 L504.23 859.4 L505.43 859.63 L506.64 859.72 L507.84 858.35 L509.05 856.98 L510.26 856.08 L511.46 856.32 L512.67 856.56 L513.88 856.79 L515.08 857.03 L516.29 857.27 L517.49 857.5 L518.7 857.74 L521.8 847.87 L522.99 848.07 L524.18 848.28 L525.37 848.49 L526.56 848.7 L527.75 848.91 L528.94 848.39 L530.13 847.16 L531.32 845.93 L532.51 845.14 L533.7 845.35 L534.89 845.56 L536.08 845.77 L537.27 845.98 L538.46 846.19 L539.65 846.39 L540.84 846.6 L542.03 846.81 L543.22 847.02 L544.41 847.23 L545.6 847.44 L546.79 847.65 L547.98 847.85 L549.17 848.06 L550.36 848.27 L551.55 848.48 L552.74 848.69 L553.93 848.9 L555.12 849.11 L556.31 849.32 L557.5 849.52 L558.69 849.73 L559.88 849.94 L561.07 850.15 L562.26 850.36 L563.45 850.57 L564.64 850.78 L565.83 850.98 L567.02 851.19 L568.21 851.4 L569.4 851.61 L570.59 851.82 L571.78 852.03 L572.97 852.24 L574.16 852.44 L575.35 852.65 L576.54 852.48 L577.73 852.18 L578.92 851.87 L580.11 851.57 L581.3 851.64 L582.49 851.85 L583.68 852.06 L584.87 852.27 L586.06 852.48 L587.25 852.68 L588.44 852.89 L589.63 853.1 L590.82 853.31 L592.01 853.52 L593.2 853.73 L594.39 853.94 L595.58 854.14 L596.77 854.35 L597.96 854.56 L599.15 854.77 L600.34 854.98 L601.53 855.19 L602.72 855.4 L603.91 855.61 L605.1 855.81 L606.29 856.02 L607.48 857.23 L608.67 858.88 L609.86 860.52 L611.05 861.46 L612.24 861.67 L613.43 861.87 L614.62 862.08 L615.81 862.29 L617 862.5" fill="none" stroke="#7e7e7e" stroke-width="0.700"/><path d="M422.2 846.96 L423.41 847.2 L424.61 847.45 L425.82 847.7 L427.02 847.94 L428.23 848.32 L429.44 850.17 L430.64 852.03 L431.85 853.43 L433.06 853.68 L434.26 853.92 L435.47 854.17 L436.68 854.42 L437.88 854.66 L439.09 854.91 L440.29 854.12 L441.5 853.31 L442.71 852.51 L443.91 852.1 L445.12 852.34 L446.32 852.59 L447.53 852.84 L448.74 853.08 L449.94 853.33 L451.15 853.58 L452.36 853.82 L453.56 854.07 L454.77 854.32 L455.98 854.56 L457.18 854.81 L458.39 855.06 L459.59 855.3 L460.8 855.55 L462.01 855.8 L463.21 856.04 L464.42 856.29 L465.62 856.54 L466.83 856.78 L468.04 857.03 L469.24 857.28 L470.45 857.52 L471.66 857.77 L472.86 858.02 L474.07 858.26 L475.28 858.51 L476.48 858.76 L477.69 859 L478.89 859.25 L480.1 859.5 L481.31 859.74 L482.51 859.99 L483.72 860.24 L484.93 860.48 L486.13 860.73 L487.34 860.98 L488.54 861.22 L489.75 861.47 L490.96 861.72 L492.16 861.96 L493.37 862.21 L494.58 862.46 L495.78 862.7 L496.99 862.95 L498.19 863.2 L499.4 863.44 L500.61 863.69 L501.81 863.94 L503.02 864.18 L504.23 864.43 L505.43 864.68 L506.64 864.92 L507.84 865.17 L509.05 864.84 L510.26 863.48 L511.46 862.12 L512.67 861.66 L513.88 861.9 L515.08 862.15 L516.29 862.4 L517.49 862.64 L518.7 862.89 L521.8 851.45 L522.99 851.66 L524.18 851.87 L525.37 852.08 L526.56 851.94 L527.75 850.71 L528.94 849.48 L530.13 848.32 L531.32 848.53 L532.51 848.74 L533.7 848.94 L534.89 849.15 L536.08 849.36 L537.27 849.57 L538.46 849.78 L539.65 849.99 L540.84 850.2 L542.03 850.41 L543.22 850.62 L544.41 850.83 L545.6 851.04 L546.79 851.25 L547.98 851.46 L549.17 851.67 L550.36 851.87 L551.55 852.08 L552.74 852.29 L553.93 852.5 L555.12 852.71 L556.31 852.92 L557.5 853.13 L558.69 853.34 L559.88 853.55 L561.07 853.76 L562.26 853.97 L563.45 854.18 L564.64 854.39 L565.83 854.6 L567.02 854.8 L568.21 855.01 L569.4 855.22 L570.59 855.43 L571.78 855.64 L572.97 855.85 L574.16 856.06 L575.35 856.27 L576.54 856.48 L577.73 856.46 L578.92 856.35 L580.11 856.24 L581.3 856.12 L582.49 856.23 L583.68 856.44 L584.87 856.65 L586.06 856.86 L587.25 857.07 L588.44 857.28 L589.63 857.49 L590.82 857.7 L592.01 857.91 L593.2 858.11 L594.39 858.32 L595.58 858.53 L596.77 858.74 L597.96 858.95 L599.15 859.16 L600.34 859.37 L601.53 859.58 L602.72 859.79 L603.91 860 L605.1 860.21 L606.29 860.42 L607.48 860.63 L608.67 860.84 L609.86 862.42 L611.05 864.07 L612.24 865.71 L613.43 866.27 L614.62 866.48 L615.81 866.69 L617 866.9" fill="none" stroke="#7e7e7e" stroke-width="0.700"/><path d="M422.2 851.32 L423.41 851.57 L424.61 851.83 L425.82 852.09 L427.02 853.42 L428.23 855.29 L429.44 857.15 L430.64 857.61 L431.85 857.87 L433.06 858.13 L434.26 858.38 L435.47 858.3 L436.68 857.5 L437.88 856.71 L439.09 855.91 L440.29 855.87 L441.5 856.12 L442.71 856.38 L443.91 856.64 L445.12 856.89 L446.32 857.15 L447.53 857.41 L448.74 857.66 L449.94 857.92 L451.15 858.18 L452.36 858.43 L453.56 858.69 L454.77 858.94 L455.98 859.2 L457.18 859.46 L458.39 859.71 L459.59 859.97 L460.8 860.23 L462.01 860.48 L463.21 860.74 L464.42 861 L465.62 861.25 L466.83 861.51 L468.04 861.77 L469.24 862.02 L470.45 862.28 L471.66 862.54 L472.86 862.79 L474.07 863.05 L475.28 863.31 L476.48 863.56 L477.69 863.82 L478.89 864.08 L480.1 864.33 L481.31 864.59 L482.51 864.85 L483.72 865.1 L484.93 865.36 L486.13 865.62 L487.34 865.87 L488.54 866.13 L489.75 866.39 L490.96 866.64 L492.16 866.9 L493.37 867.16 L494.58 867.41 L495.78 867.67 L496.99 867.93 L498.19 868.18 L499.4 868.44 L500.61 868.69 L501.81 868.95 L503.02 869.21 L504.23 869.46 L505.43 869.72 L506.64 869.98 L507.84 870.23 L509.05 870.49 L510.26 870.75 L511.46 870.01 L512.67 868.66 L513.88 867.31 L515.08 867.27 L516.29 867.53 L517.49 867.79 L518.7 868.04 L521.8 855.04 L522.99 855.25 L524.18 855.46 L525.37 854.26 L526.56 853.03 L527.75 851.8 L528.94 851.7 L530.13 851.91 L531.32 852.12 L532.51 852.33 L533.7 852.54 L534.89 852.75 L536.08 852.96 L537.27 853.17 L538.46 853.38 L539.65 853.59 L540.84 853.8 L542.03 854.01 L543.22 854.22 L544.41 854.43 L545.6 854.64 L546.79 854.85 L547.98 855.06 L549.17 855.27 L550.36 855.48 L551.55 855.69 L552.74 855.9 L553.93 856.11 L555.12 856.32 L556.31 856.53 L557.5 856.74 L558.69 856.95 L559.88 857.16 L561.07 857.37 L562.26 857.58 L563.45 857.79 L564.64 858 L565.83 858.21 L567.02 858.42 L568.21 858.63 L569.4 858.84 L570.59 859.05 L571.78 859.26 L572.97 859.47 L574.16 859.68 L575.35 859.89 L576.54 860.1 L577.73 860.31 L578.92 860.43 L580.11 860.51 L581.3 860.58 L582.49 860.66 L583.68 860.82 L584.87 861.03 L586.06 861.24 L587.25 861.45 L588.44 861.66 L589.63 861.87 L590.82 862.08 L592.01 862.29 L593.2 862.5 L594.39 862.71 L595.58 862.92 L596.77 863.13 L597.96 863.34 L599.15 863.55 L600.34 863.76 L601.53 863.97 L602.72 864.18 L603.91 864.39 L605.1 864.6 L606.29 864.81 L607.48 865.02 L608.67 865.23 L609.86 865.44 L611.05 865.96 L612.24 867.61 L613.43 869.26 L614.62 870.88 L615.81 871.09 L617 871.3" fill="none" stroke="#7e7e7e" stroke-width="0.700"/><path d="M422.2 855.68 L423.41 855.94 L424.61 856.62 L425.82 858.5 L427.02 860.37 L428.23 861.51 L429.44 861.78 L430.64 862.04 L431.85 861.62 L433.06 860.83 L434.26 860.04 L435.47 859.31 L436.68 859.58 L437.88 859.84 L439.09 860.11 L440.29 860.38 L441.5 860.64 L442.71 860.91 L443.91 861.17 L445.12 861.44 L446.32 861.71 L447.53 861.97 L448.74 862.24 L449.94 862.51 L451.15 862.77 L452.36 863.04 L453.56 863.31 L454.77 863.57 L455.98 863.84 L457.18 864.11 L458.39 864.37 L459.59 864.64 L460.8 864.91 L462.01 865.17 L463.21 865.44 L464.42 865.7 L465.62 865.97 L466.83 866.24 L468.04 866.5 L469.24 866.77 L470.45 867.04 L471.66 867.3 L472.86 867.57 L474.07 867.84 L475.28 868.1 L476.48 868.37 L477.69 868.64 L478.89 868.9 L480.1 869.17 L481.31 869.44 L482.51 869.7 L483.72 869.97 L484.93 870.23 L486.13 870.5 L487.34 870.77 L488.54 871.03 L489.75 871.3 L490.96 871.57 L492.16 871.83 L493.37 872.1 L494.58 872.37 L495.78 872.63 L496.99 872.9 L498.19 873.17 L499.4 873.43 L500.61 873.7 L501.81 873.97 L503.02 874.23 L504.23 874.5 L505.43 874.76 L506.64 875.03 L507.84 875.3 L509.05 875.56 L510.26 875.83 L511.46 876.1 L512.67 876.36 L513.88 875.22 L515.08 873.88 L516.29 872.66 L517.49 872.93 L518.7 873.2 L521.8 858.63 L522.99 857.8 L524.18 856.58 L525.37 855.35 L526.56 854.88 L527.75 855.09 L528.94 855.31 L530.13 855.52 L531.32 855.73 L532.51 855.95 L533.7 856.16 L534.89 856.37 L536.08 856.59 L537.27 856.8 L538.46 857.01 L539.65 857.23 L540.84 857.44 L542.03 857.65 L543.22 857.87 L544.41 858.08 L545.6 858.29 L546.79 858.51 L547.98 858.72 L549.17 858.93 L550.36 859.15 L551.55 859.36 L552.74 859.58 L553.93 859.79 L555.12 860 L556.31 860.22 L557.5 860.43 L558.69 860.64 L559.88 860.86 L561.07 861.07 L562.26 861.28 L563.45 861.5 L564.64 861.71 L565.83 861.92 L567.02 862.14 L568.21 862.35 L569.4 862.56 L570.59 862.78 L571.78 862.99 L572.97 863.2 L574.16 863.42 L575.35 863.63 L576.54 863.84 L577.73 864.06 L578.92 864.27 L580.11 864.48 L581.3 864.7 L582.49 864.91 L583.68 865.12 L584.87 865.34 L586.06 865.55 L587.25 865.76 L588.44 865.98 L589.63 866.19 L590.82 866.4 L592.01 866.62 L593.2 866.83 L594.39 867.04 L595.58 867.26 L596.77 867.47 L597.96 867.69 L599.15 867.9 L600.34 868.11 L601.53 868.33 L602.72 868.54 L603.91 868.75 L605.1 868.97 L606.29 869.18 L607.48 869.39 L608.67 869.61 L609.86 869.82 L611.05 870.03 L612.24 870.25 L613.43 871.15 L614.62 872.8 L615.81 874.45 L617 875.7" fill="none" stroke="#7e7e7e" stroke-width="0.700"/><path d="M422.2 860.04 L423.41 861.65 L424.61 863.54 L425.82 865.37 L427.02 865.64 L428.23 864.87 L429.44 864.09 L430.64 863.31 L431.85 862.95 L433.06 863.23 L434.26 863.5 L435.47 863.78 L436.68 864.06 L437.88 864.33 L439.09 864.61 L440.29 864.88 L441.5 865.16 L442.71 865.44 L443.91 865.71 L445.12 865.99 L446.32 866.27 L447.53 866.54 L448.74 866.82 L449.94 867.1 L451.15 867.37 L452.36 867.65 L453.56 867.92 L454.77 868.2 L455.98 868.48 L457.18 868.75 L458.39 869.03 L459.59 869.31 L460.8 869.58 L462.01 869.86 L463.21 870.14 L464.42 870.41 L465.62 870.69 L466.83 870.96 L468.04 871.24 L469.24 871.52 L470.45 871.79 L471.66 872.07 L472.86 872.35 L474.07 872.62 L475.28 872.9 L476.48 873.18 L477.69 873.45 L478.89 873.73 L480.1 874 L481.31 874.28 L482.51 874.56 L483.72 874.83 L484.93 875.11 L486.13 875.39 L487.34 875.66 L488.54 875.94 L489.75 876.22 L490.96 876.49 L492.16 876.77 L493.37 877.04 L494.58 877.32 L495.78 877.6 L496.99 877.87 L498.19 878.15 L499.4 878.43 L500.61 878.7 L501.81 878.98 L503.02 879.26 L504.23 879.53 L505.43 879.81 L506.64 880.08 L507.84 880.36 L509.05 880.64 L510.26 880.91 L511.46 881.19 L512.67 881.47 L513.88 881.74 L515.08 881.8 L516.29 880.46 L517.49 879.13 L518.7 878.35 L521.8 862.21 L522.99 861 L524.18 860.16 L525.37 860.38 L526.56 860.61 L527.75 860.83 L528.94 861.05 L530.13 861.28 L531.32 861.5 L532.51 861.73 L533.7 861.95 L534.89 862.17 L536.08 862.4 L537.27 862.62 L538.46 862.84 L539.65 863.07 L540.84 863.29 L542.03 863.51 L543.22 863.74 L544.41 863.96 L545.6 864.18 L546.79 864.41 L547.98 864.63 L549.17 864.86 L550.36 865.08 L551.55 865.3 L552.74 865.53 L553.93 865.75 L555.12 865.97 L556.31 866.2 L557.5 866.42 L558.69 866.64 L559.88 866.87 L561.07 867.09 L562.26 867.31 L563.45 867.54 L564.64 867.76 L565.83 867.99 L567.02 868.21 L568.21 868.43 L569.4 868.66 L570.59 868.88 L571.78 869.1 L572.97 869.33 L574.16 869.55 L575.35 869.77 L576.54 870 L577.73 870.22 L578.92 870.45 L580.11 870.67 L581.3 870.89 L582.49 871.12 L583.68 871.34 L584.87 871.56 L586.06 871.79 L587.25 872.01 L588.44 872.23 L589.63 872.46 L590.82 872.68 L592.01 872.9 L593.2 873.13 L594.39 873.35 L595.58 873.58 L596.77 873.8 L597.96 874.02 L599.15 874.25 L600.34 874.47 L601.53 874.69 L602.72 874.92 L603.91 875.14 L605.1 875.36 L606.29 875.59 L607.48 875.81 L608.67 876.03 L609.86 876.26 L611.05 876.48 L612.24 876.71 L613.43 876.93 L614.62 877.15 L615.81 878.44 L617 880.1" fill="none" stroke="#7e7e7e" stroke-width="0.700"/><path d="M422.2 864.4 L423.41 865.94 L424.61 865.81 L425.82 865.04 L427.02 864.27 L428.23 864.28 L429.44 864.57 L430.64 864.85 L431.85 865.14 L433.06 865.43 L434.26 865.71 L435.47 866 L436.68 866.28 L437.88 866.57 L439.09 866.86 L440.29 867.14 L441.5 867.43 L442.71 867.72 L443.91 868 L445.12 868.29 L446.32 868.57 L447.53 868.86 L448.74 869.15 L449.94 869.43 L451.15 869.72 L452.36 870.01 L453.56 870.29 L454.77 870.58 L455.98 870.87 L457.18 871.15 L458.39 871.44 L459.59 871.72 L460.8 872.01 L462.01 872.3 L463.21 872.58 L464.42 872.87 L465.62 873.15 L466.83 873.44 L468.04 873.73 L469.24 874.01 L470.45 874.3 L471.66 874.59 L472.86 874.87 L474.07 875.16 L475.28 875.44 L476.48 875.73 L477.69 876.02 L478.89 876.3 L480.1 876.59 L481.31 876.88 L482.51 877.16 L483.72 877.45 L484.93 877.73 L486.13 878.02 L487.34 878.31 L488.54 878.59 L489.75 878.88 L490.96 879.17 L492.16 879.45 L493.37 879.74 L494.58 880.02 L495.78 880.31 L496.99 880.6 L498.19 880.88 L499.4 881.17 L500.61 881.46 L501.81 881.74 L503.02 882.03 L504.23 882.31 L505.43 882.6 L506.64 882.89 L507.84 883.17 L509.05 883.46 L510.26 883.75 L511.46 884.03 L512.67 884.32 L513.88 884.6 L515.08 884.89 L516.29 885.18 L517.49 884.82 L518.7 883.5 L521.8 865.8 L522.99 866.03 L524.18 866.27 L525.37 866.5 L526.56 866.73 L527.75 866.97 L528.94 867.2 L530.13 867.44 L531.32 867.67 L532.51 867.9 L533.7 868.14 L534.89 868.37 L536.08 868.61 L537.27 868.84 L538.46 869.07 L539.65 869.31 L540.84 869.54 L542.03 869.77 L543.22 870.01 L544.41 870.24 L545.6 870.47 L546.79 870.71 L547.98 870.94 L549.17 871.18 L550.36 871.41 L551.55 871.64 L552.74 871.88 L553.93 872.11 L555.12 872.35 L556.31 872.58 L557.5 872.81 L558.69 873.05 L559.88 873.28 L561.07 873.51 L562.26 873.75 L563.45 873.98 L564.64 874.21 L565.83 874.45 L567.02 874.68 L568.21 874.92 L569.4 875.15 L570.59 875.38 L571.78 875.62 L572.97 875.85 L574.16 876.09 L575.35 876.32 L576.54 876.55 L577.73 876.79 L578.92 877.02 L580.11 877.25 L581.3 877.49 L582.49 877.72 L583.68 877.95 L584.87 878.19 L586.06 878.42 L587.25 878.66 L588.44 878.89 L589.63 879.12 L590.82 879.36 L592.01 879.59 L593.2 879.83 L594.39 880.06 L595.58 880.29 L596.77 880.53 L597.96 880.76 L599.15 880.99 L600.34 881.23 L601.53 881.46 L602.72 881.69 L603.91 881.93 L605.1 882.16 L606.29 882.4 L607.48 882.63 L608.67 882.86 L609.86 883.1 L611.05 883.33 L612.24 883.57 L613.43 883.8 L614.62 884.03 L615.81 884.27 L617 884.5" fill="none" stroke="#7e7e7e" stroke-width="0.700"/>
<path d="M422.200 764.100V874.300M518.900 765V883.500" stroke="#7a7a7a" stroke-width="0.800" fill="none"/>
<path d="M422 822.5 L423.8 811.7 L445.6 817 L448.6 821.5 L467 824.5 L474.6 821.5 L492.3 824.5 L496.4 819.8 L518.7 817 L522.4 828.6 L544.1 825.5 L547.8 821.5 L566.1 824.1 L572.6 821.5 L590.9 824.1 L595.4 829 L617 834" fill="none" stroke="#ffbb08" stroke-width="1.800" stroke-linejoin="round"/>
</svg>
<div style="left:683.1px;top:735.4px;width:251.9px;height:182.6px;background:#a5a5a5;border-radius:3px;"></div>
<div style="left:683.1px;top:735.4px;width:251.9px;height:102.7px;background:#222222;border-radius:3px 3px 0 0;"></div>
<div style="left:683.1px;top:821px;width:251.9px;height:1px;background:#5e5e5e;"></div>
<div style="left:688.6px;top:742px;width:9.8px;height:9.6px;background:#ffb901;"></div>
<svg width="1564" height="960" viewBox="0 0 1564 960">
<path d="M705.900 742.800h11.500a4.500 4.500 0 0 1 4.500 4.500v3.500" stroke="#ffbb08" stroke-width="1.300" fill="none"/>
<polygon points="724.45,746.2 729.95,746.2 727.2,749.8" fill="#ffbb08"/>
</svg>
<div style="left:738.4px;top:741.2px;width:15.2px;height:11.1px;background:#ffbb08;"></div>
<div style="top:739px;height:16px;line-height:16px;font-size:10.5px;color:#1a1a1a;letter-spacing:0px;white-space:nowrap;-webkit-text-stroke:0.25px #1a1a1a;left:596px;width:300px;text-align:center;">24</div>
<div style="top:739px;height:16px;line-height:16px;font-size:10.5px;color:#ffbb08;letter-spacing:-0.02px;white-space:nowrap;font-weight:bold;left:761.8px;">Clean</div>
<svg width="1564" height="960" viewBox="0 0 1564 960">
<polygon points="791.25,746.2 796.75,746.2 794,749.8" fill="#ffbb08"/>
</svg>
<div style="left:809px;top:742px;width:1px;height:10.5px;background:#5a5a5a;"></div>
<div style="left:817.8px;top:742px;width:10px;height:9.6px;background:#ffb901;"></div>
<svg width="1564" height="960" viewBox="0 0 1564 960">
<path d="M835.500 743c2.500 0 3.500 7.500 7.600 7.500s5.100-7.500 7.600-7.500" stroke="#ffbb08" stroke-width="1.300" fill="none"/>
<polygon points="853.45,746.2 858.95,746.2 856.2,749.8" fill="#ffbb08"/>
</svg>
<div style="left:867.6px;top:741.2px;width:15.2px;height:11.1px;background:#0adff5;"></div>
<div style="top:739px;height:16px;line-height:16px;font-size:10.5px;color:#10222a;letter-spacing:0px;white-space:nowrap;-webkit-text-stroke:0.25px #10222a;left:725.2px;width:300px;text-align:center;">12</div>
<div style="top:739px;height:16px;line-height:16px;font-size:10.5px;color:#ffbb08;letter-spacing:-0.02px;white-space:nowrap;font-weight:bold;left:890.8px;">Clean</div>
<svg width="1564" height="960" viewBox="0 0 1564 960">
<polygon points="920.55,746.2 926.05,746.2 923.3,749.8" fill="#ffbb08"/>
<path d="M683.100 788.500H790C801 788.500 806.500 790 808.300 821M810.700 821C812.500 790 818 788.500 829 788.500H915C926 788.500 932 787 934.200 770.600" stroke="#0adff5" stroke-width="1.500" fill="none"/>
<circle cx="809.500" cy="790" r="6.700" fill="#ffbb08"/><circle cx="903" cy="789.500" r="6" fill="#222222" stroke="#ffbb08" stroke-width="1.400"/>
</svg>
<div style="top:782.2px;height:16px;line-height:16px;font-size:8.5px;color:#1a1a1a;letter-spacing:0px;white-space:nowrap;-webkit-text-stroke:0.25px #1a1a1a;left:659.5px;width:300px;text-align:center;">2</div>
<div style="top:781.7px;height:16px;line-height:16px;font-size:8.5px;color:#ffbb08;letter-spacing:0px;white-space:nowrap;-webkit-text-stroke:0.25px #ffbb08;left:753px;width:300px;text-align:center;">1</div>
<svg width="1564" height="960" viewBox="0 0 1564 960">
<path d="M691.300 830.200h2.500M697.800 830.200h2.200M704 830.200h3.500" stroke="#9a9a9a" stroke-width="1"/><rect x="693.800" y="828.400" width="4" height="3.600" fill="none" stroke="#9a9a9a" stroke-width="1"/><rect x="700" y="828.400" width="4" height="3.600" fill="none" stroke="#9a9a9a" stroke-width="1"/>
</svg>
<div style="top:822.2px;height:16px;line-height:16px;font-size:10.5px;color:#bdbdbd;letter-spacing:0.52px;white-space:nowrap;-webkit-text-stroke:0.15px #bdbdbd;left:715.6px;">Serial</div>
<svg width="1564" height="960" viewBox="0 0 1564 960">
<polygon points="755.95,829.4 761.45,829.4 758.7,833" fill="#bdbdbd"/>
</svg>
<div style="top:840.9px;height:16px;line-height:16px;font-size:10.5px;color:#1c1c1c;letter-spacing:-0.23px;white-space:nowrap;-webkit-text-stroke:0.25px #1c1c1c;left:692.3px;">Res</div>
<div style="top:840.9px;height:16px;line-height:16px;font-size:10.5px;color:#1c1c1c;letter-spacing:0.63px;white-space:nowrap;-webkit-text-stroke:0.25px #1c1c1c;left:741px;">Frequency</div>
<div style="left:808px;top:843.2px;width:1px;height:71.1px;background:#7e7e7e;"></div>
<div style="top:840.9px;height:16px;line-height:16px;font-size:10.5px;color:#1c1c1c;letter-spacing:0.63px;white-space:nowrap;-webkit-text-stroke:0.25px #1c1c1c;left:821.3px;">Frequency</div>
<div style="top:840.9px;height:16px;line-height:16px;font-size:10.5px;color:#1c1c1c;letter-spacing:-0.23px;white-space:nowrap;-webkit-text-stroke:0.25px #1c1c1c;left:882.2px;">Res</div>
<svg width="1564" height="960" viewBox="0 0 1564 960">
<path d="M700.44 877.06A9 9 0 0 1 694.37 863.43" stroke="#0adff5" stroke-width="2.2" fill="none"/>
<path d="M694.37 863.43A9 9 0 0 1 710.69 865.87" stroke="#222" stroke-width="2.2" fill="none"/>
<path d="M700.86 867.48L693.43 862.85" stroke="#222" stroke-width="2.2"/>
</svg>
<div style="top:868.9px;height:16px;line-height:16px;font-size:10.5px;color:#1c1c1c;letter-spacing:0.09px;white-space:nowrap;-webkit-text-stroke:0.25px #1c1c1c;left:706px;">61 %</div>
<svg width="1564" height="960" viewBox="0 0 1564 960">
<path d="M756.55 892.56A18.6 18.6 0 1 1 784.57 886.34" stroke="#0adff5" stroke-width="2.6" fill="none"/>
<path d="M784.57 886.34A18.6 18.6 0 0 1 779.45 892.56" stroke="#222" stroke-width="2.6" fill="none"/>
<path d="M775.46 881.7L785.73 886.93" stroke="#222" stroke-width="2.6"/>
</svg>
<div style="top:896.1px;height:16px;line-height:16px;font-size:10.5px;color:#1c1c1c;letter-spacing:0.26px;white-space:nowrap;-webkit-text-stroke:0.25px #1c1c1c;left:618.13px;width:300px;text-align:center;">10.0 kHz</div>
<svg width="1564" height="960" viewBox="0 0 1564 960">
<path d="M837.25 892.56A18.6 18.6 0 0 1 848.7 859.3" stroke="#0adff5" stroke-width="2.6" fill="none"/>
<path d="M848.7 859.3A18.6 18.6 0 0 1 860.15 892.56" stroke="#222" stroke-width="2.6" fill="none"/>
<path d="M848.7 873.25L848.7 858" stroke="#222" stroke-width="2.6"/>
</svg>
<div style="top:896.1px;height:16px;line-height:16px;font-size:10.5px;color:#1c1c1c;letter-spacing:0.29px;white-space:nowrap;-webkit-text-stroke:0.25px #1c1c1c;left:698.84px;width:300px;text-align:center;">640 Hz</div>
<svg width="1564" height="960" viewBox="0 0 1564 960">
<path d="M890.84 877.06A9 9 0 0 1 884.45 863.97" stroke="#0adff5" stroke-width="2.2" fill="none"/>
<path d="M884.45 863.97A9 9 0 0 1 901.09 865.87" stroke="#222" stroke-width="2.2" fill="none"/>
<path d="M891.21 867.57L883.48 863.46" stroke="#222" stroke-width="2.2"/>
</svg>
<div style="top:868.9px;height:16px;line-height:16px;font-size:10.5px;color:#1c1c1c;letter-spacing:-0.06px;white-space:nowrap;-webkit-text-stroke:0.25px #1c1c1c;left:896.5px;">57 %</div>
<div style="left:937.4px;top:735.4px;width:343.8px;height:182.6px;background:#222222;border-radius:3px;"></div>
<div style="left:989.9px;top:719.1px;width:82px;height:16.9px;background:#222222;border-radius:4px 4px 0 0;"></div>
<svg width="1564" height="960" viewBox="0 0 1564 960">
<path d="M989.900 735.400h-4a4 4 0 0 0 4-4zM1071.900 735.400h4a4 4 0 0 1-4-4z" fill="#222222"/>
</svg>
<div style="top:718.3px;height:16px;line-height:16px;font-size:10.5px;color:#d8d8d8;letter-spacing:0.56px;white-space:nowrap;-webkit-text-stroke:0.15px #d8d8d8;left:881.18px;width:300px;text-align:center;">Mod Sources</div>
<div style="left:1074.2px;top:719.3px;width:48.5px;height:13.5px;background:#a5a5a5;border-radius:3px;"></div>
<div style="top:718.3px;height:16px;line-height:16px;font-size:10.5px;color:#1c1c1c;letter-spacing:0.9px;white-space:nowrap;-webkit-text-stroke:0.25px #1c1c1c;left:948.9px;width:300px;text-align:center;">Matrix</div>
<div style="left:1125.3px;top:719.3px;width:38.7px;height:13.5px;background:#a5a5a5;border-radius:3px;"></div>
<div style="top:718.3px;height:16px;line-height:16px;font-size:10.5px;color:#1c1c1c;letter-spacing:0.33px;white-space:nowrap;-webkit-text-stroke:0.25px #1c1c1c;left:994.82px;width:300px;text-align:center;">MIDI</div>
<div style="left:1166.7px;top:719.3px;width:37.7px;height:13.5px;background:#a5a5a5;border-radius:3px;"></div>
<div style="top:718.3px;height:16px;line-height:16px;font-size:10.5px;color:#1c1c1c;letter-spacing:-0.09px;white-space:nowrap;-webkit-text-stroke:0.25px #1c1c1c;left:1035.51px;width:300px;text-align:center;">MPE</div>
<div style="top:739.1px;height:16px;line-height:16px;font-size:10.5px;color:#0adff5;letter-spacing:0.8px;white-space:nowrap;-webkit-text-stroke:0.25px #0adff5;left:821.4px;width:300px;text-align:center;">Amp</div>
<div style="top:739.1px;height:16px;line-height:16px;font-size:10.5px;color:#c4c4c4;letter-spacing:0.13px;white-space:nowrap;-webkit-text-stroke:0.15px #c4c4c4;left:890.06px;width:300px;text-align:center;">Env 2</div>
<div style="top:739.1px;height:16px;line-height:16px;font-size:10.5px;color:#c4c4c4;letter-spacing:0.13px;white-space:nowrap;-webkit-text-stroke:0.15px #c4c4c4;left:958.66px;width:300px;text-align:center;">Env 3</div>
<div style="top:739.1px;height:16px;line-height:16px;font-size:10.5px;color:#c4c4c4;letter-spacing:-0.24px;white-space:nowrap;-webkit-text-stroke:0.15px #c4c4c4;left:1027.08px;width:300px;text-align:center;">LFO 1</div>
<div style="top:739.1px;height:16px;line-height:16px;font-size:10.5px;color:#c4c4c4;letter-spacing:-0.14px;white-space:nowrap;-webkit-text-stroke:0.15px #c4c4c4;left:1096.53px;width:300px;text-align:center;">LFO 2</div>
<div style="left:937.4px;top:755.8px;width:343.8px;height:1px;background:#5a5a5a;"></div>
<div style="left:937.4px;top:755.5px;width:68.5px;height:1.5px;background:#0adff5;"></div>
<div style="top:760.5px;height:16px;line-height:16px;font-size:10.5px;color:#0adff5;letter-spacing:0.11px;white-space:nowrap;font-weight:bold;left:1227.5px;">None</div>
<svg width="1564" height="960" viewBox="0 0 1564 960">
<polygon points="1268.55,767.7 1274.05,767.7 1271.3,771.3" fill="#0adff5"/>
<path d="M951.800 786.400v-9h9M1254.700 777.400h9v9M1263.700 858.300v9h-9M960.800 867.300h-9v-9" stroke="#0adff5" stroke-width="1.300" fill="none"/>
<path d="M957 862.800L1025.100 782.100C1032 797 1048 803 1066.300 805.900H1156.700C1162 838 1180 853 1217.500 862.300" stroke="#0adff5" stroke-width="1.700" fill="none" stroke-linejoin="round"/>
<rect x="990.1" y="820.7" width="4" height="4" transform="rotate(45 992.1 822.7)" fill="none" stroke="#e07a8a" stroke-width="1"/>
<rect x="1044.6" y="797.9" width="4" height="4" transform="rotate(45 1046.6 799.9)" fill="none" stroke="#e07a8a" stroke-width="1"/>
<rect x="1185.7" y="852.2" width="4" height="4" transform="rotate(45 1187.7 854.2)" fill="none" stroke="#e07a8a" stroke-width="1"/>
<rect x="1022.1" y="779.1" width="6" height="6" fill="none" stroke="#ffbb08" stroke-width="1.200"/>
<rect x="1063.3" y="802.9" width="6" height="6" fill="none" stroke="#ffbb08" stroke-width="1.200"/>
<rect x="1214.5" y="859.3" width="6" height="6" fill="none" stroke="#ffbb08" stroke-width="1.200"/>
</svg>
<div style="top:865.8px;height:16px;line-height:16px;font-size:10.5px;color:#f0f0f0;letter-spacing:0.17px;white-space:nowrap;font-weight:bold;left:942.58px;width:300px;text-align:center;">Time</div>
<div style="top:865.8px;height:16px;line-height:16px;font-size:10.5px;color:#9a9a9a;letter-spacing:0.35px;white-space:nowrap;-webkit-text-stroke:0.15px #9a9a9a;left:1110.3px;">Slope</div>
<div style="left:937.4px;top:882.8px;width:343.8px;height:1px;background:#5a5a5a;"></div>
<div style="left:1076.3px;top:882.5px;width:32.7px;height:1.5px;background:#f0f0f0;"></div>
<div style="top:885.5px;height:16px;line-height:16px;font-size:10.5px;color:#b4b4b4;letter-spacing:0px;white-space:nowrap;-webkit-text-stroke:0.15px #b4b4b4;left:1012.6px;">A</div>
<div style="top:885.5px;height:16px;line-height:16px;font-size:10.5px;color:#b4b4b4;letter-spacing:0px;white-space:nowrap;-webkit-text-stroke:0.15px #b4b4b4;left:1061.6px;">D</div>
<div style="top:885.5px;height:16px;line-height:16px;font-size:10.5px;color:#b4b4b4;letter-spacing:0px;white-space:nowrap;-webkit-text-stroke:0.15px #b4b4b4;left:1110.3px;">S</div>
<div style="top:885.5px;height:16px;line-height:16px;font-size:10.5px;color:#b4b4b4;letter-spacing:0px;white-space:nowrap;-webkit-text-stroke:0.15px #b4b4b4;left:1159.4px;">R</div>
<div style="top:899.4px;height:16px;line-height:16px;font-size:10.5px;color:#0adff5;letter-spacing:0.2px;white-space:nowrap;font-weight:bold;left:1014.4px;">4.62 s</div>
<div style="top:899.4px;height:16px;line-height:16px;font-size:10.5px;color:#0adff5;letter-spacing:0.1px;white-space:nowrap;font-weight:bold;left:1063.7px;">600 ms</div>
<div style="top:899.4px;height:16px;line-height:16px;font-size:10.5px;color:#0adff5;letter-spacing:0.08px;white-space:nowrap;font-weight:bold;left:1112.7px;">-6.0 dB</div>
<div style="top:899.4px;height:16px;line-height:16px;font-size:10.5px;color:#0adff5;letter-spacing:0.15px;white-space:nowrap;font-weight:bold;left:1161.2px;">2.90 s</div>
<div style="left:1284px;top:735.4px;width:65.9px;height:182.6px;background:#a5a5a5;border-radius:3px;"></div>
<svg width="1564" height="960" viewBox="0 0 1564 960">
<circle cx="1325.1" cy="726.2" r="6.500" fill="#d6d6d6" stroke="#333" stroke-width="1"/><path d="M1322.91 723.6A3.4 3.4 0 0 1 1328.45 725.61" stroke="#1c1c1c" stroke-width="1.500" fill="none"/><path d="M1327.29 728.8A3.4 3.4 0 0 1 1321.75 726.79" stroke="#1c1c1c" stroke-width="1.500" fill="none"/><polygon points="1330.60,725.60 1326.40,725.60 1328.50,728.20" fill="#1c1c1c"/><polygon points="1323.80,726.80 1319.60,726.80 1321.70,724.20" fill="#1c1c1c"/>
<circle cx="1342.800" cy="726.200" r="6.500" fill="#d6d6d6" stroke="#333" stroke-width="1"/><rect x="1339.100" y="722.600" width="7.400" height="7.400" rx="0.800" fill="#1c1c1c"/><rect x="1340.500" y="722.600" width="3.600" height="2.600" fill="#d6d6d6"/>
</svg>
<div style="top:737.7px;height:16px;line-height:16px;font-size:10.5px;color:#1c1c1c;letter-spacing:0.49px;white-space:nowrap;-webkit-text-stroke:0.25px #1c1c1c;left:1287.4px;">Volume</div>
<div style="left:1287.4px;top:753px;width:60.4px;height:13.5px;background:#e2e2e2;border:1px solid #4a4a4a;box-sizing:border-box;"></div>
<div style="left:1288.4px;top:754px;width:43.2px;height:11.5px;background:#00cfe8;"></div>
<div style="top:751.95px;height:16px;line-height:16px;font-size:10.5px;color:#1c1c1c;letter-spacing:0.31px;white-space:nowrap;-webkit-text-stroke:0.25px #1c1c1c;left:1167.75px;width:300px;text-align:center;">-5.0 dB</div>
<div style="left:1286px;top:769.5px;width:63px;height:1px;background:#7e7e7e;"></div>
<div style="left:1287.4px;top:775.6px;width:33px;height:13.6px;background:#ffb901;border:1px solid #5a4a10;box-sizing:border-box;"></div>
<div style="top:774.6px;height:16px;line-height:16px;font-size:10.5px;color:#1c1c1c;letter-spacing:0.27px;white-space:nowrap;-webkit-text-stroke:0.25px #1c1c1c;left:1154.03px;width:300px;text-align:center;">Poly</div>
<div style="left:1325.1px;top:775.6px;width:22.7px;height:13.6px;background:#e2e2e2;border:1px solid #4a4a4a;box-sizing:border-box;"></div>
<div style="top:774.6px;height:16px;line-height:16px;font-size:10.5px;color:#1c1c1c;letter-spacing:0px;white-space:nowrap;-webkit-text-stroke:0.25px #1c1c1c;left:1328.5px;">8</div>
<svg width="1564" height="960" viewBox="0 0 1564 960">
<polygon points="1338.75,780.3 1345.25,780.3 1342,785.3" fill="#1c1c1c"/>
</svg>
<div style="top:788.7px;height:16px;line-height:16px;font-size:10.5px;color:#1c1c1c;letter-spacing:0.3px;white-space:nowrap;-webkit-text-stroke:0.25px #1c1c1c;left:1287.4px;">Glide</div>
<div style="left:1287.4px;top:804.3px;width:60.4px;height:13px;background:#ababab;border:1px solid #4a4a4a;box-sizing:border-box;"></div>
<div style="top:803px;height:16px;line-height:16px;font-size:10.5px;color:#1c1c1c;letter-spacing:0.38px;white-space:nowrap;-webkit-text-stroke:0.25px #1c1c1c;left:1167.79px;width:300px;text-align:center;">0.00 ms</div>
<div style="left:1286px;top:823.3px;width:63px;height:1px;background:#7e7e7e;"></div>
<div style="top:827px;height:16px;line-height:16px;font-size:10.5px;color:#1c1c1c;letter-spacing:0.39px;white-space:nowrap;-webkit-text-stroke:0.25px #1c1c1c;left:1287.4px;">Unison</div>
<div style="left:1287.4px;top:842.3px;width:60.4px;height:13.1px;background:#e2e2e2;border:1px solid #4a4a4a;box-sizing:border-box;"></div>
<div style="top:841.1px;height:16px;line-height:16px;font-size:10.5px;color:#1c1c1c;letter-spacing:0.57px;white-space:nowrap;-webkit-text-stroke:0.25px #1c1c1c;left:1289.5px;">Shimmer</div>
<svg width="1564" height="960" viewBox="0 0 1564 960">
<polygon points="1339.25,846.7 1345.75,846.7 1342.5,851.7" fill="#1c1c1c"/>
</svg>
<div style="top:855.2px;height:16px;line-height:16px;font-size:10.5px;color:#1c1c1c;letter-spacing:0.43px;white-space:nowrap;-webkit-text-stroke:0.25px #1c1c1c;left:1287.4px;">Voices</div>
<div style="left:1287.4px;top:870.7px;width:60.4px;height:12.5px;background:#e2e2e2;border:1px solid #4a4a4a;box-sizing:border-box;"></div>
<div style="left:1288.4px;top:871.7px;width:9.4px;height:10.5px;background:#00cfe8;"></div>
<div style="top:869.15px;height:16px;line-height:16px;font-size:10.5px;color:#1c1c1c;letter-spacing:0.5px;white-space:nowrap;-webkit-text-stroke:0.25px #1c1c1c;left:1167.85px;width:300px;text-align:center;">3</div>
<div style="top:883px;height:16px;line-height:16px;font-size:10.5px;color:#1c1c1c;letter-spacing:0.72px;white-space:nowrap;-webkit-text-stroke:0.25px #1c1c1c;left:1287.4px;">Amount</div>
<div style="left:1287.4px;top:898.3px;width:60.4px;height:13.1px;background:#e2e2e2;border:1px solid #4a4a4a;box-sizing:border-box;"></div>
<div style="left:1288.4px;top:899.3px;width:21.6px;height:11.1px;background:#00cfe8;"></div>
<div style="top:897.05px;height:16px;line-height:16px;font-size:10.5px;color:#1c1c1c;letter-spacing:0.14px;white-space:nowrap;-webkit-text-stroke:0.25px #1c1c1c;left:1167.67px;width:300px;text-align:center;">38 %</div>
<div style="left:1355.6px;top:759.5px;width:2.2px;height:118px;background:linear-gradient(#2a2a2a 0px,#2a2a2a 16px,#e07800 16px,#e07800 17.3px,#2a2a2a 17.3px,#2a2a2a 22.5px,#a8981c 22.5px,#b8b01c 38px,#9af028 42px,#7ef52e 45px,#00f050 48px);"></div>
<div style="left:1358.6px;top:759.5px;width:2.2px;height:118px;background:linear-gradient(#2a2a2a 0px,#2a2a2a 14px,#e07800 14px,#e07800 15.3px,#2a2a2a 15.3px,#2a2a2a 31.5px,#a8981c 31.5px,#b8b01c 38px,#9af028 42px,#7ef52e 45px,#00f050 48px);"></div>
<div style="left:1363.4px;top:717px;width:190.6px;height:203.5px;background:#bdbdbd;border-radius:4px;"></div>
<svg width="1564" height="960" viewBox="0 0 1564 960">
<circle cx="1373.3" cy="726" r="6.300" fill="#ffb901" stroke="#3a3000" stroke-width="1"/>
</svg>
<div style="top:718px;height:16px;line-height:16px;font-size:10.5px;color:#1c1c1c;letter-spacing:0.16px;white-space:nowrap;font-weight:bold;left:1385px;">Droney Cave</div>
<div style="left:1365.5px;top:735.4px;width:59.4px;height:182.6px;background:#a5a5a5;border-radius:3px;"></div>
<div style="top:737.7px;height:16px;line-height:16px;font-size:10.5px;color:#1c1c1c;letter-spacing:0.24px;white-space:nowrap;-webkit-text-stroke:0.25px #1c1c1c;left:1245.62px;width:300px;text-align:center;">Send</div>
<svg width="1564" height="960" viewBox="0 0 1564 960">
<path d="M1387.5 776.24A13 13 0 1 1 1406.98 759.9" stroke="#0adff5" stroke-width="2.3" fill="none"/>
<path d="M1406.98 759.9A13 13 0 0 1 1403.5 776.24" stroke="#222" stroke-width="2.3" fill="none"/>
<path d="M1394.35 766.61L1407.99 759.36" stroke="#222" stroke-width="2.3"/>
</svg>
<div style="top:777px;height:16px;line-height:16px;font-size:10.5px;color:#1c1c1c;letter-spacing:0.23px;white-space:nowrap;-webkit-text-stroke:0.25px #1c1c1c;left:1245.62px;width:300px;text-align:center;">-3.1 dB</div>
<div style="top:801px;height:16px;line-height:16px;font-size:10.5px;color:#1c1c1c;letter-spacing:0.44px;white-space:nowrap;-webkit-text-stroke:0.25px #1c1c1c;left:1245.72px;width:300px;text-align:center;">Predelay</div>
<svg width="1564" height="960" viewBox="0 0 1564 960">
<path d="M1387.5 839.54A13 13 0 0 1 1382.7 831.56" stroke="#0adff5" stroke-width="2.3" fill="none"/>
<path d="M1382.7 831.56A13 13 0 1 1 1403.5 839.54" stroke="#222" stroke-width="2.3" fill="none"/>
<path d="M1396.78 829.07L1381.56 831.76" stroke="#222" stroke-width="2.3"/>
</svg>
<div style="top:839.5px;height:16px;line-height:16px;font-size:10.5px;color:#1c1c1c;letter-spacing:0.23px;white-space:nowrap;-webkit-text-stroke:0.25px #1c1c1c;left:1245.62px;width:300px;text-align:center;">10.0 ms</div>
<div style="left:1369.9px;top:858.5px;width:22.9px;height:13px;background:#ffb901;border:1px solid #5a4a10;box-sizing:border-box;"></div>
<div style="top:857.2px;height:16px;line-height:16px;font-size:10.5px;color:#1c1c1c;letter-spacing:0.3px;white-space:nowrap;-webkit-text-stroke:0.25px #1c1c1c;left:1231.5px;width:300px;text-align:center;">ms</div>
<div style="left:1397.3px;top:858.5px;width:22.9px;height:13px;background:#d8d8d8;border:1px solid #4a4a4a;box-sizing:border-box;"></div>
<div style="top:857.2px;height:16px;line-height:16px;font-size:10px;color:#1c1c1c;letter-spacing:0px;white-space:nowrap;left:1258.75px;width:300px;text-align:center;">♪</div>
<div style="top:885.6px;height:16px;line-height:16px;font-size:10.5px;color:#1c1c1c;letter-spacing:0.48px;white-space:nowrap;-webkit-text-stroke:0.25px #1c1c1c;left:1245.74px;width:300px;text-align:center;">Feedback</div>
<div style="left:1369.9px;top:901px;width:50.3px;height:13px;background:#e2e2e2;border:1px solid #4a4a4a;box-sizing:border-box;"></div>
<div style="top:899.7px;height:16px;line-height:16px;font-size:10.5px;color:#1c1c1c;letter-spacing:0.03px;white-space:nowrap;-webkit-text-stroke:0.25px #1c1c1c;left:1245.06px;width:300px;text-align:center;">0.0 %</div>
<div style="left:1427.2px;top:735.4px;width:126.8px;height:182.6px;overflow:hidden;border-radius:3px 0 0 3px;"><div style="left:-1427.2px;top:-735.4px;width:1564px;height:960px;">
<div style="left:1427.2px;top:735.4px;width:132.8px;height:122.6px;background:#222222;border-radius:3px;"></div>
<svg width="1564" height="960" viewBox="0 0 1564 960">
<path d="M1431.5 777.6 L1432.2 777.39 L1432.9 777.18 L1433.6 776.97 L1434.3 776.76 L1435 776.55 L1435.7 776.34 L1436.4 776.13 L1437.1 775.92 L1437.8 765.77 L1438.5 755.09 L1439.2 744.41 L1439.9 739.83 L1440.6 750.51 L1441.3 761.2 L1442 771.88 L1442.7 772.31 L1443.4 772.21 L1444.1 771.75 L1444.8 772.44 L1445.5 772.42 L1446.2 772.36 L1446.9 772.97 L1447.6 772.55 L1448.3 772.43 L1449 772.24 L1449.7 773.26 L1450.4 773.01 L1451.1 773.35 L1451.8 772.39 L1452.5 772.59 L1453.2 773.54 L1453.9 772.26 L1454.6 772.33 L1455.3 772.8 L1456 772.89 L1456.7 773.57 L1457.4 773.81 L1458.1 773.12 L1458.8 773.82 L1459.5 773.67 L1460.2 773.63 L1460.9 773.96 L1461.6 773.39 L1462.3 773.46 L1463 772.93 L1463.7 773.41 L1464.4 773.27 L1465.1 773.5 L1465.8 773.31 L1466.5 773.63 L1467.2 773.91 L1467.9 772.93 L1468.6 772.96 L1469.3 773.21 L1470 773.43 L1470.7 774 L1471.4 774.15 L1472.1 774.1 L1472.8 774.43 L1473.5 773.48 L1474.2 774.02 L1474.9 773.43 L1475.6 774.1 L1476.3 773.32 L1477 773.5 L1477.7 774.71 L1478.4 774.45 L1479.1 773.49 L1479.8 774.13 L1480.5 773.44 L1481.2 774.28 L1481.9 774.76 L1482.6 774 L1483.3 773.82 L1484 774.55 L1484.7 774.83 L1485.4 774.51 L1486.1 773.65 L1486.8 773.96 L1487.5 774.87 L1488.2 774.71 L1488.9 774.94 L1489.6 775.02 L1490.3 774.01 L1491 774.89 L1491.7 774.38 L1492.4 774.55 L1493.1 774.93 L1493.8 774.19 L1494.5 775.05 L1495.2 774.35 L1495.9 775.11 L1496.6 774.7 L1497.3 775.01 L1498 774.95 L1498.7 773.99 L1499.4 774.24 L1500.1 774.95 L1500.8 774.16 L1501.5 775.12 L1502.2 774.88 L1502.9 774.25 L1503.6 774.56 L1504.3 775.34 L1505 774.11 L1505.7 775.21 L1506.4 775.16 L1507.1 774.45 L1507.8 775.09 L1508.5 775.15 L1509.2 775.48 L1509.9 775.47 L1510.6 774.79 L1511.3 775.28 L1512 774.79 L1512.7 775.13 L1513.4 775.03 L1514.1 774.33 L1514.8 775.01 L1515.5 774.9 L1516.2 774.5 L1516.9 775.47 L1517.6 775.52 L1518.3 774.48 L1519 774.62 L1519.7 775.43 L1520.4 775.52 L1521.1 774.76 L1521.8 774.49 L1522.5 775.55 L1523.2 774.5 L1523.9 774.61 L1524.6 775.01 L1525.3 775.27 L1526 775.73 L1526.7 775.83 L1527.4 774.55 L1528.1 775.57 L1528.8 774.93 L1529.5 775.57 L1530.2 774.78 L1530.9 775.11 L1531.6 775.54 L1532.3 775.72 L1533 774.97 L1533.7 775.89 L1534.4 775.67 L1535.1 775.22 L1535.8 774.82 L1536.5 775.16 L1537.2 775.63 L1537.9 774.75 L1538.6 775.76 L1539.3 776.03 L1540 775.68 L1540.7 775.44 L1541.4 775.99 L1542.1 775.84 L1542.8 775.58 L1543.5 775.3 L1544.2 775.92 L1544.9 775.61 L1545.6 774.87 L1546.3 774.76 L1547 775.22 L1547.7 775.18 L1548.4 775.33 L1549.1 775.96 L1549.8 776.12 L1550.5 776.15 L1551.2 774.9 L1551.9 775.2 L1552.6 774.84 L1553.3 776.17 L1554 775.31 L1554.7 775.54 L1555.4 775.19 L1555.4 781.21 L1554.7 780.86 L1554 781.09 L1553.3 780.23 L1552.6 781.56 L1551.9 781.2 L1551.2 781.5 L1550.5 780.25 L1549.8 780.28 L1549.1 780.44 L1548.4 781.07 L1547.7 781.22 L1547 781.18 L1546.3 781.64 L1545.6 781.53 L1544.9 780.79 L1544.2 780.48 L1543.5 781.1 L1542.8 780.82 L1542.1 780.56 L1541.4 780.41 L1540.7 780.96 L1540 780.72 L1539.3 780.37 L1538.6 780.64 L1537.9 781.65 L1537.2 780.77 L1536.5 781.24 L1535.8 781.58 L1535.1 781.18 L1534.4 780.73 L1533.7 780.51 L1533 781.43 L1532.3 780.68 L1531.6 780.86 L1530.9 781.29 L1530.2 781.62 L1529.5 780.83 L1528.8 781.47 L1528.1 780.83 L1527.4 781.85 L1526.7 780.57 L1526 780.67 L1525.3 781.13 L1524.6 781.39 L1523.9 781.79 L1523.2 781.9 L1522.5 780.85 L1521.8 781.91 L1521.1 781.64 L1520.4 780.88 L1519.7 780.97 L1519 781.78 L1518.3 781.92 L1517.6 780.88 L1516.9 780.93 L1516.2 781.9 L1515.5 781.5 L1514.8 781.39 L1514.1 782.07 L1513.4 781.37 L1512.7 781.27 L1512 781.61 L1511.3 781.12 L1510.6 781.61 L1509.9 780.93 L1509.2 780.92 L1508.5 781.25 L1507.8 781.31 L1507.1 781.95 L1506.4 781.24 L1505.7 781.19 L1505 782.29 L1504.3 781.06 L1503.6 781.84 L1502.9 782.15 L1502.2 781.52 L1501.5 781.28 L1500.8 782.24 L1500.1 781.45 L1499.4 782.16 L1498.7 782.41 L1498 781.45 L1497.3 781.39 L1496.6 781.7 L1495.9 781.29 L1495.2 782.05 L1494.5 781.35 L1493.8 782.21 L1493.1 781.47 L1492.4 781.85 L1491.7 782.02 L1491 781.51 L1490.3 782.39 L1489.6 781.38 L1488.9 781.46 L1488.2 781.69 L1487.5 781.53 L1486.8 782.44 L1486.1 782.75 L1485.4 781.89 L1484.7 781.57 L1484 781.85 L1483.3 782.58 L1482.6 782.4 L1481.9 781.64 L1481.2 782.12 L1480.5 782.96 L1479.8 782.27 L1479.1 782.91 L1478.4 781.95 L1477.7 781.69 L1477 782.9 L1476.3 783.08 L1475.6 782.3 L1474.9 782.97 L1474.2 782.38 L1473.5 782.92 L1472.8 781.97 L1472.1 782.3 L1471.4 782.25 L1470.7 782.4 L1470 782.97 L1469.3 783.19 L1468.6 783.44 L1467.9 783.47 L1467.2 782.49 L1466.5 782.77 L1465.8 783.09 L1465.1 782.9 L1464.4 783.13 L1463.7 782.99 L1463 783.47 L1462.3 782.94 L1461.6 783.01 L1460.9 782.44 L1460.2 782.77 L1459.5 782.73 L1458.8 782.58 L1458.1 783.28 L1457.4 782.59 L1456.7 782.83 L1456 783.51 L1455.3 783.6 L1454.6 784.07 L1453.9 784.14 L1453.2 782.86 L1452.5 783.81 L1451.8 784.01 L1451.1 783.05 L1450.4 783.39 L1449.7 783.14 L1449 784.16 L1448.3 783.97 L1447.6 783.85 L1446.9 783.43 L1446.2 784.04 L1445.5 783.98 L1444.8 783.96 L1444.1 784.65 L1443.4 784.19 L1442.7 784.09 L1442 784 L1441.3 793.8 L1440.6 803.6 L1439.9 813.4 L1439.2 809.2 L1438.5 799.4 L1437.8 789.6 L1437.1 780.48 L1436.4 780.27 L1435.7 780.06 L1435 779.85 L1434.3 779.64 L1433.6 779.43 L1432.9 779.22 L1432.2 779.01 L1431.5 778.8Z" fill="#ffbb08"/><polygon points="1438.2,778.2 1439.7,740 1441.2,778.2 1439.7,816.8" fill="#ffbb08"/>
</svg>
<div style="left:1434.5px;top:824px;width:10.5px;height:10.3px;background:#ffb901;"></div>
<div style="top:821.3px;height:16px;line-height:16px;font-size:10.5px;color:#b0b0b0;letter-spacing:0.97px;white-space:nowrap;-webkit-text-stroke:0.15px #b0b0b0;left:1452.2px;">Attack</div>
<div style="top:821.3px;height:16px;line-height:16px;font-size:10.5px;color:#b0b0b0;letter-spacing:0.45px;white-space:nowrap;-webkit-text-stroke:0.15px #b0b0b0;left:1508.8px;">Decay</div>
<div style="top:838.8px;height:16px;line-height:16px;font-size:10.5px;color:#ffbb08;letter-spacing:0.21px;white-space:nowrap;font-weight:bold;left:1451px;">0.00 ms</div>
<div style="top:838.8px;height:16px;line-height:16px;font-size:10.5px;color:#ffbb08;letter-spacing:0.22px;white-space:nowrap;font-weight:bold;left:1509.5px;">20.0 s</div>
<div style="left:1427.2px;top:860.3px;width:132.8px;height:57.7px;background:#a5a5a5;border-radius:3px;"></div>
<div style="top:863.8px;height:16px;line-height:16px;font-size:10.5px;color:#1c1c1c;letter-spacing:0.54px;white-space:nowrap;-webkit-text-stroke:0.25px #1c1c1c;left:1432.4px;">Convolution IR</div>
<div style="left:1431.4px;top:884px;width:128.6px;height:12.2px;background:#e2e2e2;border:1px solid #4a4a4a;box-sizing:border-box;"></div>
<div style="top:882.3px;height:16px;line-height:16px;font-size:10.5px;color:#1c1c1c;letter-spacing:0.33px;white-space:nowrap;-webkit-text-stroke:0.25px #1c1c1c;left:1434.2px;">Halls</div>
<div style="left:1431.4px;top:901.5px;width:128.6px;height:12.2px;background:#e2e2e2;border:1px solid #4a4a4a;box-sizing:border-box;"></div>
<div style="top:899.8px;height:16px;line-height:16px;font-size:10.5px;color:#1c1c1c;letter-spacing:0.34px;white-space:nowrap;-webkit-text-stroke:0.25px #1c1c1c;left:1434.2px;">Berliner Hall LR</div>
</div></div>
<svg width="1564" height="960" viewBox="0 0 1564 960">
<circle cx="20" cy="941" r="8" fill="#b4b4b4"/>
</svg>
<div style="top:933.2px;height:16px;line-height:16px;font-size:12px;color:#8a8a8a;letter-spacing:0px;white-space:nowrap;font-weight:bold;left:-130px;width:300px;text-align:center;">i</div>
<div style="left:45.6px;top:930.8px;width:920.9px;height:20.1px;background:#a5a5a5;border-radius:3px;"></div>
<div style="left:976.7px;top:931px;width:20.7px;height:20px;background:#a5a5a5;border-radius:3px 0 0 3px;"></div>
<svg width="1564" height="960" viewBox="0 0 1564 960">
<polygon points="984.25,937.5 984.25,944.5 989.75,941" fill="#111"/>
</svg>
<div style="left:997.4px;top:931px;width:217.6px;height:20px;background:#bdbdbd;border-radius:0 3px 3px 0;"></div>
<div style="left:997px;top:931px;width:1px;height:20px;background:#6a6a6a;"></div>
<div style="left:1121.3px;top:931px;width:38.8px;height:20px;background:#b0ced5;"></div>
<div style="left:1121px;top:931px;width:1.2px;height:20px;background:#1a1a1a;"></div>
<div style="left:1025.7px;top:935.8px;width:38.5px;height:0.8px;background:#7a7a7a;"></div>
<div style="left:1080px;top:941.6px;width:16.7px;height:0.8px;background:#7a7a7a;"></div>
<div style="left:998px;top:948.9px;width:190px;height:0.8px;background:#8a8a8a;"></div>
<div style="left:1224.9px;top:931px;width:21px;height:20px;background:#ffb901;border-radius:3px 0 0 3px;"></div>
<svg width="1564" height="960" viewBox="0 0 1564 960">
<polygon points="1231.200,944 1239.600,944 1235.400,937" fill="#1a1a1a"/>
</svg>
<div style="left:1245.9px;top:931px;width:63.1px;height:20px;background:#a5a5a5;"></div>
<div style="top:933px;height:16px;line-height:16px;font-size:10.5px;color:#1c1c1c;letter-spacing:0.74px;white-space:nowrap;-webkit-text-stroke:0.25px #1c1c1c;left:1253.7px;">Drift Pad</div>
<div style="left:1448px;top:931px;width:54px;height:20.2px;background:#a8a8a8;"></div>
<div style="left:1448px;top:931px;width:48px;height:13.5px;background:#2a2a2a;"></div>
<div style="left:1496px;top:931px;width:6px;height:20.2px;background:#b8b8b8;"></div>
<div style="left:1444.5px;top:931px;width:3.5px;height:20.2px;background:#b4b4b4;"></div>
<div style="left:1448px;top:931px;width:54px;height:1px;background:#c4c4c4;"></div>
<svg width="1564" height="960" viewBox="0 0 1564 960">
<path d="M1449 937.300h2.500l0.500-4 0.600 7 0.600-3h42" stroke="#b88a10" stroke-width="1.400" fill="none"/>
<circle cx="1453" cy="948" r="1.500" fill="none" stroke="#5a90a0" stroke-width="0.800"/>
<circle cx="1458.6" cy="948" r="1.500" fill="none" stroke="#5a90a0" stroke-width="0.800"/>
<circle cx="1464.2" cy="948" r="1.500" fill="none" stroke="#5a90a0" stroke-width="0.800"/>
<circle cx="1469.8" cy="948" r="1.500" fill="none" stroke="#5a90a0" stroke-width="0.800"/>
<circle cx="1475.4" cy="948" r="1.500" fill="none" stroke="#5a90a0" stroke-width="0.800"/>
<circle cx="1481" cy="948" r="1.500" fill="none" stroke="#5a90a0" stroke-width="0.800"/>
<circle cx="1486.6" cy="948" r="1.500" fill="none" stroke="#5a90a0" stroke-width="0.800"/>
<circle cx="1492.2" cy="948" r="1.500" fill="none" stroke="#5a90a0" stroke-width="0.800"/>
</svg>
<div style="left:1497px;top:933px;width:4px;height:2px;background:#00b8d0;"></div>
<div style="left:1497px;top:940px;width:4px;height:2px;background:#00b8d0;"></div>
<div style="left:1309px;top:928.8px;width:139px;height:24.1px;background:#8e8e8e;border:1.800px solid #464646;box-sizing:border-box;"></div>
<div style="left:1311px;top:931px;width:14px;height:20.2px;background:#3c3c3c;"></div>
<div style="left:1325px;top:931px;width:9.6px;height:20.2px;background:#b2b2b2;"></div>
<div style="left:1336.3px;top:931px;width:5.7px;height:20.2px;background:#b6b6b6;"></div>
<div style="left:1342px;top:931px;width:30.5px;height:20.2px;background:#2a2a2a;"></div>
<div style="left:1373px;top:931px;width:24px;height:12px;background:#2a2a2a;"></div>
<div style="left:1373px;top:943px;width:24px;height:8.2px;background:#a8a8a8;"></div>
<div style="left:1397.5px;top:931px;width:32.5px;height:20.2px;background:#262626;"></div>
<div style="left:1430px;top:931px;width:8px;height:20.2px;background:#b6b6b6;"></div>
<div style="left:1439.5px;top:931px;width:4px;height:20.2px;background:#b4b4b4;"></div>
<div style="left:1311px;top:931px;width:132.5px;height:1px;background:#c4c4c4;"></div>
<div style="left:1337px;top:934px;width:4px;height:2px;background:#e0a818;"></div>
<div style="left:1337px;top:945px;width:4px;height:2px;background:#e0a818;"></div>
<div style="left:1431px;top:933.5px;width:6px;height:2px;background:#00b8d0;"></div>
<div style="left:1431px;top:948px;width:6px;height:2px;background:#00b8d0;"></div>
<div style="left:1328px;top:949px;width:5.5px;height:1.6px;background:#00b8d0;"></div>
<svg width="1564" height="960" viewBox="0 0 1564 960">
<path d="M1312 949.500l3-5 4-2 3-5 2-2" stroke="#b090ff" stroke-width="1.600" fill="none"/><circle cx="1329.700" cy="941" r="2.200" fill="none" stroke="#7a7a7a" stroke-width="0.800"/><path d="M1344 940.500h9l2-1.500 2 2.500h13" stroke="#b88a10" stroke-width="1" fill="none"/><path d="M1344 934h26M1344 936.500h26M1344 944h26M1344 946.500h26" stroke="#4a4a4a" stroke-width="0.600"/><path d="M1374 936.500h10l1 3.500 1-3.500h10" stroke="#00b8d0" stroke-width="1" fill="none"/><circle cx="1381" cy="947.300" r="2" fill="none" stroke="#00b8d0" stroke-width="0.800"/><circle cx="1389.500" cy="947.300" r="2" fill="none" stroke="#00b8d0" stroke-width="0.800"/><path d="M1399 946.500l6.500-9 4 3.500h10l5 5.500" stroke="#00b8d0" stroke-width="1" fill="none"/><path d="M1404 949.800h16" stroke="#00a0b8" stroke-width="0.800"/>
</svg>
<div style="left:1521.6px;top:938px;width:2.5px;height:9.9px;background:#f5b010;"></div>
<div style="left:1525.9px;top:934px;width:2.5px;height:13.9px;background:#f5b010;"></div>
<div style="left:1530.1px;top:939.4px;width:2.5px;height:8.5px;background:#f5b010;"></div>
<div style="left:1534.3px;top:936px;width:2.5px;height:11.9px;background:#f5b010;"></div>
<svg width="1564" height="960" viewBox="0 0 1564 960">
<polygon points="1543.9,938.65 1550.7,938.65 1547.3,943.35" fill="#a0a0a0"/>
</svg>
</div></body></html>
